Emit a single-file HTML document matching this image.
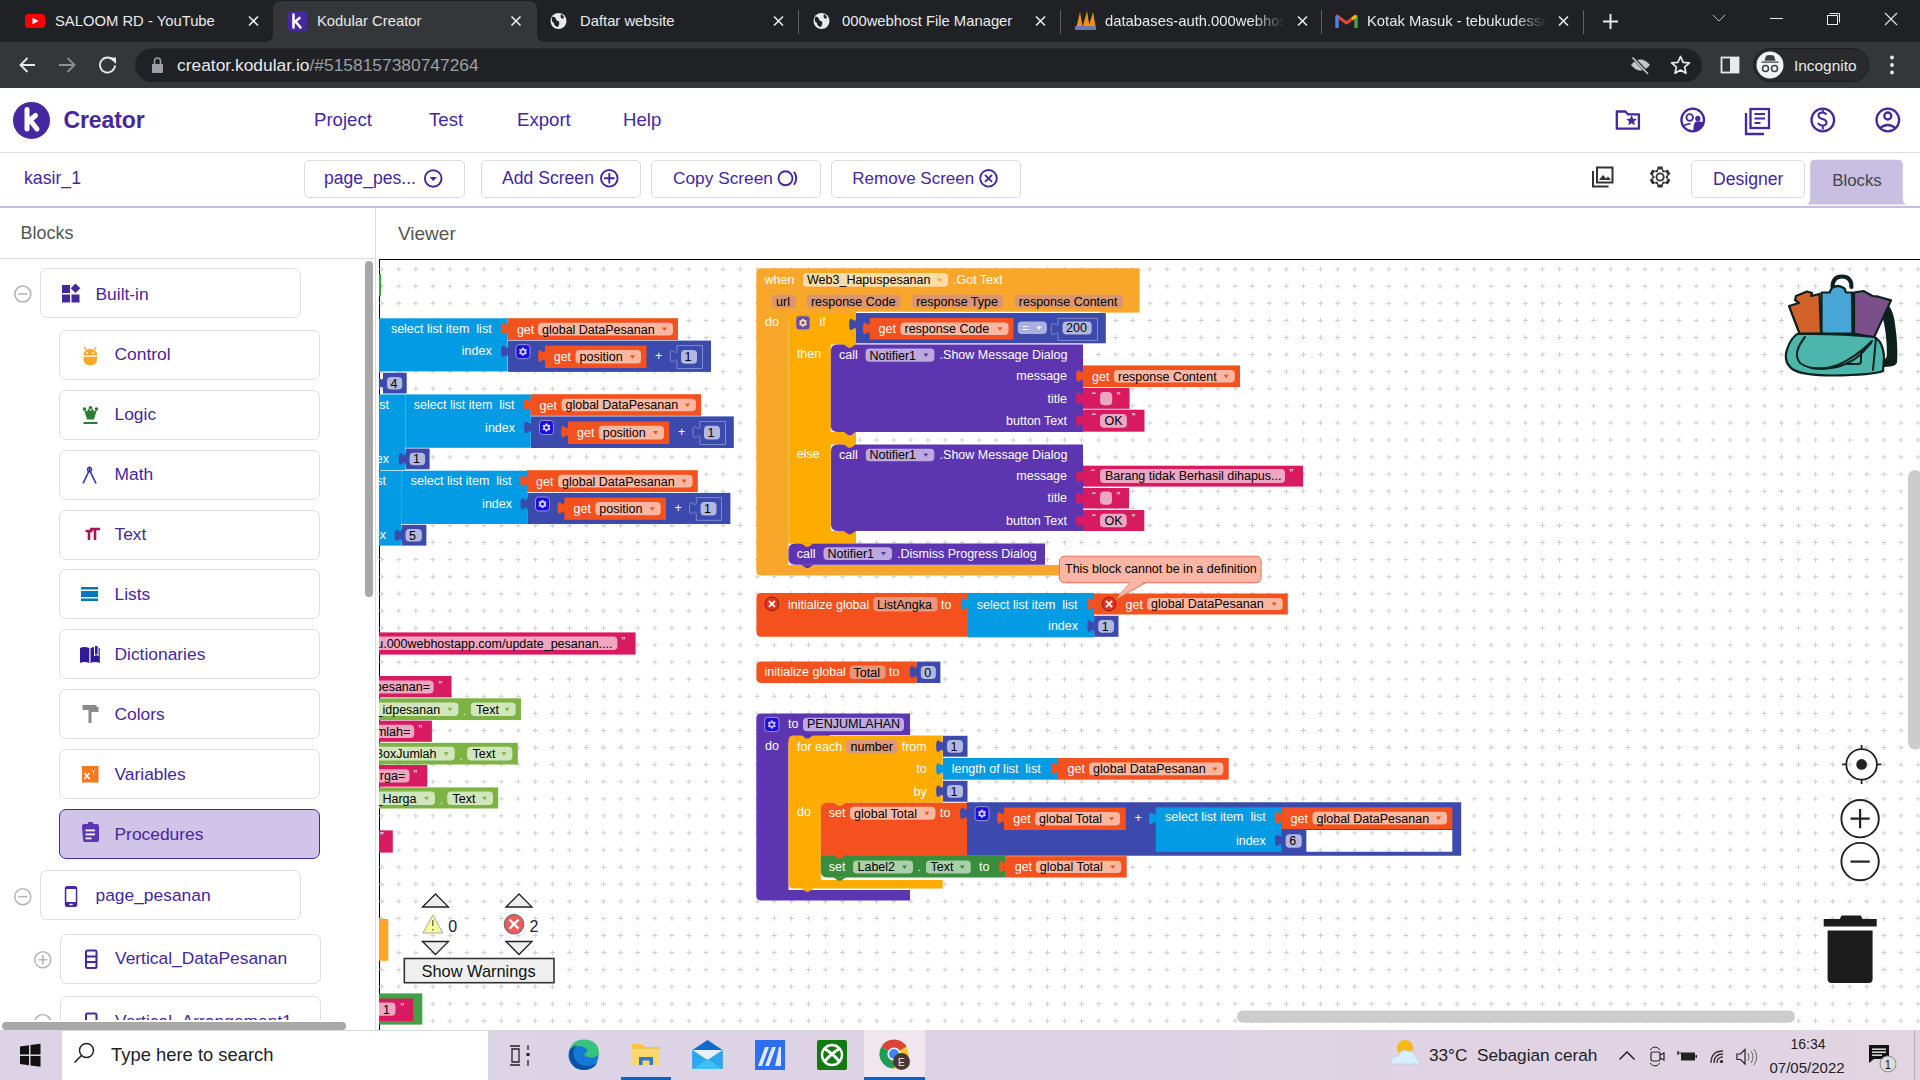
<!DOCTYPE html>
<html><head><meta charset="utf-8">
<style>
*{box-sizing:border-box;margin:0;padding:0}
html,body{width:1920px;height:1080px;overflow:hidden;background:#fff;font-family:"Liberation Sans",sans-serif;position:relative}
.a{position:absolute}
.t{position:absolute;white-space:nowrap;line-height:1;z-index:3}
#tabs{left:0;top:0;width:1920px;height:42px;background:#202124}
#addr{left:0;top:42px;width:1920px;height:46px;background:#35363a}
.tabtxt{color:#e8eaed;font-size:14.8px;top:13.5px}
.sep{position:absolute;top:10px;width:1px;height:24px;background:#5f6368}
.menu{color:#4527a0;font-size:18.6px;top:111px}
.btn{position:absolute;top:159.8px;height:37.8px;border:1px solid #dcdcdc;border-radius:5px;background:transparent}
.btxt{color:#4527a0;font-size:17.6px;top:170px}
.item{position:absolute;height:50px;border:1px solid #dedede;border-radius:7px;background:transparent}
.itxt{color:#4527a0;font-size:17.4px}
</style></head><body>
<!-- ============ CHROME TABS ============ -->
<div id="tabs" class="a"></div>
<!-- active tab -->
<svg class="a" style="left:0;top:0" width="1920" height="88">
  <path d="M265,42 q8,0 8,-8 L273,9 q0,-8 8,-8 L529,1 q8,0 8,8 L537,34 q0,8 8,8 Z" fill="#35363a"/>
  <!-- youtube icon -->
  <rect x="25" y="14" width="20" height="14" rx="3.5" fill="#ff0000"/>
  <path d="M32.5,17.8 L38.5,21 L32.5,24.2 Z" fill="#fff"/>
  <!-- close x's -->
  <g stroke="#e8eaed" stroke-width="1.6">
    <path d="M249,16.5 l9,9 M258,16.5 l-9,9"/>
    <path d="M511.5,16.5 l9,9 M520.5,16.5 l-9,9"/>
    <path d="M774,16.5 l9,9 M783,16.5 l-9,9"/>
    <path d="M1036,16.5 l9,9 M1045,16.5 l-9,9"/>
    <path d="M1298,16.5 l9,9 M1307,16.5 l-9,9"/>
    <path d="M1559,16.5 l9,9 M1568,16.5 l-9,9"/>
  </g>
  <!-- kodular icon -->
  <rect x="288" y="11" width="19" height="20" rx="3" fill="#4527a0"/>
  <path d="M293.5,14.5 l0,13 M293.5,23 l6,-5 M295.5,21.5 l5,6" stroke="#fff" stroke-width="2.6" fill="none" stroke-linecap="round"/>
  <!-- globes -->
  <g fill="#e8eaed">
    <circle cx="558.5" cy="21" r="8"/>
    <circle cx="821.5" cy="21" r="8"/>
  </g>
  <g fill="#202124">
    <path d="M552,17 q3,-1 4,2 q1,3 3,2 q1,3 -1,6 q-4,-1 -4,-4 q-3,-1 -2,-6 Z"/>
    <path d="M561,14 q3,2 3,4 q-2,1 -3,0 q-1,-2 0,-4Z"/>
    <path d="M815,17 q3,-1 4,2 q1,3 3,2 q1,3 -1,6 q-4,-1 -4,-4 q-3,-1 -2,-6 Z"/>
    <path d="M824,14 q3,2 3,4 q-2,1 -3,0 q-1,-2 0,-4Z"/>
  </g>
  <!-- PMA icon -->
  <path d="M1076,29 l4,-17 l3,17 Z M1082,29 l5,-18 l3,18 Z M1088,29 l5,-17 l3,17 Z" fill="#f29111"/>
  <rect x="1075" y="26" width="21" height="4" fill="#6c78af"/>
  <!-- gmail -->
  <path d="M1337,28 L1337,16 L1346.5,23 L1356,16 L1356,28" fill="none" stroke="#ea4335" stroke-width="3" stroke-linejoin="round"/>
  <path d="M1337,16 L1337,28" stroke="#4285f4" stroke-width="3"/>
  <path d="M1356,16 L1356,28" stroke="#34a853" stroke-width="3"/>
  <path d="M1352,19 L1356,16" stroke="#fbbc04" stroke-width="3"/>
  <!-- separators -->
  <g fill="#5f6368"><rect x="798" y="10" width="1" height="24"/><rect x="1060" y="10" width="1" height="24"/><rect x="1321" y="10" width="1" height="24"/><rect x="1583" y="10" width="1" height="24"/></g>
  <!-- plus -->
  <path d="M1610.5,14 l0,15 M1603,21.5 l15,0" stroke="#e8eaed" stroke-width="2"/>
  <!-- window controls -->
  <path d="M1713,15 l6,6 l6,-6" stroke="#bdc1c6" stroke-width="1" fill="none"/>
  <path d="M1770,18.5 l13,0" stroke="#e8eaed" stroke-width="1"/>
  <rect x="1827.5" y="15.5" width="10" height="9" fill="none" stroke="#e8eaed" stroke-width="1"/>
  <path d="M1829.5,13.5 l10,0 l0,9" stroke="#e8eaed" stroke-width="1" fill="none"/>
  <path d="M1885,13 l12,12 M1897,13 l-12,12" stroke="#e8eaed" stroke-width="1.1"/>
  <!-- address bar row -->
  <rect x="0" y="42" width="1920" height="46" fill="#35363a"/>
  <path d="M265,42 q8,0 8,-8 L273,42 Z M537,34 q0,8 8,8 L537,42 Z" fill="#35363a"/>
  <g stroke="#e8eaed" stroke-width="1.8" fill="none">
    <path d="M21,65 l14,0 M27.5,58 l-7,7 l7,7"/>
  </g>
  <g stroke="#8e9093" stroke-width="1.8" fill="none">
    <path d="M59,65 l15,0 M67.5,58 l7,7 l-7,7"/>
  </g>
  <path d="M113.5,60.5 a7.5,7.5 0 1 0 1.5,5" stroke="#e8eaed" stroke-width="1.8" fill="none"/>
  <path d="M109.5,57.5 l6.5,0 l0,6.5 Z" fill="#e8eaed"/>
  <rect x="135" y="48.5" width="1567" height="33.5" rx="16.75" fill="#202124"/>
  <rect x="152" y="64" width="11" height="9" rx="1" fill="#9aa0a6"/>
  <path d="M154.5,64 l0,-3 a3,3 0 0 1 6,0 l0,3" stroke="#9aa0a6" stroke-width="1.6" fill="none"/>
  <!-- eye slash -->
  <path d="M1631,65 q9.5,-11 19,0 q-9.5,11 -19,0 Z" fill="#c4c7ca"/>
  <path d="M1632,56.5 l16,17" stroke="#202124" stroke-width="3.2"/>
  <path d="M1632.5,57.5 l15.5,16.5" stroke="#c4c7ca" stroke-width="1.7"/>
  <!-- star -->
  <path d="M1680.5,56.5 l2.6,5.8 l6.3,0.6 l-4.8,4.2 l1.4,6.2 l-5.5,-3.3 l-5.5,3.3 l1.4,-6.2 l-4.8,-4.2 l6.3,-0.6 Z" fill="none" stroke="#e8eaed" stroke-width="1.7" stroke-linejoin="round"/>
  <!-- side panel -->
  <rect x="1721.5" y="57.5" width="17" height="15" fill="none" stroke="#e8eaed" stroke-width="1.8"/>
  <rect x="1730" y="57.5" width="8.5" height="15" fill="#e8eaed"/>
  <!-- incognito pill -->
  <rect x="1753.5" y="48.5" width="115" height="33" rx="16.5" fill="#292a2d" stroke="#1c1d1f"/>
  <circle cx="1770" cy="65" r="13.5" fill="#f1f3f4"/>
  <path d="M1761.5,62.8 l17,0 l0,-1.3 l-17,0 Z M1764.5,60.8 l1.5,-5 q4,-1.5 8,0 l1.5,5 Z" fill="#3c4043"/>
  <circle cx="1765.5" cy="68.5" r="3" fill="none" stroke="#3c4043" stroke-width="1.5"/>
  <circle cx="1774.5" cy="68.5" r="3" fill="none" stroke="#3c4043" stroke-width="1.5"/>
  <g fill="#e8eaed"><circle cx="1892" cy="57.5" r="1.9"/><circle cx="1892" cy="65" r="1.9"/><circle cx="1892" cy="72.5" r="1.9"/></g>
</svg>
<div class="t tabtxt" style="left:55px">SALOOM RD - YouTube</div>
<div class="t tabtxt" style="left:317px">Kodular Creator</div>
<div class="t tabtxt" style="left:580px">Daftar website</div>
<div class="t tabtxt" style="left:842px">000webhost File Manager</div>
<div class="t tabtxt" style="left:1105px;width:180px;overflow:hidden;-webkit-mask-image:linear-gradient(90deg,#000 82%,transparent)">databases-auth.000webhost</div>
<div class="t tabtxt" style="left:1367px;width:180px;overflow:hidden;-webkit-mask-image:linear-gradient(90deg,#000 82%,transparent)">Kotak Masuk - tebukudesser</div>
<div class="t" style="left:177px;top:56.5px;font-size:17.4px;color:#e8eaed">creator.kodular.io<span style="color:#9aa0a6">/#5158157380747264</span></div>
<div class="t" style="left:1794px;top:57.5px;font-size:15.4px;color:#e8eaed">Incognito</div>

<!-- ============ KODULAR HEADER ============ -->
<svg class="a" style="left:0;top:88px;z-index:2" width="1920" height="120">
  <circle cx="31.5" cy="32.4" r="18.5" fill="#4527a0"/>
  <path d="M27,21.5 l0,19.5" stroke="#fff" stroke-width="5" stroke-linecap="round"/>
  <path d="M28,34 l7.5,-6.5 M29.5,31.5 l7.5,9.5" stroke="#fff" stroke-width="5" stroke-linecap="round"/>
  <rect x="0" y="64" width="1920" height="1" fill="#dedede"/>
  <!-- header icons -->
  <g fill="none" stroke="#4527a0" stroke-width="2.3">
    <path d="M1616.8,23.5 l8.5,0 l2.6,2.8 l11,0 l0,14.4 l-22.1,0 Z" stroke-linejoin="round"/>
    <circle cx="1692.7" cy="32" r="11.3"/>
    <path d="M1746,25 l0,21 l18,0"/>
    <rect x="1750.5" y="21" width="18.5" height="19"/>
    <circle cx="1822.8" cy="32" r="11.3"/>
    <circle cx="1887.8" cy="32" r="11.3"/>
    <circle cx="1887.8" cy="28" r="3.5"/>
    <path d="M1879.5,40.5 q8.3,-7 16.6,0"/>
  </g>
  <path d="M1631.6,27.3 l1.6,3.4 l3.7,0.4 l-2.8,2.5 l0.8,3.6 l-3.3,-1.9 l-3.3,1.9 l0.8,-3.6 l-2.8,-2.5 l3.7,-0.4 Z" fill="#4527a0"/>
  <g fill="#4527a0">
    <circle cx="1689.7" cy="29.5" r="3.3" fill="none" stroke="#4527a0" stroke-width="1.8"/><circle cx="1697.8" cy="30.4" r="2.6"/>
    <path d="M1693.5,43.5 a11.5,11.5 0 0 0 10.5,-8.8 q-4,-2.2 -8,-1.2 q-3,1.5 -2.5,10 Z"/><path d="M1684,37.5 q3,-1.5 6.5,-1.8" stroke="#4527a0" stroke-width="1.8" fill="none"/>
    <rect x="1754.5" y="25" width="10.5" height="2"/><rect x="1754.5" y="29.5" width="10.5" height="2"/><rect x="1754.5" y="34" width="6" height="2"/>
  </g>
  <path d="M1826.5,26.5 q-2,-2 -4,-2 q-4,0 -4,3 q0,2.5 4,3.5 q4,1 4,3.5 q0,3 -4,3 q-3,0 -4.5,-2.5 M1822.8,22 l0,3 M1822.8,38.5 l0,3" fill="none" stroke="#4527a0" stroke-width="2"/>
  <!-- toolbar buttons icons -->
  <g fill="none" stroke="#4527a0" stroke-width="1.9">
    <circle cx="433.2" cy="90.5" r="8.3"/>
    <circle cx="609.3" cy="90.3" r="8.3"/>
    <path d="M609.3,85 l0,10.6 M604,90.3 l10.6,0"/>
    <circle cx="785.5" cy="90.3" r="7"/>
    <path d="M794,83.8 q4.5,6.5 0,13"/>
    <circle cx="988.5" cy="90.3" r="8.3"/>
    <path d="M985,86.8 l7,7 M992,86.8 l-7,7"/>
  </g>
  <path d="M429.5,89 l7.4,0 l-3.7,4 Z" fill="#4527a0"/>
  <!-- gallery / gear -->
  <g fill="none" stroke="#333" stroke-width="2">
    <path d="M1593,83 l0,15.5 l15.5,0"/>
    <rect x="1597" y="79.5" width="15.5" height="15" />
  </g>
  <path d="M1599,92 l4,-5 l3,3.5 l2,-2 l3,3.5 Z" fill="#333"/>
  <path transform="translate(1647.0,75.9) scale(1.09)" d="M19.14,12.94c0.04-0.3,0.06-0.61,0.06-0.94c0-0.32-0.02-0.64-0.07-0.94l2.03-1.58c0.18-0.14,0.23-0.41,0.12-0.61l-1.92-3.32c-0.12-0.22-0.37-0.29-0.59-0.22l-2.39,0.96c-0.5-0.38-1.03-0.7-1.62-0.94L14.4,2.81c-0.04-0.24-0.24-0.41-0.48-0.41h-3.84c-0.24,0-0.43,0.17-0.47,0.41L9.25,5.35C8.66,5.59,8.12,5.92,7.63,6.29L5.24,5.33c-0.22-0.08-0.47,0-0.59,0.22L2.74,8.87C2.62,9.08,2.66,9.34,2.86,9.48l2.03,1.58C4.84,11.36,4.8,11.69,4.8,12s0.02,0.64,0.07,0.94l-2.03,1.58c-0.18,0.14-0.23,0.41-0.12,0.61l1.92,3.32c0.12,0.22,0.37,0.29,0.59,0.22l2.39-0.96c0.5,0.38,1.03,0.7,1.62,0.94l0.36,2.54c0.05,0.24,0.24,0.41,0.48,0.41h3.84c0.24,0,0.44-0.17,0.47-0.41l0.36-2.54c0.59-0.24,1.13-0.56,1.62-0.94l2.39,0.96c0.22,0.08,0.47,0,0.59-0.22l1.92-3.32c0.12-0.22,0.07-0.47-0.12-0.61L19.14,12.94z" fill="#333"/>
  <path transform="translate(1650.7,79.6) scale(0.785)" d="M19.14,12.94c0.04-0.3,0.06-0.61,0.06-0.94c0-0.32-0.02-0.64-0.07-0.94l2.03-1.58c0.18-0.14,0.23-0.41,0.12-0.61l-1.92-3.32c-0.12-0.22-0.37-0.29-0.59-0.22l-2.39,0.96c-0.5-0.38-1.03-0.7-1.62-0.94L14.4,2.81c-0.04-0.24-0.24-0.41-0.48-0.41h-3.84c-0.24,0-0.43,0.17-0.47,0.41L9.25,5.35C8.66,5.59,8.12,5.92,7.63,6.29L5.24,5.33c-0.22-0.08-0.47,0-0.59,0.22L2.74,8.87C2.62,9.08,2.66,9.34,2.86,9.48l2.03,1.58C4.84,11.36,4.8,11.69,4.8,12s0.02,0.64,0.07,0.94l-2.03,1.58c-0.18,0.14-0.23,0.41-0.12,0.61l1.92,3.32c0.12,0.22,0.37,0.29,0.59,0.22l2.39-0.96c0.5,0.38,1.03,0.7,1.62,0.94l0.36,2.54c0.05,0.24,0.24,0.41,0.48,0.41h3.84c0.24,0,0.44-0.17,0.47-0.41l0.36-2.54c0.59-0.24,1.13-0.56,1.62-0.94l2.39,0.96c0.22,0.08,0.47,0,0.59-0.22l1.92-3.32c0.12-0.22,0.07-0.47-0.12-0.61L19.14,12.94z" fill="#fff"/>
  <circle cx="1660.1" cy="89" r="3.6" fill="none" stroke="#333" stroke-width="1.9"/>
  <!-- blocks tab -->
  <path d="M1805,116.4 q5.2,0 5.2,-6 L1810.2,76.6 q0,-4.8 4.8,-4.8 L1898,71.8 q4.8,0 4.8,4.8 L1902.8,110.4 q0,6 5.5,6 Z" fill="#c8bfe3"/>
  <rect x="0" y="118" width="1920" height="2.2" fill="#c5bde2"/>
</svg>
<div class="t" style="left:63.5px;top:109px;font-size:23px;font-weight:bold;color:#4527a0;letter-spacing:-0.1px">Creator</div>
<div class="t menu" style="left:314px">Project</div>
<div class="t menu" style="left:429px">Test</div>
<div class="t menu" style="left:517px">Export</div>
<div class="t menu" style="left:623px">Help</div>
<div class="t" style="left:24px;top:169.5px;font-size:17.7px;color:#4527a0">kasir_1</div>
<div class="btn" style="left:303.5px;width:161px"></div>
<div class="btn" style="left:480.5px;width:160px"></div>
<div class="btn" style="left:651px;width:170px"></div>
<div class="btn" style="left:831px;width:190px"></div>
<div class="btn" style="left:1691px;width:114px"></div>
<div class="t btxt" style="left:324px">page_pes...</div>
<div class="t btxt" style="left:502px">Add Screen</div>
<div class="t btxt" style="left:673px;font-size:17.3px">Copy Screen</div>
<div class="t btxt" style="left:852.3px;font-size:17px">Remove Screen</div>
<div class="t btxt" style="left:1713px;top:171px">Designer</div>
<div class="t btxt" style="left:1832.3px;top:172.8px;color:#444;font-size:16.8px">Blocks</div>

<!-- ============ LEFT PANEL ============ -->
<div class="a" style="left:375px;top:208px;width:1px;height:822px;background:#dcdcdc"></div>
<div class="a" style="left:0;top:258px;width:375px;height:1px;background:#dcdcdc"></div>
<div class="t" style="left:20.5px;top:223.5px;font-size:18px;color:#555">Blocks</div>
<div class="t" style="left:398px;top:223.5px;font-size:19px;color:#555">Viewer</div>
<div class="a" style="left:0;top:259px;width:375px;height:761px;overflow:hidden">
  <svg class="a" style="left:0;top:-259px;z-index:2" width="375" height="1280">
    <g fill="none" stroke="#b5b5b5" stroke-width="1.6">
      <circle cx="22.8" cy="294" r="8"/><path d="M18.3,294 l9,0"/>
      <circle cx="22.8" cy="896.7" r="8"/><path d="M18.3,896.7 l9,0"/>
      <circle cx="42.8" cy="959.8" r="8"/><path d="M38.3,959.8 l9,0 M42.8,955.3 l0,9"/>
      <circle cx="42.8" cy="1022.5" r="8"/>
    </g>
    <!-- icons -->
    <g fill="#4527a0">
      <rect x="62" y="285" width="8" height="8"/><rect x="62" y="294.5" width="8" height="8"/><rect x="71.5" y="294.5" width="8" height="8"/>
      <path d="M75.5,283.5 l4.8,4.8 l-4.8,4.8 l-4.8,-4.8 Z"/>
    </g>
    <path d="M83.5,355.5 q0,-6.5 6.8,-6.5 q6.8,0 6.8,6.5 Z M83.5,356.8 l13.6,0 l0,2 q0,6.4 -6.8,6.4 q-6.8,0 -6.8,-6.4 Z" fill="#f9a825"/>
    <path d="M86,350 l-1.5,-3 M94.6,350 l1.5,-3" stroke="#f9a825" stroke-width="1.2"/>
    <g fill="#fff"><circle cx="87.2" cy="352.8" r="1"/><circle cx="93.4" cy="352.8" r="1"/></g>
    <path d="M84,409.5 l3,10 l7,0 l3,-10 l-3,2 l-1.5,-3 l-2,2.5 l-2,-2.5 l-1.5,3 Z M83.5,422 l14,0 l0,2 l-14,0 Z" fill="#2e7d32"/><g fill="#2e7d32"><circle cx="84.5" cy="409" r="1.8"/><circle cx="90.5" cy="407.8" r="1.8"/><circle cx="96.5" cy="409" r="1.8"/></g>
    <path d="M83,483.5 l6.5,-13.5 l6.5,13.5 M89.5,469.5 l0,-3" stroke="#3b3ba8" stroke-width="1.7" fill="none"/>
    <circle cx="89.5" cy="469.5" r="2" fill="none" stroke="#3b3ba8" stroke-width="1.4"/>
    <path d="M89,531 l0,9 M85.5,531 l7,0 M95,529 l0,11 M90,529 l10,0" stroke="#ad1457" stroke-width="2.6" fill="none"/>
    <g fill="#0277bd"><rect x="81" y="587" width="17" height="2.5"/><rect x="81" y="591" width="17" height="6"/><rect x="81" y="598.5" width="17" height="2.5"/></g>
    <path d="M80,648 q4.5,-2 9.3,0 l0,15 q-5,-2 -9.3,0 Z M90.5,648 q4.5,-2 9.3,0 l0,15 q-4.5,-2 -9.3,0 Z" fill="#311b92"/>
    <path d="M94.5,646 l0,10 l1.8,-1.8 l1.8,1.8 l0,-10" stroke="#fff" stroke-width="1" fill="#311b92"/>
    <path d="M82.5,705 l14,0 l0,5 l-14,0 Z M96.5,707 l2,0 l0,5 l-7,0 l0,11 l-3,0 l0,-13 l8,0 Z" fill="#8a8a8a"/>
    <rect x="82" y="766" width="16.5" height="16.5" fill="#f4791f"/>
    <path d="M84.5,773 l5,6 M89.5,773 l-5,6" stroke="#fff" stroke-width="1.6"/>
    <path d="M92,769 l1.5,2 l1.5,-2 M93.5,771 l0,3" stroke="#fff" stroke-width="1"/>
    <path d="M82,826 q0,-2 2,-2 l3.5,0 l1,-2 l4,0 l1,2 l3.5,0 q2,0 2,2 l0,14 q0,2 -2,2 l-12,0 q-2,0 -2,-2 Z" fill="#5e35b1"/>
    <g fill="#fff"><rect x="85.5" y="829.5" width="9.5" height="1.8"/><rect x="85.5" y="833.5" width="9.5" height="1.8"/><rect x="85.5" y="837.5" width="6" height="1.8"/></g>
    <rect x="64.8" y="886" width="12.5" height="21" rx="2.5" fill="#4527a0"/><rect x="66.3" y="889" width="9.5" height="13" fill="#fff"/><rect x="69.3" y="903.8" width="3.5" height="1.5" rx="0.7" fill="#fff"/>
    <rect x="86" y="950.5" width="10.5" height="17.5" rx="1.5" fill="none" stroke="#4527a0" stroke-width="2"/>
    <path d="M86,956.5 l10.5,0 M86,962 l10.5,0" stroke="#4527a0" stroke-width="2"/>
    <rect x="86" y="1013.5" width="10.5" height="17.5" rx="1.5" fill="none" stroke="#4527a0" stroke-width="2"/>
  </svg>
  <div class="item" style="left:40px;top:8.5px;width:261px"></div>
  <div class="item" style="left:59px;top:70.5px;width:261px"></div>
  <div class="item" style="left:59px;top:130.5px;width:261px"></div>
  <div class="item" style="left:59px;top:190.5px;width:261px"></div>
  <div class="item" style="left:59px;top:250.5px;width:261px"></div>
  <div class="item" style="left:59px;top:310px;width:261px"></div>
  <div class="item" style="left:59px;top:370px;width:261px"></div>
  <div class="item" style="left:59px;top:430px;width:261px"></div>
  <div class="item" style="left:59px;top:490px;width:261px"></div>
  <div class="item" style="left:59px;top:550px;width:261px;background:#d1c4e9;border:1.5px solid #4527a0"></div>
  <div class="item" style="left:40px;top:611px;width:261px"></div>
  <div class="item" style="left:60px;top:674.5px;width:261px"></div>
  <div class="item" style="left:60px;top:737px;width:261px"></div>
</div>
<!-- left panel svg icons painted over items -->

<div class="t itxt" style="left:95.5px;top:285.5px">Built-in</div>
<div class="t itxt" style="left:114.5px;top:345.5px">Control</div>
<div class="t itxt" style="left:114.5px;top:405.5px">Logic</div>
<div class="t itxt" style="left:114.5px;top:465.5px">Math</div>
<div class="t itxt" style="left:114.5px;top:525.5px">Text</div>
<div class="t itxt" style="left:114.5px;top:585.5px">Lists</div>
<div class="t itxt" style="left:114.5px;top:645.5px">Dictionaries</div>
<div class="t itxt" style="left:114.5px;top:705.5px">Colors</div>
<div class="t itxt" style="left:114.5px;top:765.5px">Variables</div>
<div class="t itxt" style="left:114.5px;top:825.5px">Procedures</div>
<div class="t itxt" style="left:95.5px;top:887.0px">page_pesanan</div>
<div class="t itxt" style="left:115px;top:950.0px">Vertical_DataPesanan</div>
<div class="a" style="left:0;top:997px;width:375px;height:23px;overflow:hidden"><div class="t itxt" style="left:115px;top:15.5px">Vertical_Arrangement1</div></div>

<div class="a" style="left:2px;top:1022px;width:344px;height:7.6px;border-radius:4px;background:#a8a8a8"></div>
<div class="a" style="left:365px;top:261px;width:8px;height:336px;border-radius:4px;background:#a8a8a8"></div>

<!-- ============ CANVAS ============ -->
<svg class="a" style="left:0;top:0;font-family:'Liberation Sans',sans-serif" width="1920" height="1080">
  <defs>
    <pattern id="grid" patternUnits="userSpaceOnUse" x="-2.745" y="4.845" width="17.07" height="17.07">
      <path d="M6.035,8.535 l5,0 M8.535,6.035 l0,5" stroke="#cdcdcd" stroke-width="1"/>
    </pattern>
    <clipPath id="cv"><rect x="379" y="259" width="1541" height="771"/></clipPath>
  </defs>
  <g clip-path="url(#cv)">
    <rect x="379" y="259" width="1541" height="771" fill="#fff"/>
    
    <rect x="379" y="259" width="1541" height="1" fill="#000"/>
    <rect x="379" y="259" width="1" height="771" fill="#000"/>
<path d="M379.21 269.18h5M381.71 266.68v5M396.28 269.18h5M398.78 266.68v5M413.35 269.18h5M415.85 266.68v5M430.42 269.18h5M432.92 266.68v5M447.49 269.18h5M449.99 266.68v5M464.56 269.18h5M467.06 266.68v5M481.63 269.18h5M484.13 266.68v5M498.70 269.18h5M501.20 266.68v5M515.77 269.18h5M518.27 266.68v5M532.84 269.18h5M535.34 266.68v5M549.91 269.18h5M552.41 266.68v5M566.98 269.18h5M569.48 266.68v5M584.05 269.18h5M586.55 266.68v5M601.12 269.18h5M603.62 266.68v5M618.19 269.18h5M620.69 266.68v5M635.26 269.18h5M637.76 266.68v5M652.33 269.18h5M654.83 266.68v5M669.40 269.18h5M671.90 266.68v5M686.47 269.18h5M688.97 266.68v5M703.54 269.18h5M706.04 266.68v5M720.61 269.18h5M723.11 266.68v5M737.68 269.18h5M740.18 266.68v5M754.75 269.18h5M757.25 266.68v5M771.82 269.18h5M774.32 266.68v5M788.89 269.18h5M791.39 266.68v5M805.96 269.18h5M808.46 266.68v5M823.03 269.18h5M825.53 266.68v5M840.10 269.18h5M842.60 266.68v5M857.17 269.18h5M859.67 266.68v5M874.24 269.18h5M876.74 266.68v5M891.31 269.18h5M893.81 266.68v5M908.38 269.18h5M910.88 266.68v5M925.45 269.18h5M927.95 266.68v5M942.52 269.18h5M945.02 266.68v5M959.59 269.18h5M962.09 266.68v5M976.66 269.18h5M979.16 266.68v5M993.73 269.18h5M996.23 266.68v5M1010.80 269.18h5M1013.30 266.68v5M1027.87 269.18h5M1030.37 266.68v5M1044.94 269.18h5M1047.44 266.68v5M1062.01 269.18h5M1064.51 266.68v5M1079.08 269.18h5M1081.58 266.68v5M1096.15 269.18h5M1098.65 266.68v5M1113.22 269.18h5M1115.72 266.68v5M1130.29 269.18h5M1132.79 266.68v5M1147.36 269.18h5M1149.86 266.68v5M1164.43 269.18h5M1166.93 266.68v5M1181.50 269.18h5M1184.00 266.68v5M1198.57 269.18h5M1201.07 266.68v5M1215.64 269.18h5M1218.14 266.68v5M1232.71 269.18h5M1235.21 266.68v5M1249.78 269.18h5M1252.28 266.68v5M1266.85 269.18h5M1269.35 266.68v5M1283.92 269.18h5M1286.42 266.68v5M1300.99 269.18h5M1303.49 266.68v5M1318.06 269.18h5M1320.56 266.68v5M1335.13 269.18h5M1337.63 266.68v5M1352.20 269.18h5M1354.70 266.68v5M1369.27 269.18h5M1371.77 266.68v5M1386.34 269.18h5M1388.84 266.68v5M1403.41 269.18h5M1405.91 266.68v5M1420.48 269.18h5M1422.98 266.68v5M1437.55 269.18h5M1440.05 266.68v5M1454.62 269.18h5M1457.12 266.68v5M1471.69 269.18h5M1474.19 266.68v5M1488.76 269.18h5M1491.26 266.68v5M1505.83 269.18h5M1508.33 266.68v5M1522.90 269.18h5M1525.40 266.68v5M1539.97 269.18h5M1542.47 266.68v5M1557.04 269.18h5M1559.54 266.68v5M1574.11 269.18h5M1576.61 266.68v5M1591.18 269.18h5M1593.68 266.68v5M1608.25 269.18h5M1610.75 266.68v5M1625.32 269.18h5M1627.82 266.68v5M1642.39 269.18h5M1644.89 266.68v5M1659.46 269.18h5M1661.96 266.68v5M1676.53 269.18h5M1679.03 266.68v5M1693.60 269.18h5M1696.10 266.68v5M1710.67 269.18h5M1713.17 266.68v5M1727.74 269.18h5M1730.24 266.68v5M1744.81 269.18h5M1747.31 266.68v5M1761.88 269.18h5M1764.38 266.68v5M1778.95 269.18h5M1781.45 266.68v5M1796.02 269.18h5M1798.52 266.68v5M1813.09 269.18h5M1815.59 266.68v5M1830.16 269.18h5M1832.66 266.68v5M1847.23 269.18h5M1849.73 266.68v5M1864.30 269.18h5M1866.80 266.68v5M1881.37 269.18h5M1883.87 266.68v5M1898.44 269.18h5M1900.94 266.68v5M1915.51 269.18h5M1918.01 266.68v5M379.21 286.26h5M381.71 283.76v5M396.28 286.26h5M398.78 283.76v5M413.35 286.26h5M415.85 283.76v5M430.42 286.26h5M432.92 283.76v5M447.49 286.26h5M449.99 283.76v5M464.56 286.26h5M467.06 283.76v5M481.63 286.26h5M484.13 283.76v5M498.70 286.26h5M501.20 283.76v5M515.77 286.26h5M518.27 283.76v5M532.84 286.26h5M535.34 283.76v5M549.91 286.26h5M552.41 283.76v5M566.98 286.26h5M569.48 283.76v5M584.05 286.26h5M586.55 283.76v5M601.12 286.26h5M603.62 283.76v5M618.19 286.26h5M620.69 283.76v5M635.26 286.26h5M637.76 283.76v5M652.33 286.26h5M654.83 283.76v5M669.40 286.26h5M671.90 283.76v5M686.47 286.26h5M688.97 283.76v5M703.54 286.26h5M706.04 283.76v5M720.61 286.26h5M723.11 283.76v5M737.68 286.26h5M740.18 283.76v5M754.75 286.26h5M757.25 283.76v5M771.82 286.26h5M774.32 283.76v5M788.89 286.26h5M791.39 283.76v5M805.96 286.26h5M808.46 283.76v5M823.03 286.26h5M825.53 283.76v5M840.10 286.26h5M842.60 283.76v5M857.17 286.26h5M859.67 283.76v5M874.24 286.26h5M876.74 283.76v5M891.31 286.26h5M893.81 283.76v5M908.38 286.26h5M910.88 283.76v5M925.45 286.26h5M927.95 283.76v5M942.52 286.26h5M945.02 283.76v5M959.59 286.26h5M962.09 283.76v5M976.66 286.26h5M979.16 283.76v5M993.73 286.26h5M996.23 283.76v5M1010.80 286.26h5M1013.30 283.76v5M1027.87 286.26h5M1030.37 283.76v5M1044.94 286.26h5M1047.44 283.76v5M1062.01 286.26h5M1064.51 283.76v5M1079.08 286.26h5M1081.58 283.76v5M1096.15 286.26h5M1098.65 283.76v5M1113.22 286.26h5M1115.72 283.76v5M1130.29 286.26h5M1132.79 283.76v5M1147.36 286.26h5M1149.86 283.76v5M1164.43 286.26h5M1166.93 283.76v5M1181.50 286.26h5M1184.00 283.76v5M1198.57 286.26h5M1201.07 283.76v5M1215.64 286.26h5M1218.14 283.76v5M1232.71 286.26h5M1235.21 283.76v5M1249.78 286.26h5M1252.28 283.76v5M1266.85 286.26h5M1269.35 283.76v5M1283.92 286.26h5M1286.42 283.76v5M1300.99 286.26h5M1303.49 283.76v5M1318.06 286.26h5M1320.56 283.76v5M1335.13 286.26h5M1337.63 283.76v5M1352.20 286.26h5M1354.70 283.76v5M1369.27 286.26h5M1371.77 283.76v5M1386.34 286.26h5M1388.84 283.76v5M1403.41 286.26h5M1405.91 283.76v5M1420.48 286.26h5M1422.98 283.76v5M1437.55 286.26h5M1440.05 283.76v5M1454.62 286.26h5M1457.12 283.76v5M1471.69 286.26h5M1474.19 283.76v5M1488.76 286.26h5M1491.26 283.76v5M1505.83 286.26h5M1508.33 283.76v5M1522.90 286.26h5M1525.40 283.76v5M1539.97 286.26h5M1542.47 283.76v5M1557.04 286.26h5M1559.54 283.76v5M1574.11 286.26h5M1576.61 283.76v5M1591.18 286.26h5M1593.68 283.76v5M1608.25 286.26h5M1610.75 283.76v5M1625.32 286.26h5M1627.82 283.76v5M1642.39 286.26h5M1644.89 283.76v5M1659.46 286.26h5M1661.96 283.76v5M1676.53 286.26h5M1679.03 283.76v5M1693.60 286.26h5M1696.10 283.76v5M1710.67 286.26h5M1713.17 283.76v5M1727.74 286.26h5M1730.24 283.76v5M1744.81 286.26h5M1747.31 283.76v5M1761.88 286.26h5M1764.38 283.76v5M1778.95 286.26h5M1781.45 283.76v5M1796.02 286.26h5M1798.52 283.76v5M1813.09 286.26h5M1815.59 283.76v5M1830.16 286.26h5M1832.66 283.76v5M1847.23 286.26h5M1849.73 283.76v5M1864.30 286.26h5M1866.80 283.76v5M1881.37 286.26h5M1883.87 283.76v5M1898.44 286.26h5M1900.94 283.76v5M1915.51 286.26h5M1918.01 283.76v5M379.21 303.34h5M381.71 300.84v5M396.28 303.34h5M398.78 300.84v5M413.35 303.34h5M415.85 300.84v5M430.42 303.34h5M432.92 300.84v5M447.49 303.34h5M449.99 300.84v5M464.56 303.34h5M467.06 300.84v5M481.63 303.34h5M484.13 300.84v5M498.70 303.34h5M501.20 300.84v5M515.77 303.34h5M518.27 300.84v5M532.84 303.34h5M535.34 300.84v5M549.91 303.34h5M552.41 300.84v5M566.98 303.34h5M569.48 300.84v5M584.05 303.34h5M586.55 300.84v5M601.12 303.34h5M603.62 300.84v5M618.19 303.34h5M620.69 300.84v5M635.26 303.34h5M637.76 300.84v5M652.33 303.34h5M654.83 300.84v5M669.40 303.34h5M671.90 300.84v5M686.47 303.34h5M688.97 300.84v5M703.54 303.34h5M706.04 300.84v5M720.61 303.34h5M723.11 300.84v5M737.68 303.34h5M740.18 300.84v5M754.75 303.34h5M757.25 300.84v5M771.82 303.34h5M774.32 300.84v5M788.89 303.34h5M791.39 300.84v5M805.96 303.34h5M808.46 300.84v5M823.03 303.34h5M825.53 300.84v5M840.10 303.34h5M842.60 300.84v5M857.17 303.34h5M859.67 300.84v5M874.24 303.34h5M876.74 300.84v5M891.31 303.34h5M893.81 300.84v5M908.38 303.34h5M910.88 300.84v5M925.45 303.34h5M927.95 300.84v5M942.52 303.34h5M945.02 300.84v5M959.59 303.34h5M962.09 300.84v5M976.66 303.34h5M979.16 300.84v5M993.73 303.34h5M996.23 300.84v5M1010.80 303.34h5M1013.30 300.84v5M1027.87 303.34h5M1030.37 300.84v5M1044.94 303.34h5M1047.44 300.84v5M1062.01 303.34h5M1064.51 300.84v5M1079.08 303.34h5M1081.58 300.84v5M1096.15 303.34h5M1098.65 300.84v5M1113.22 303.34h5M1115.72 300.84v5M1130.29 303.34h5M1132.79 300.84v5M1147.36 303.34h5M1149.86 300.84v5M1164.43 303.34h5M1166.93 300.84v5M1181.50 303.34h5M1184.00 300.84v5M1198.57 303.34h5M1201.07 300.84v5M1215.64 303.34h5M1218.14 300.84v5M1232.71 303.34h5M1235.21 300.84v5M1249.78 303.34h5M1252.28 300.84v5M1266.85 303.34h5M1269.35 300.84v5M1283.92 303.34h5M1286.42 300.84v5M1300.99 303.34h5M1303.49 300.84v5M1318.06 303.34h5M1320.56 300.84v5M1335.13 303.34h5M1337.63 300.84v5M1352.20 303.34h5M1354.70 300.84v5M1369.27 303.34h5M1371.77 300.84v5M1386.34 303.34h5M1388.84 300.84v5M1403.41 303.34h5M1405.91 300.84v5M1420.48 303.34h5M1422.98 300.84v5M1437.55 303.34h5M1440.05 300.84v5M1454.62 303.34h5M1457.12 300.84v5M1471.69 303.34h5M1474.19 300.84v5M1488.76 303.34h5M1491.26 300.84v5M1505.83 303.34h5M1508.33 300.84v5M1522.90 303.34h5M1525.40 300.84v5M1539.97 303.34h5M1542.47 300.84v5M1557.04 303.34h5M1559.54 300.84v5M1574.11 303.34h5M1576.61 300.84v5M1591.18 303.34h5M1593.68 300.84v5M1608.25 303.34h5M1610.75 300.84v5M1625.32 303.34h5M1627.82 300.84v5M1642.39 303.34h5M1644.89 300.84v5M1659.46 303.34h5M1661.96 300.84v5M1676.53 303.34h5M1679.03 300.84v5M1693.60 303.34h5M1696.10 300.84v5M1710.67 303.34h5M1713.17 300.84v5M1727.74 303.34h5M1730.24 300.84v5M1744.81 303.34h5M1747.31 300.84v5M1761.88 303.34h5M1764.38 300.84v5M1778.95 303.34h5M1781.45 300.84v5M1796.02 303.34h5M1798.52 300.84v5M1813.09 303.34h5M1815.59 300.84v5M1830.16 303.34h5M1832.66 300.84v5M1847.23 303.34h5M1849.73 300.84v5M1864.30 303.34h5M1866.80 300.84v5M1881.37 303.34h5M1883.87 300.84v5M1898.44 303.34h5M1900.94 300.84v5M1915.51 303.34h5M1918.01 300.84v5M379.21 320.43h5M381.71 317.93v5M396.28 320.43h5M398.78 317.93v5M413.35 320.43h5M415.85 317.93v5M430.42 320.43h5M432.92 317.93v5M447.49 320.43h5M449.99 317.93v5M464.56 320.43h5M467.06 317.93v5M481.63 320.43h5M484.13 317.93v5M498.70 320.43h5M501.20 317.93v5M515.77 320.43h5M518.27 317.93v5M532.84 320.43h5M535.34 317.93v5M549.91 320.43h5M552.41 317.93v5M566.98 320.43h5M569.48 317.93v5M584.05 320.43h5M586.55 317.93v5M601.12 320.43h5M603.62 317.93v5M618.19 320.43h5M620.69 317.93v5M635.26 320.43h5M637.76 317.93v5M652.33 320.43h5M654.83 317.93v5M669.40 320.43h5M671.90 317.93v5M686.47 320.43h5M688.97 317.93v5M703.54 320.43h5M706.04 317.93v5M720.61 320.43h5M723.11 317.93v5M737.68 320.43h5M740.18 317.93v5M754.75 320.43h5M757.25 317.93v5M771.82 320.43h5M774.32 317.93v5M788.89 320.43h5M791.39 317.93v5M805.96 320.43h5M808.46 317.93v5M823.03 320.43h5M825.53 317.93v5M840.10 320.43h5M842.60 317.93v5M857.17 320.43h5M859.67 317.93v5M874.24 320.43h5M876.74 317.93v5M891.31 320.43h5M893.81 317.93v5M908.38 320.43h5M910.88 317.93v5M925.45 320.43h5M927.95 317.93v5M942.52 320.43h5M945.02 317.93v5M959.59 320.43h5M962.09 317.93v5M976.66 320.43h5M979.16 317.93v5M993.73 320.43h5M996.23 317.93v5M1010.80 320.43h5M1013.30 317.93v5M1027.87 320.43h5M1030.37 317.93v5M1044.94 320.43h5M1047.44 317.93v5M1062.01 320.43h5M1064.51 317.93v5M1079.08 320.43h5M1081.58 317.93v5M1096.15 320.43h5M1098.65 317.93v5M1113.22 320.43h5M1115.72 317.93v5M1130.29 320.43h5M1132.79 317.93v5M1147.36 320.43h5M1149.86 317.93v5M1164.43 320.43h5M1166.93 317.93v5M1181.50 320.43h5M1184.00 317.93v5M1198.57 320.43h5M1201.07 317.93v5M1215.64 320.43h5M1218.14 317.93v5M1232.71 320.43h5M1235.21 317.93v5M1249.78 320.43h5M1252.28 317.93v5M1266.85 320.43h5M1269.35 317.93v5M1283.92 320.43h5M1286.42 317.93v5M1300.99 320.43h5M1303.49 317.93v5M1318.06 320.43h5M1320.56 317.93v5M1335.13 320.43h5M1337.63 317.93v5M1352.20 320.43h5M1354.70 317.93v5M1369.27 320.43h5M1371.77 317.93v5M1386.34 320.43h5M1388.84 317.93v5M1403.41 320.43h5M1405.91 317.93v5M1420.48 320.43h5M1422.98 317.93v5M1437.55 320.43h5M1440.05 317.93v5M1454.62 320.43h5M1457.12 317.93v5M1471.69 320.43h5M1474.19 317.93v5M1488.76 320.43h5M1491.26 317.93v5M1505.83 320.43h5M1508.33 317.93v5M1522.90 320.43h5M1525.40 317.93v5M1539.97 320.43h5M1542.47 317.93v5M1557.04 320.43h5M1559.54 317.93v5M1574.11 320.43h5M1576.61 317.93v5M1591.18 320.43h5M1593.68 317.93v5M1608.25 320.43h5M1610.75 317.93v5M1625.32 320.43h5M1627.82 317.93v5M1642.39 320.43h5M1644.89 317.93v5M1659.46 320.43h5M1661.96 317.93v5M1676.53 320.43h5M1679.03 317.93v5M1693.60 320.43h5M1696.10 317.93v5M1710.67 320.43h5M1713.17 317.93v5M1727.74 320.43h5M1730.24 317.93v5M1744.81 320.43h5M1747.31 317.93v5M1761.88 320.43h5M1764.38 317.93v5M1778.95 320.43h5M1781.45 317.93v5M1796.02 320.43h5M1798.52 317.93v5M1813.09 320.43h5M1815.59 317.93v5M1830.16 320.43h5M1832.66 317.93v5M1847.23 320.43h5M1849.73 317.93v5M1864.30 320.43h5M1866.80 317.93v5M1881.37 320.43h5M1883.87 317.93v5M1898.44 320.43h5M1900.94 317.93v5M1915.51 320.43h5M1918.01 317.93v5M379.21 337.51h5M381.71 335.01v5M396.28 337.51h5M398.78 335.01v5M413.35 337.51h5M415.85 335.01v5M430.42 337.51h5M432.92 335.01v5M447.49 337.51h5M449.99 335.01v5M464.56 337.51h5M467.06 335.01v5M481.63 337.51h5M484.13 335.01v5M498.70 337.51h5M501.20 335.01v5M515.77 337.51h5M518.27 335.01v5M532.84 337.51h5M535.34 335.01v5M549.91 337.51h5M552.41 335.01v5M566.98 337.51h5M569.48 335.01v5M584.05 337.51h5M586.55 335.01v5M601.12 337.51h5M603.62 335.01v5M618.19 337.51h5M620.69 335.01v5M635.26 337.51h5M637.76 335.01v5M652.33 337.51h5M654.83 335.01v5M669.40 337.51h5M671.90 335.01v5M686.47 337.51h5M688.97 335.01v5M703.54 337.51h5M706.04 335.01v5M720.61 337.51h5M723.11 335.01v5M737.68 337.51h5M740.18 335.01v5M754.75 337.51h5M757.25 335.01v5M771.82 337.51h5M774.32 335.01v5M788.89 337.51h5M791.39 335.01v5M805.96 337.51h5M808.46 335.01v5M823.03 337.51h5M825.53 335.01v5M840.10 337.51h5M842.60 335.01v5M857.17 337.51h5M859.67 335.01v5M874.24 337.51h5M876.74 335.01v5M891.31 337.51h5M893.81 335.01v5M908.38 337.51h5M910.88 335.01v5M925.45 337.51h5M927.95 335.01v5M942.52 337.51h5M945.02 335.01v5M959.59 337.51h5M962.09 335.01v5M976.66 337.51h5M979.16 335.01v5M993.73 337.51h5M996.23 335.01v5M1010.80 337.51h5M1013.30 335.01v5M1027.87 337.51h5M1030.37 335.01v5M1044.94 337.51h5M1047.44 335.01v5M1062.01 337.51h5M1064.51 335.01v5M1079.08 337.51h5M1081.58 335.01v5M1096.15 337.51h5M1098.65 335.01v5M1113.22 337.51h5M1115.72 335.01v5M1130.29 337.51h5M1132.79 335.01v5M1147.36 337.51h5M1149.86 335.01v5M1164.43 337.51h5M1166.93 335.01v5M1181.50 337.51h5M1184.00 335.01v5M1198.57 337.51h5M1201.07 335.01v5M1215.64 337.51h5M1218.14 335.01v5M1232.71 337.51h5M1235.21 335.01v5M1249.78 337.51h5M1252.28 335.01v5M1266.85 337.51h5M1269.35 335.01v5M1283.92 337.51h5M1286.42 335.01v5M1300.99 337.51h5M1303.49 335.01v5M1318.06 337.51h5M1320.56 335.01v5M1335.13 337.51h5M1337.63 335.01v5M1352.20 337.51h5M1354.70 335.01v5M1369.27 337.51h5M1371.77 335.01v5M1386.34 337.51h5M1388.84 335.01v5M1403.41 337.51h5M1405.91 335.01v5M1420.48 337.51h5M1422.98 335.01v5M1437.55 337.51h5M1440.05 335.01v5M1454.62 337.51h5M1457.12 335.01v5M1471.69 337.51h5M1474.19 335.01v5M1488.76 337.51h5M1491.26 335.01v5M1505.83 337.51h5M1508.33 335.01v5M1522.90 337.51h5M1525.40 335.01v5M1539.97 337.51h5M1542.47 335.01v5M1557.04 337.51h5M1559.54 335.01v5M1574.11 337.51h5M1576.61 335.01v5M1591.18 337.51h5M1593.68 335.01v5M1608.25 337.51h5M1610.75 335.01v5M1625.32 337.51h5M1627.82 335.01v5M1642.39 337.51h5M1644.89 335.01v5M1659.46 337.51h5M1661.96 335.01v5M1676.53 337.51h5M1679.03 335.01v5M1693.60 337.51h5M1696.10 335.01v5M1710.67 337.51h5M1713.17 335.01v5M1727.74 337.51h5M1730.24 335.01v5M1744.81 337.51h5M1747.31 335.01v5M1761.88 337.51h5M1764.38 335.01v5M1778.95 337.51h5M1781.45 335.01v5M1796.02 337.51h5M1798.52 335.01v5M1813.09 337.51h5M1815.59 335.01v5M1830.16 337.51h5M1832.66 335.01v5M1847.23 337.51h5M1849.73 335.01v5M1864.30 337.51h5M1866.80 335.01v5M1881.37 337.51h5M1883.87 335.01v5M1898.44 337.51h5M1900.94 335.01v5M1915.51 337.51h5M1918.01 335.01v5M379.21 354.60h5M381.71 352.10v5M396.28 354.60h5M398.78 352.10v5M413.35 354.60h5M415.85 352.10v5M430.42 354.60h5M432.92 352.10v5M447.49 354.60h5M449.99 352.10v5M464.56 354.60h5M467.06 352.10v5M481.63 354.60h5M484.13 352.10v5M498.70 354.60h5M501.20 352.10v5M515.77 354.60h5M518.27 352.10v5M532.84 354.60h5M535.34 352.10v5M549.91 354.60h5M552.41 352.10v5M566.98 354.60h5M569.48 352.10v5M584.05 354.60h5M586.55 352.10v5M601.12 354.60h5M603.62 352.10v5M618.19 354.60h5M620.69 352.10v5M635.26 354.60h5M637.76 352.10v5M652.33 354.60h5M654.83 352.10v5M669.40 354.60h5M671.90 352.10v5M686.47 354.60h5M688.97 352.10v5M703.54 354.60h5M706.04 352.10v5M720.61 354.60h5M723.11 352.10v5M737.68 354.60h5M740.18 352.10v5M754.75 354.60h5M757.25 352.10v5M771.82 354.60h5M774.32 352.10v5M788.89 354.60h5M791.39 352.10v5M805.96 354.60h5M808.46 352.10v5M823.03 354.60h5M825.53 352.10v5M840.10 354.60h5M842.60 352.10v5M857.17 354.60h5M859.67 352.10v5M874.24 354.60h5M876.74 352.10v5M891.31 354.60h5M893.81 352.10v5M908.38 354.60h5M910.88 352.10v5M925.45 354.60h5M927.95 352.10v5M942.52 354.60h5M945.02 352.10v5M959.59 354.60h5M962.09 352.10v5M976.66 354.60h5M979.16 352.10v5M993.73 354.60h5M996.23 352.10v5M1010.80 354.60h5M1013.30 352.10v5M1027.87 354.60h5M1030.37 352.10v5M1044.94 354.60h5M1047.44 352.10v5M1062.01 354.60h5M1064.51 352.10v5M1079.08 354.60h5M1081.58 352.10v5M1096.15 354.60h5M1098.65 352.10v5M1113.22 354.60h5M1115.72 352.10v5M1130.29 354.60h5M1132.79 352.10v5M1147.36 354.60h5M1149.86 352.10v5M1164.43 354.60h5M1166.93 352.10v5M1181.50 354.60h5M1184.00 352.10v5M1198.57 354.60h5M1201.07 352.10v5M1215.64 354.60h5M1218.14 352.10v5M1232.71 354.60h5M1235.21 352.10v5M1249.78 354.60h5M1252.28 352.10v5M1266.85 354.60h5M1269.35 352.10v5M1283.92 354.60h5M1286.42 352.10v5M1300.99 354.60h5M1303.49 352.10v5M1318.06 354.60h5M1320.56 352.10v5M1335.13 354.60h5M1337.63 352.10v5M1352.20 354.60h5M1354.70 352.10v5M1369.27 354.60h5M1371.77 352.10v5M1386.34 354.60h5M1388.84 352.10v5M1403.41 354.60h5M1405.91 352.10v5M1420.48 354.60h5M1422.98 352.10v5M1437.55 354.60h5M1440.05 352.10v5M1454.62 354.60h5M1457.12 352.10v5M1471.69 354.60h5M1474.19 352.10v5M1488.76 354.60h5M1491.26 352.10v5M1505.83 354.60h5M1508.33 352.10v5M1522.90 354.60h5M1525.40 352.10v5M1539.97 354.60h5M1542.47 352.10v5M1557.04 354.60h5M1559.54 352.10v5M1574.11 354.60h5M1576.61 352.10v5M1591.18 354.60h5M1593.68 352.10v5M1608.25 354.60h5M1610.75 352.10v5M1625.32 354.60h5M1627.82 352.10v5M1642.39 354.60h5M1644.89 352.10v5M1659.46 354.60h5M1661.96 352.10v5M1676.53 354.60h5M1679.03 352.10v5M1693.60 354.60h5M1696.10 352.10v5M1710.67 354.60h5M1713.17 352.10v5M1727.74 354.60h5M1730.24 352.10v5M1744.81 354.60h5M1747.31 352.10v5M1761.88 354.60h5M1764.38 352.10v5M1778.95 354.60h5M1781.45 352.10v5M1796.02 354.60h5M1798.52 352.10v5M1813.09 354.60h5M1815.59 352.10v5M1830.16 354.60h5M1832.66 352.10v5M1847.23 354.60h5M1849.73 352.10v5M1864.30 354.60h5M1866.80 352.10v5M1881.37 354.60h5M1883.87 352.10v5M1898.44 354.60h5M1900.94 352.10v5M1915.51 354.60h5M1918.01 352.10v5M379.21 371.69h5M381.71 369.19v5M396.28 371.69h5M398.78 369.19v5M413.35 371.69h5M415.85 369.19v5M430.42 371.69h5M432.92 369.19v5M447.49 371.69h5M449.99 369.19v5M464.56 371.69h5M467.06 369.19v5M481.63 371.69h5M484.13 369.19v5M498.70 371.69h5M501.20 369.19v5M515.77 371.69h5M518.27 369.19v5M532.84 371.69h5M535.34 369.19v5M549.91 371.69h5M552.41 369.19v5M566.98 371.69h5M569.48 369.19v5M584.05 371.69h5M586.55 369.19v5M601.12 371.69h5M603.62 369.19v5M618.19 371.69h5M620.69 369.19v5M635.26 371.69h5M637.76 369.19v5M652.33 371.69h5M654.83 369.19v5M669.40 371.69h5M671.90 369.19v5M686.47 371.69h5M688.97 369.19v5M703.54 371.69h5M706.04 369.19v5M720.61 371.69h5M723.11 369.19v5M737.68 371.69h5M740.18 369.19v5M754.75 371.69h5M757.25 369.19v5M771.82 371.69h5M774.32 369.19v5M788.89 371.69h5M791.39 369.19v5M805.96 371.69h5M808.46 369.19v5M823.03 371.69h5M825.53 369.19v5M840.10 371.69h5M842.60 369.19v5M857.17 371.69h5M859.67 369.19v5M874.24 371.69h5M876.74 369.19v5M891.31 371.69h5M893.81 369.19v5M908.38 371.69h5M910.88 369.19v5M925.45 371.69h5M927.95 369.19v5M942.52 371.69h5M945.02 369.19v5M959.59 371.69h5M962.09 369.19v5M976.66 371.69h5M979.16 369.19v5M993.73 371.69h5M996.23 369.19v5M1010.80 371.69h5M1013.30 369.19v5M1027.87 371.69h5M1030.37 369.19v5M1044.94 371.69h5M1047.44 369.19v5M1062.01 371.69h5M1064.51 369.19v5M1079.08 371.69h5M1081.58 369.19v5M1096.15 371.69h5M1098.65 369.19v5M1113.22 371.69h5M1115.72 369.19v5M1130.29 371.69h5M1132.79 369.19v5M1147.36 371.69h5M1149.86 369.19v5M1164.43 371.69h5M1166.93 369.19v5M1181.50 371.69h5M1184.00 369.19v5M1198.57 371.69h5M1201.07 369.19v5M1215.64 371.69h5M1218.14 369.19v5M1232.71 371.69h5M1235.21 369.19v5M1249.78 371.69h5M1252.28 369.19v5M1266.85 371.69h5M1269.35 369.19v5M1283.92 371.69h5M1286.42 369.19v5M1300.99 371.69h5M1303.49 369.19v5M1318.06 371.69h5M1320.56 369.19v5M1335.13 371.69h5M1337.63 369.19v5M1352.20 371.69h5M1354.70 369.19v5M1369.27 371.69h5M1371.77 369.19v5M1386.34 371.69h5M1388.84 369.19v5M1403.41 371.69h5M1405.91 369.19v5M1420.48 371.69h5M1422.98 369.19v5M1437.55 371.69h5M1440.05 369.19v5M1454.62 371.69h5M1457.12 369.19v5M1471.69 371.69h5M1474.19 369.19v5M1488.76 371.69h5M1491.26 369.19v5M1505.83 371.69h5M1508.33 369.19v5M1522.90 371.69h5M1525.40 369.19v5M1539.97 371.69h5M1542.47 369.19v5M1557.04 371.69h5M1559.54 369.19v5M1574.11 371.69h5M1576.61 369.19v5M1591.18 371.69h5M1593.68 369.19v5M1608.25 371.69h5M1610.75 369.19v5M1625.32 371.69h5M1627.82 369.19v5M1642.39 371.69h5M1644.89 369.19v5M1659.46 371.69h5M1661.96 369.19v5M1676.53 371.69h5M1679.03 369.19v5M1693.60 371.69h5M1696.10 369.19v5M1710.67 371.69h5M1713.17 369.19v5M1727.74 371.69h5M1730.24 369.19v5M1744.81 371.69h5M1747.31 369.19v5M1761.88 371.69h5M1764.38 369.19v5M1778.95 371.69h5M1781.45 369.19v5M1796.02 371.69h5M1798.52 369.19v5M1813.09 371.69h5M1815.59 369.19v5M1830.16 371.69h5M1832.66 369.19v5M1847.23 371.69h5M1849.73 369.19v5M1864.30 371.69h5M1866.80 369.19v5M1881.37 371.69h5M1883.87 369.19v5M1898.44 371.69h5M1900.94 369.19v5M1915.51 371.69h5M1918.01 369.19v5M379.21 388.77h5M381.71 386.27v5M396.28 388.77h5M398.78 386.27v5M413.35 388.77h5M415.85 386.27v5M430.42 388.77h5M432.92 386.27v5M447.49 388.77h5M449.99 386.27v5M464.56 388.77h5M467.06 386.27v5M481.63 388.77h5M484.13 386.27v5M498.70 388.77h5M501.20 386.27v5M515.77 388.77h5M518.27 386.27v5M532.84 388.77h5M535.34 386.27v5M549.91 388.77h5M552.41 386.27v5M566.98 388.77h5M569.48 386.27v5M584.05 388.77h5M586.55 386.27v5M601.12 388.77h5M603.62 386.27v5M618.19 388.77h5M620.69 386.27v5M635.26 388.77h5M637.76 386.27v5M652.33 388.77h5M654.83 386.27v5M669.40 388.77h5M671.90 386.27v5M686.47 388.77h5M688.97 386.27v5M703.54 388.77h5M706.04 386.27v5M720.61 388.77h5M723.11 386.27v5M737.68 388.77h5M740.18 386.27v5M754.75 388.77h5M757.25 386.27v5M771.82 388.77h5M774.32 386.27v5M788.89 388.77h5M791.39 386.27v5M805.96 388.77h5M808.46 386.27v5M823.03 388.77h5M825.53 386.27v5M840.10 388.77h5M842.60 386.27v5M857.17 388.77h5M859.67 386.27v5M874.24 388.77h5M876.74 386.27v5M891.31 388.77h5M893.81 386.27v5M908.38 388.77h5M910.88 386.27v5M925.45 388.77h5M927.95 386.27v5M942.52 388.77h5M945.02 386.27v5M959.59 388.77h5M962.09 386.27v5M976.66 388.77h5M979.16 386.27v5M993.73 388.77h5M996.23 386.27v5M1010.80 388.77h5M1013.30 386.27v5M1027.87 388.77h5M1030.37 386.27v5M1044.94 388.77h5M1047.44 386.27v5M1062.01 388.77h5M1064.51 386.27v5M1079.08 388.77h5M1081.58 386.27v5M1096.15 388.77h5M1098.65 386.27v5M1113.22 388.77h5M1115.72 386.27v5M1130.29 388.77h5M1132.79 386.27v5M1147.36 388.77h5M1149.86 386.27v5M1164.43 388.77h5M1166.93 386.27v5M1181.50 388.77h5M1184.00 386.27v5M1198.57 388.77h5M1201.07 386.27v5M1215.64 388.77h5M1218.14 386.27v5M1232.71 388.77h5M1235.21 386.27v5M1249.78 388.77h5M1252.28 386.27v5M1266.85 388.77h5M1269.35 386.27v5M1283.92 388.77h5M1286.42 386.27v5M1300.99 388.77h5M1303.49 386.27v5M1318.06 388.77h5M1320.56 386.27v5M1335.13 388.77h5M1337.63 386.27v5M1352.20 388.77h5M1354.70 386.27v5M1369.27 388.77h5M1371.77 386.27v5M1386.34 388.77h5M1388.84 386.27v5M1403.41 388.77h5M1405.91 386.27v5M1420.48 388.77h5M1422.98 386.27v5M1437.55 388.77h5M1440.05 386.27v5M1454.62 388.77h5M1457.12 386.27v5M1471.69 388.77h5M1474.19 386.27v5M1488.76 388.77h5M1491.26 386.27v5M1505.83 388.77h5M1508.33 386.27v5M1522.90 388.77h5M1525.40 386.27v5M1539.97 388.77h5M1542.47 386.27v5M1557.04 388.77h5M1559.54 386.27v5M1574.11 388.77h5M1576.61 386.27v5M1591.18 388.77h5M1593.68 386.27v5M1608.25 388.77h5M1610.75 386.27v5M1625.32 388.77h5M1627.82 386.27v5M1642.39 388.77h5M1644.89 386.27v5M1659.46 388.77h5M1661.96 386.27v5M1676.53 388.77h5M1679.03 386.27v5M1693.60 388.77h5M1696.10 386.27v5M1710.67 388.77h5M1713.17 386.27v5M1727.74 388.77h5M1730.24 386.27v5M1744.81 388.77h5M1747.31 386.27v5M1761.88 388.77h5M1764.38 386.27v5M1778.95 388.77h5M1781.45 386.27v5M1796.02 388.77h5M1798.52 386.27v5M1813.09 388.77h5M1815.59 386.27v5M1830.16 388.77h5M1832.66 386.27v5M1847.23 388.77h5M1849.73 386.27v5M1864.30 388.77h5M1866.80 386.27v5M1881.37 388.77h5M1883.87 386.27v5M1898.44 388.77h5M1900.94 386.27v5M1915.51 388.77h5M1918.01 386.27v5M379.21 405.86h5M381.71 403.36v5M396.28 405.86h5M398.78 403.36v5M413.35 405.86h5M415.85 403.36v5M430.42 405.86h5M432.92 403.36v5M447.49 405.86h5M449.99 403.36v5M464.56 405.86h5M467.06 403.36v5M481.63 405.86h5M484.13 403.36v5M498.70 405.86h5M501.20 403.36v5M515.77 405.86h5M518.27 403.36v5M532.84 405.86h5M535.34 403.36v5M549.91 405.86h5M552.41 403.36v5M566.98 405.86h5M569.48 403.36v5M584.05 405.86h5M586.55 403.36v5M601.12 405.86h5M603.62 403.36v5M618.19 405.86h5M620.69 403.36v5M635.26 405.86h5M637.76 403.36v5M652.33 405.86h5M654.83 403.36v5M669.40 405.86h5M671.90 403.36v5M686.47 405.86h5M688.97 403.36v5M703.54 405.86h5M706.04 403.36v5M720.61 405.86h5M723.11 403.36v5M737.68 405.86h5M740.18 403.36v5M754.75 405.86h5M757.25 403.36v5M771.82 405.86h5M774.32 403.36v5M788.89 405.86h5M791.39 403.36v5M805.96 405.86h5M808.46 403.36v5M823.03 405.86h5M825.53 403.36v5M840.10 405.86h5M842.60 403.36v5M857.17 405.86h5M859.67 403.36v5M874.24 405.86h5M876.74 403.36v5M891.31 405.86h5M893.81 403.36v5M908.38 405.86h5M910.88 403.36v5M925.45 405.86h5M927.95 403.36v5M942.52 405.86h5M945.02 403.36v5M959.59 405.86h5M962.09 403.36v5M976.66 405.86h5M979.16 403.36v5M993.73 405.86h5M996.23 403.36v5M1010.80 405.86h5M1013.30 403.36v5M1027.87 405.86h5M1030.37 403.36v5M1044.94 405.86h5M1047.44 403.36v5M1062.01 405.86h5M1064.51 403.36v5M1079.08 405.86h5M1081.58 403.36v5M1096.15 405.86h5M1098.65 403.36v5M1113.22 405.86h5M1115.72 403.36v5M1130.29 405.86h5M1132.79 403.36v5M1147.36 405.86h5M1149.86 403.36v5M1164.43 405.86h5M1166.93 403.36v5M1181.50 405.86h5M1184.00 403.36v5M1198.57 405.86h5M1201.07 403.36v5M1215.64 405.86h5M1218.14 403.36v5M1232.71 405.86h5M1235.21 403.36v5M1249.78 405.86h5M1252.28 403.36v5M1266.85 405.86h5M1269.35 403.36v5M1283.92 405.86h5M1286.42 403.36v5M1300.99 405.86h5M1303.49 403.36v5M1318.06 405.86h5M1320.56 403.36v5M1335.13 405.86h5M1337.63 403.36v5M1352.20 405.86h5M1354.70 403.36v5M1369.27 405.86h5M1371.77 403.36v5M1386.34 405.86h5M1388.84 403.36v5M1403.41 405.86h5M1405.91 403.36v5M1420.48 405.86h5M1422.98 403.36v5M1437.55 405.86h5M1440.05 403.36v5M1454.62 405.86h5M1457.12 403.36v5M1471.69 405.86h5M1474.19 403.36v5M1488.76 405.86h5M1491.26 403.36v5M1505.83 405.86h5M1508.33 403.36v5M1522.90 405.86h5M1525.40 403.36v5M1539.97 405.86h5M1542.47 403.36v5M1557.04 405.86h5M1559.54 403.36v5M1574.11 405.86h5M1576.61 403.36v5M1591.18 405.86h5M1593.68 403.36v5M1608.25 405.86h5M1610.75 403.36v5M1625.32 405.86h5M1627.82 403.36v5M1642.39 405.86h5M1644.89 403.36v5M1659.46 405.86h5M1661.96 403.36v5M1676.53 405.86h5M1679.03 403.36v5M1693.60 405.86h5M1696.10 403.36v5M1710.67 405.86h5M1713.17 403.36v5M1727.74 405.86h5M1730.24 403.36v5M1744.81 405.86h5M1747.31 403.36v5M1761.88 405.86h5M1764.38 403.36v5M1778.95 405.86h5M1781.45 403.36v5M1796.02 405.86h5M1798.52 403.36v5M1813.09 405.86h5M1815.59 403.36v5M1830.16 405.86h5M1832.66 403.36v5M1847.23 405.86h5M1849.73 403.36v5M1864.30 405.86h5M1866.80 403.36v5M1881.37 405.86h5M1883.87 403.36v5M1898.44 405.86h5M1900.94 403.36v5M1915.51 405.86h5M1918.01 403.36v5M379.21 422.94h5M381.71 420.44v5M396.28 422.94h5M398.78 420.44v5M413.35 422.94h5M415.85 420.44v5M430.42 422.94h5M432.92 420.44v5M447.49 422.94h5M449.99 420.44v5M464.56 422.94h5M467.06 420.44v5M481.63 422.94h5M484.13 420.44v5M498.70 422.94h5M501.20 420.44v5M515.77 422.94h5M518.27 420.44v5M532.84 422.94h5M535.34 420.44v5M549.91 422.94h5M552.41 420.44v5M566.98 422.94h5M569.48 420.44v5M584.05 422.94h5M586.55 420.44v5M601.12 422.94h5M603.62 420.44v5M618.19 422.94h5M620.69 420.44v5M635.26 422.94h5M637.76 420.44v5M652.33 422.94h5M654.83 420.44v5M669.40 422.94h5M671.90 420.44v5M686.47 422.94h5M688.97 420.44v5M703.54 422.94h5M706.04 420.44v5M720.61 422.94h5M723.11 420.44v5M737.68 422.94h5M740.18 420.44v5M754.75 422.94h5M757.25 420.44v5M771.82 422.94h5M774.32 420.44v5M788.89 422.94h5M791.39 420.44v5M805.96 422.94h5M808.46 420.44v5M823.03 422.94h5M825.53 420.44v5M840.10 422.94h5M842.60 420.44v5M857.17 422.94h5M859.67 420.44v5M874.24 422.94h5M876.74 420.44v5M891.31 422.94h5M893.81 420.44v5M908.38 422.94h5M910.88 420.44v5M925.45 422.94h5M927.95 420.44v5M942.52 422.94h5M945.02 420.44v5M959.59 422.94h5M962.09 420.44v5M976.66 422.94h5M979.16 420.44v5M993.73 422.94h5M996.23 420.44v5M1010.80 422.94h5M1013.30 420.44v5M1027.87 422.94h5M1030.37 420.44v5M1044.94 422.94h5M1047.44 420.44v5M1062.01 422.94h5M1064.51 420.44v5M1079.08 422.94h5M1081.58 420.44v5M1096.15 422.94h5M1098.65 420.44v5M1113.22 422.94h5M1115.72 420.44v5M1130.29 422.94h5M1132.79 420.44v5M1147.36 422.94h5M1149.86 420.44v5M1164.43 422.94h5M1166.93 420.44v5M1181.50 422.94h5M1184.00 420.44v5M1198.57 422.94h5M1201.07 420.44v5M1215.64 422.94h5M1218.14 420.44v5M1232.71 422.94h5M1235.21 420.44v5M1249.78 422.94h5M1252.28 420.44v5M1266.85 422.94h5M1269.35 420.44v5M1283.92 422.94h5M1286.42 420.44v5M1300.99 422.94h5M1303.49 420.44v5M1318.06 422.94h5M1320.56 420.44v5M1335.13 422.94h5M1337.63 420.44v5M1352.20 422.94h5M1354.70 420.44v5M1369.27 422.94h5M1371.77 420.44v5M1386.34 422.94h5M1388.84 420.44v5M1403.41 422.94h5M1405.91 420.44v5M1420.48 422.94h5M1422.98 420.44v5M1437.55 422.94h5M1440.05 420.44v5M1454.62 422.94h5M1457.12 420.44v5M1471.69 422.94h5M1474.19 420.44v5M1488.76 422.94h5M1491.26 420.44v5M1505.83 422.94h5M1508.33 420.44v5M1522.90 422.94h5M1525.40 420.44v5M1539.97 422.94h5M1542.47 420.44v5M1557.04 422.94h5M1559.54 420.44v5M1574.11 422.94h5M1576.61 420.44v5M1591.18 422.94h5M1593.68 420.44v5M1608.25 422.94h5M1610.75 420.44v5M1625.32 422.94h5M1627.82 420.44v5M1642.39 422.94h5M1644.89 420.44v5M1659.46 422.94h5M1661.96 420.44v5M1676.53 422.94h5M1679.03 420.44v5M1693.60 422.94h5M1696.10 420.44v5M1710.67 422.94h5M1713.17 420.44v5M1727.74 422.94h5M1730.24 420.44v5M1744.81 422.94h5M1747.31 420.44v5M1761.88 422.94h5M1764.38 420.44v5M1778.95 422.94h5M1781.45 420.44v5M1796.02 422.94h5M1798.52 420.44v5M1813.09 422.94h5M1815.59 420.44v5M1830.16 422.94h5M1832.66 420.44v5M1847.23 422.94h5M1849.73 420.44v5M1864.30 422.94h5M1866.80 420.44v5M1881.37 422.94h5M1883.87 420.44v5M1898.44 422.94h5M1900.94 420.44v5M1915.51 422.94h5M1918.01 420.44v5M379.21 440.02h5M381.71 437.52v5M396.28 440.02h5M398.78 437.52v5M413.35 440.02h5M415.85 437.52v5M430.42 440.02h5M432.92 437.52v5M447.49 440.02h5M449.99 437.52v5M464.56 440.02h5M467.06 437.52v5M481.63 440.02h5M484.13 437.52v5M498.70 440.02h5M501.20 437.52v5M515.77 440.02h5M518.27 437.52v5M532.84 440.02h5M535.34 437.52v5M549.91 440.02h5M552.41 437.52v5M566.98 440.02h5M569.48 437.52v5M584.05 440.02h5M586.55 437.52v5M601.12 440.02h5M603.62 437.52v5M618.19 440.02h5M620.69 437.52v5M635.26 440.02h5M637.76 437.52v5M652.33 440.02h5M654.83 437.52v5M669.40 440.02h5M671.90 437.52v5M686.47 440.02h5M688.97 437.52v5M703.54 440.02h5M706.04 437.52v5M720.61 440.02h5M723.11 437.52v5M737.68 440.02h5M740.18 437.52v5M754.75 440.02h5M757.25 437.52v5M771.82 440.02h5M774.32 437.52v5M788.89 440.02h5M791.39 437.52v5M805.96 440.02h5M808.46 437.52v5M823.03 440.02h5M825.53 437.52v5M840.10 440.02h5M842.60 437.52v5M857.17 440.02h5M859.67 437.52v5M874.24 440.02h5M876.74 437.52v5M891.31 440.02h5M893.81 437.52v5M908.38 440.02h5M910.88 437.52v5M925.45 440.02h5M927.95 437.52v5M942.52 440.02h5M945.02 437.52v5M959.59 440.02h5M962.09 437.52v5M976.66 440.02h5M979.16 437.52v5M993.73 440.02h5M996.23 437.52v5M1010.80 440.02h5M1013.30 437.52v5M1027.87 440.02h5M1030.37 437.52v5M1044.94 440.02h5M1047.44 437.52v5M1062.01 440.02h5M1064.51 437.52v5M1079.08 440.02h5M1081.58 437.52v5M1096.15 440.02h5M1098.65 437.52v5M1113.22 440.02h5M1115.72 437.52v5M1130.29 440.02h5M1132.79 437.52v5M1147.36 440.02h5M1149.86 437.52v5M1164.43 440.02h5M1166.93 437.52v5M1181.50 440.02h5M1184.00 437.52v5M1198.57 440.02h5M1201.07 437.52v5M1215.64 440.02h5M1218.14 437.52v5M1232.71 440.02h5M1235.21 437.52v5M1249.78 440.02h5M1252.28 437.52v5M1266.85 440.02h5M1269.35 437.52v5M1283.92 440.02h5M1286.42 437.52v5M1300.99 440.02h5M1303.49 437.52v5M1318.06 440.02h5M1320.56 437.52v5M1335.13 440.02h5M1337.63 437.52v5M1352.20 440.02h5M1354.70 437.52v5M1369.27 440.02h5M1371.77 437.52v5M1386.34 440.02h5M1388.84 437.52v5M1403.41 440.02h5M1405.91 437.52v5M1420.48 440.02h5M1422.98 437.52v5M1437.55 440.02h5M1440.05 437.52v5M1454.62 440.02h5M1457.12 437.52v5M1471.69 440.02h5M1474.19 437.52v5M1488.76 440.02h5M1491.26 437.52v5M1505.83 440.02h5M1508.33 437.52v5M1522.90 440.02h5M1525.40 437.52v5M1539.97 440.02h5M1542.47 437.52v5M1557.04 440.02h5M1559.54 437.52v5M1574.11 440.02h5M1576.61 437.52v5M1591.18 440.02h5M1593.68 437.52v5M1608.25 440.02h5M1610.75 437.52v5M1625.32 440.02h5M1627.82 437.52v5M1642.39 440.02h5M1644.89 437.52v5M1659.46 440.02h5M1661.96 437.52v5M1676.53 440.02h5M1679.03 437.52v5M1693.60 440.02h5M1696.10 437.52v5M1710.67 440.02h5M1713.17 437.52v5M1727.74 440.02h5M1730.24 437.52v5M1744.81 440.02h5M1747.31 437.52v5M1761.88 440.02h5M1764.38 437.52v5M1778.95 440.02h5M1781.45 437.52v5M1796.02 440.02h5M1798.52 437.52v5M1813.09 440.02h5M1815.59 437.52v5M1830.16 440.02h5M1832.66 437.52v5M1847.23 440.02h5M1849.73 437.52v5M1864.30 440.02h5M1866.80 437.52v5M1881.37 440.02h5M1883.87 437.52v5M1898.44 440.02h5M1900.94 437.52v5M1915.51 440.02h5M1918.01 437.52v5M379.21 457.11h5M381.71 454.61v5M396.28 457.11h5M398.78 454.61v5M413.35 457.11h5M415.85 454.61v5M430.42 457.11h5M432.92 454.61v5M447.49 457.11h5M449.99 454.61v5M464.56 457.11h5M467.06 454.61v5M481.63 457.11h5M484.13 454.61v5M498.70 457.11h5M501.20 454.61v5M515.77 457.11h5M518.27 454.61v5M532.84 457.11h5M535.34 454.61v5M549.91 457.11h5M552.41 454.61v5M566.98 457.11h5M569.48 454.61v5M584.05 457.11h5M586.55 454.61v5M601.12 457.11h5M603.62 454.61v5M618.19 457.11h5M620.69 454.61v5M635.26 457.11h5M637.76 454.61v5M652.33 457.11h5M654.83 454.61v5M669.40 457.11h5M671.90 454.61v5M686.47 457.11h5M688.97 454.61v5M703.54 457.11h5M706.04 454.61v5M720.61 457.11h5M723.11 454.61v5M737.68 457.11h5M740.18 454.61v5M754.75 457.11h5M757.25 454.61v5M771.82 457.11h5M774.32 454.61v5M788.89 457.11h5M791.39 454.61v5M805.96 457.11h5M808.46 454.61v5M823.03 457.11h5M825.53 454.61v5M840.10 457.11h5M842.60 454.61v5M857.17 457.11h5M859.67 454.61v5M874.24 457.11h5M876.74 454.61v5M891.31 457.11h5M893.81 454.61v5M908.38 457.11h5M910.88 454.61v5M925.45 457.11h5M927.95 454.61v5M942.52 457.11h5M945.02 454.61v5M959.59 457.11h5M962.09 454.61v5M976.66 457.11h5M979.16 454.61v5M993.73 457.11h5M996.23 454.61v5M1010.80 457.11h5M1013.30 454.61v5M1027.87 457.11h5M1030.37 454.61v5M1044.94 457.11h5M1047.44 454.61v5M1062.01 457.11h5M1064.51 454.61v5M1079.08 457.11h5M1081.58 454.61v5M1096.15 457.11h5M1098.65 454.61v5M1113.22 457.11h5M1115.72 454.61v5M1130.29 457.11h5M1132.79 454.61v5M1147.36 457.11h5M1149.86 454.61v5M1164.43 457.11h5M1166.93 454.61v5M1181.50 457.11h5M1184.00 454.61v5M1198.57 457.11h5M1201.07 454.61v5M1215.64 457.11h5M1218.14 454.61v5M1232.71 457.11h5M1235.21 454.61v5M1249.78 457.11h5M1252.28 454.61v5M1266.85 457.11h5M1269.35 454.61v5M1283.92 457.11h5M1286.42 454.61v5M1300.99 457.11h5M1303.49 454.61v5M1318.06 457.11h5M1320.56 454.61v5M1335.13 457.11h5M1337.63 454.61v5M1352.20 457.11h5M1354.70 454.61v5M1369.27 457.11h5M1371.77 454.61v5M1386.34 457.11h5M1388.84 454.61v5M1403.41 457.11h5M1405.91 454.61v5M1420.48 457.11h5M1422.98 454.61v5M1437.55 457.11h5M1440.05 454.61v5M1454.62 457.11h5M1457.12 454.61v5M1471.69 457.11h5M1474.19 454.61v5M1488.76 457.11h5M1491.26 454.61v5M1505.83 457.11h5M1508.33 454.61v5M1522.90 457.11h5M1525.40 454.61v5M1539.97 457.11h5M1542.47 454.61v5M1557.04 457.11h5M1559.54 454.61v5M1574.11 457.11h5M1576.61 454.61v5M1591.18 457.11h5M1593.68 454.61v5M1608.25 457.11h5M1610.75 454.61v5M1625.32 457.11h5M1627.82 454.61v5M1642.39 457.11h5M1644.89 454.61v5M1659.46 457.11h5M1661.96 454.61v5M1676.53 457.11h5M1679.03 454.61v5M1693.60 457.11h5M1696.10 454.61v5M1710.67 457.11h5M1713.17 454.61v5M1727.74 457.11h5M1730.24 454.61v5M1744.81 457.11h5M1747.31 454.61v5M1761.88 457.11h5M1764.38 454.61v5M1778.95 457.11h5M1781.45 454.61v5M1796.02 457.11h5M1798.52 454.61v5M1813.09 457.11h5M1815.59 454.61v5M1830.16 457.11h5M1832.66 454.61v5M1847.23 457.11h5M1849.73 454.61v5M1864.30 457.11h5M1866.80 454.61v5M1881.37 457.11h5M1883.87 454.61v5M1898.44 457.11h5M1900.94 454.61v5M1915.51 457.11h5M1918.01 454.61v5M379.21 474.19h5M381.71 471.69v5M396.28 474.19h5M398.78 471.69v5M413.35 474.19h5M415.85 471.69v5M430.42 474.19h5M432.92 471.69v5M447.49 474.19h5M449.99 471.69v5M464.56 474.19h5M467.06 471.69v5M481.63 474.19h5M484.13 471.69v5M498.70 474.19h5M501.20 471.69v5M515.77 474.19h5M518.27 471.69v5M532.84 474.19h5M535.34 471.69v5M549.91 474.19h5M552.41 471.69v5M566.98 474.19h5M569.48 471.69v5M584.05 474.19h5M586.55 471.69v5M601.12 474.19h5M603.62 471.69v5M618.19 474.19h5M620.69 471.69v5M635.26 474.19h5M637.76 471.69v5M652.33 474.19h5M654.83 471.69v5M669.40 474.19h5M671.90 471.69v5M686.47 474.19h5M688.97 471.69v5M703.54 474.19h5M706.04 471.69v5M720.61 474.19h5M723.11 471.69v5M737.68 474.19h5M740.18 471.69v5M754.75 474.19h5M757.25 471.69v5M771.82 474.19h5M774.32 471.69v5M788.89 474.19h5M791.39 471.69v5M805.96 474.19h5M808.46 471.69v5M823.03 474.19h5M825.53 471.69v5M840.10 474.19h5M842.60 471.69v5M857.17 474.19h5M859.67 471.69v5M874.24 474.19h5M876.74 471.69v5M891.31 474.19h5M893.81 471.69v5M908.38 474.19h5M910.88 471.69v5M925.45 474.19h5M927.95 471.69v5M942.52 474.19h5M945.02 471.69v5M959.59 474.19h5M962.09 471.69v5M976.66 474.19h5M979.16 471.69v5M993.73 474.19h5M996.23 471.69v5M1010.80 474.19h5M1013.30 471.69v5M1027.87 474.19h5M1030.37 471.69v5M1044.94 474.19h5M1047.44 471.69v5M1062.01 474.19h5M1064.51 471.69v5M1079.08 474.19h5M1081.58 471.69v5M1096.15 474.19h5M1098.65 471.69v5M1113.22 474.19h5M1115.72 471.69v5M1130.29 474.19h5M1132.79 471.69v5M1147.36 474.19h5M1149.86 471.69v5M1164.43 474.19h5M1166.93 471.69v5M1181.50 474.19h5M1184.00 471.69v5M1198.57 474.19h5M1201.07 471.69v5M1215.64 474.19h5M1218.14 471.69v5M1232.71 474.19h5M1235.21 471.69v5M1249.78 474.19h5M1252.28 471.69v5M1266.85 474.19h5M1269.35 471.69v5M1283.92 474.19h5M1286.42 471.69v5M1300.99 474.19h5M1303.49 471.69v5M1318.06 474.19h5M1320.56 471.69v5M1335.13 474.19h5M1337.63 471.69v5M1352.20 474.19h5M1354.70 471.69v5M1369.27 474.19h5M1371.77 471.69v5M1386.34 474.19h5M1388.84 471.69v5M1403.41 474.19h5M1405.91 471.69v5M1420.48 474.19h5M1422.98 471.69v5M1437.55 474.19h5M1440.05 471.69v5M1454.62 474.19h5M1457.12 471.69v5M1471.69 474.19h5M1474.19 471.69v5M1488.76 474.19h5M1491.26 471.69v5M1505.83 474.19h5M1508.33 471.69v5M1522.90 474.19h5M1525.40 471.69v5M1539.97 474.19h5M1542.47 471.69v5M1557.04 474.19h5M1559.54 471.69v5M1574.11 474.19h5M1576.61 471.69v5M1591.18 474.19h5M1593.68 471.69v5M1608.25 474.19h5M1610.75 471.69v5M1625.32 474.19h5M1627.82 471.69v5M1642.39 474.19h5M1644.89 471.69v5M1659.46 474.19h5M1661.96 471.69v5M1676.53 474.19h5M1679.03 471.69v5M1693.60 474.19h5M1696.10 471.69v5M1710.67 474.19h5M1713.17 471.69v5M1727.74 474.19h5M1730.24 471.69v5M1744.81 474.19h5M1747.31 471.69v5M1761.88 474.19h5M1764.38 471.69v5M1778.95 474.19h5M1781.45 471.69v5M1796.02 474.19h5M1798.52 471.69v5M1813.09 474.19h5M1815.59 471.69v5M1830.16 474.19h5M1832.66 471.69v5M1847.23 474.19h5M1849.73 471.69v5M1864.30 474.19h5M1866.80 471.69v5M1881.37 474.19h5M1883.87 471.69v5M1898.44 474.19h5M1900.94 471.69v5M1915.51 474.19h5M1918.01 471.69v5M379.21 491.28h5M381.71 488.78v5M396.28 491.28h5M398.78 488.78v5M413.35 491.28h5M415.85 488.78v5M430.42 491.28h5M432.92 488.78v5M447.49 491.28h5M449.99 488.78v5M464.56 491.28h5M467.06 488.78v5M481.63 491.28h5M484.13 488.78v5M498.70 491.28h5M501.20 488.78v5M515.77 491.28h5M518.27 488.78v5M532.84 491.28h5M535.34 488.78v5M549.91 491.28h5M552.41 488.78v5M566.98 491.28h5M569.48 488.78v5M584.05 491.28h5M586.55 488.78v5M601.12 491.28h5M603.62 488.78v5M618.19 491.28h5M620.69 488.78v5M635.26 491.28h5M637.76 488.78v5M652.33 491.28h5M654.83 488.78v5M669.40 491.28h5M671.90 488.78v5M686.47 491.28h5M688.97 488.78v5M703.54 491.28h5M706.04 488.78v5M720.61 491.28h5M723.11 488.78v5M737.68 491.28h5M740.18 488.78v5M754.75 491.28h5M757.25 488.78v5M771.82 491.28h5M774.32 488.78v5M788.89 491.28h5M791.39 488.78v5M805.96 491.28h5M808.46 488.78v5M823.03 491.28h5M825.53 488.78v5M840.10 491.28h5M842.60 488.78v5M857.17 491.28h5M859.67 488.78v5M874.24 491.28h5M876.74 488.78v5M891.31 491.28h5M893.81 488.78v5M908.38 491.28h5M910.88 488.78v5M925.45 491.28h5M927.95 488.78v5M942.52 491.28h5M945.02 488.78v5M959.59 491.28h5M962.09 488.78v5M976.66 491.28h5M979.16 488.78v5M993.73 491.28h5M996.23 488.78v5M1010.80 491.28h5M1013.30 488.78v5M1027.87 491.28h5M1030.37 488.78v5M1044.94 491.28h5M1047.44 488.78v5M1062.01 491.28h5M1064.51 488.78v5M1079.08 491.28h5M1081.58 488.78v5M1096.15 491.28h5M1098.65 488.78v5M1113.22 491.28h5M1115.72 488.78v5M1130.29 491.28h5M1132.79 488.78v5M1147.36 491.28h5M1149.86 488.78v5M1164.43 491.28h5M1166.93 488.78v5M1181.50 491.28h5M1184.00 488.78v5M1198.57 491.28h5M1201.07 488.78v5M1215.64 491.28h5M1218.14 488.78v5M1232.71 491.28h5M1235.21 488.78v5M1249.78 491.28h5M1252.28 488.78v5M1266.85 491.28h5M1269.35 488.78v5M1283.92 491.28h5M1286.42 488.78v5M1300.99 491.28h5M1303.49 488.78v5M1318.06 491.28h5M1320.56 488.78v5M1335.13 491.28h5M1337.63 488.78v5M1352.20 491.28h5M1354.70 488.78v5M1369.27 491.28h5M1371.77 488.78v5M1386.34 491.28h5M1388.84 488.78v5M1403.41 491.28h5M1405.91 488.78v5M1420.48 491.28h5M1422.98 488.78v5M1437.55 491.28h5M1440.05 488.78v5M1454.62 491.28h5M1457.12 488.78v5M1471.69 491.28h5M1474.19 488.78v5M1488.76 491.28h5M1491.26 488.78v5M1505.83 491.28h5M1508.33 488.78v5M1522.90 491.28h5M1525.40 488.78v5M1539.97 491.28h5M1542.47 488.78v5M1557.04 491.28h5M1559.54 488.78v5M1574.11 491.28h5M1576.61 488.78v5M1591.18 491.28h5M1593.68 488.78v5M1608.25 491.28h5M1610.75 488.78v5M1625.32 491.28h5M1627.82 488.78v5M1642.39 491.28h5M1644.89 488.78v5M1659.46 491.28h5M1661.96 488.78v5M1676.53 491.28h5M1679.03 488.78v5M1693.60 491.28h5M1696.10 488.78v5M1710.67 491.28h5M1713.17 488.78v5M1727.74 491.28h5M1730.24 488.78v5M1744.81 491.28h5M1747.31 488.78v5M1761.88 491.28h5M1764.38 488.78v5M1778.95 491.28h5M1781.45 488.78v5M1796.02 491.28h5M1798.52 488.78v5M1813.09 491.28h5M1815.59 488.78v5M1830.16 491.28h5M1832.66 488.78v5M1847.23 491.28h5M1849.73 488.78v5M1864.30 491.28h5M1866.80 488.78v5M1881.37 491.28h5M1883.87 488.78v5M1898.44 491.28h5M1900.94 488.78v5M1915.51 491.28h5M1918.01 488.78v5M379.21 508.37h5M381.71 505.87v5M396.28 508.37h5M398.78 505.87v5M413.35 508.37h5M415.85 505.87v5M430.42 508.37h5M432.92 505.87v5M447.49 508.37h5M449.99 505.87v5M464.56 508.37h5M467.06 505.87v5M481.63 508.37h5M484.13 505.87v5M498.70 508.37h5M501.20 505.87v5M515.77 508.37h5M518.27 505.87v5M532.84 508.37h5M535.34 505.87v5M549.91 508.37h5M552.41 505.87v5M566.98 508.37h5M569.48 505.87v5M584.05 508.37h5M586.55 505.87v5M601.12 508.37h5M603.62 505.87v5M618.19 508.37h5M620.69 505.87v5M635.26 508.37h5M637.76 505.87v5M652.33 508.37h5M654.83 505.87v5M669.40 508.37h5M671.90 505.87v5M686.47 508.37h5M688.97 505.87v5M703.54 508.37h5M706.04 505.87v5M720.61 508.37h5M723.11 505.87v5M737.68 508.37h5M740.18 505.87v5M754.75 508.37h5M757.25 505.87v5M771.82 508.37h5M774.32 505.87v5M788.89 508.37h5M791.39 505.87v5M805.96 508.37h5M808.46 505.87v5M823.03 508.37h5M825.53 505.87v5M840.10 508.37h5M842.60 505.87v5M857.17 508.37h5M859.67 505.87v5M874.24 508.37h5M876.74 505.87v5M891.31 508.37h5M893.81 505.87v5M908.38 508.37h5M910.88 505.87v5M925.45 508.37h5M927.95 505.87v5M942.52 508.37h5M945.02 505.87v5M959.59 508.37h5M962.09 505.87v5M976.66 508.37h5M979.16 505.87v5M993.73 508.37h5M996.23 505.87v5M1010.80 508.37h5M1013.30 505.87v5M1027.87 508.37h5M1030.37 505.87v5M1044.94 508.37h5M1047.44 505.87v5M1062.01 508.37h5M1064.51 505.87v5M1079.08 508.37h5M1081.58 505.87v5M1096.15 508.37h5M1098.65 505.87v5M1113.22 508.37h5M1115.72 505.87v5M1130.29 508.37h5M1132.79 505.87v5M1147.36 508.37h5M1149.86 505.87v5M1164.43 508.37h5M1166.93 505.87v5M1181.50 508.37h5M1184.00 505.87v5M1198.57 508.37h5M1201.07 505.87v5M1215.64 508.37h5M1218.14 505.87v5M1232.71 508.37h5M1235.21 505.87v5M1249.78 508.37h5M1252.28 505.87v5M1266.85 508.37h5M1269.35 505.87v5M1283.92 508.37h5M1286.42 505.87v5M1300.99 508.37h5M1303.49 505.87v5M1318.06 508.37h5M1320.56 505.87v5M1335.13 508.37h5M1337.63 505.87v5M1352.20 508.37h5M1354.70 505.87v5M1369.27 508.37h5M1371.77 505.87v5M1386.34 508.37h5M1388.84 505.87v5M1403.41 508.37h5M1405.91 505.87v5M1420.48 508.37h5M1422.98 505.87v5M1437.55 508.37h5M1440.05 505.87v5M1454.62 508.37h5M1457.12 505.87v5M1471.69 508.37h5M1474.19 505.87v5M1488.76 508.37h5M1491.26 505.87v5M1505.83 508.37h5M1508.33 505.87v5M1522.90 508.37h5M1525.40 505.87v5M1539.97 508.37h5M1542.47 505.87v5M1557.04 508.37h5M1559.54 505.87v5M1574.11 508.37h5M1576.61 505.87v5M1591.18 508.37h5M1593.68 505.87v5M1608.25 508.37h5M1610.75 505.87v5M1625.32 508.37h5M1627.82 505.87v5M1642.39 508.37h5M1644.89 505.87v5M1659.46 508.37h5M1661.96 505.87v5M1676.53 508.37h5M1679.03 505.87v5M1693.60 508.37h5M1696.10 505.87v5M1710.67 508.37h5M1713.17 505.87v5M1727.74 508.37h5M1730.24 505.87v5M1744.81 508.37h5M1747.31 505.87v5M1761.88 508.37h5M1764.38 505.87v5M1778.95 508.37h5M1781.45 505.87v5M1796.02 508.37h5M1798.52 505.87v5M1813.09 508.37h5M1815.59 505.87v5M1830.16 508.37h5M1832.66 505.87v5M1847.23 508.37h5M1849.73 505.87v5M1864.30 508.37h5M1866.80 505.87v5M1881.37 508.37h5M1883.87 505.87v5M1898.44 508.37h5M1900.94 505.87v5M1915.51 508.37h5M1918.01 505.87v5M379.21 525.45h5M381.71 522.95v5M396.28 525.45h5M398.78 522.95v5M413.35 525.45h5M415.85 522.95v5M430.42 525.45h5M432.92 522.95v5M447.49 525.45h5M449.99 522.95v5M464.56 525.45h5M467.06 522.95v5M481.63 525.45h5M484.13 522.95v5M498.70 525.45h5M501.20 522.95v5M515.77 525.45h5M518.27 522.95v5M532.84 525.45h5M535.34 522.95v5M549.91 525.45h5M552.41 522.95v5M566.98 525.45h5M569.48 522.95v5M584.05 525.45h5M586.55 522.95v5M601.12 525.45h5M603.62 522.95v5M618.19 525.45h5M620.69 522.95v5M635.26 525.45h5M637.76 522.95v5M652.33 525.45h5M654.83 522.95v5M669.40 525.45h5M671.90 522.95v5M686.47 525.45h5M688.97 522.95v5M703.54 525.45h5M706.04 522.95v5M720.61 525.45h5M723.11 522.95v5M737.68 525.45h5M740.18 522.95v5M754.75 525.45h5M757.25 522.95v5M771.82 525.45h5M774.32 522.95v5M788.89 525.45h5M791.39 522.95v5M805.96 525.45h5M808.46 522.95v5M823.03 525.45h5M825.53 522.95v5M840.10 525.45h5M842.60 522.95v5M857.17 525.45h5M859.67 522.95v5M874.24 525.45h5M876.74 522.95v5M891.31 525.45h5M893.81 522.95v5M908.38 525.45h5M910.88 522.95v5M925.45 525.45h5M927.95 522.95v5M942.52 525.45h5M945.02 522.95v5M959.59 525.45h5M962.09 522.95v5M976.66 525.45h5M979.16 522.95v5M993.73 525.45h5M996.23 522.95v5M1010.80 525.45h5M1013.30 522.95v5M1027.87 525.45h5M1030.37 522.95v5M1044.94 525.45h5M1047.44 522.95v5M1062.01 525.45h5M1064.51 522.95v5M1079.08 525.45h5M1081.58 522.95v5M1096.15 525.45h5M1098.65 522.95v5M1113.22 525.45h5M1115.72 522.95v5M1130.29 525.45h5M1132.79 522.95v5M1147.36 525.45h5M1149.86 522.95v5M1164.43 525.45h5M1166.93 522.95v5M1181.50 525.45h5M1184.00 522.95v5M1198.57 525.45h5M1201.07 522.95v5M1215.64 525.45h5M1218.14 522.95v5M1232.71 525.45h5M1235.21 522.95v5M1249.78 525.45h5M1252.28 522.95v5M1266.85 525.45h5M1269.35 522.95v5M1283.92 525.45h5M1286.42 522.95v5M1300.99 525.45h5M1303.49 522.95v5M1318.06 525.45h5M1320.56 522.95v5M1335.13 525.45h5M1337.63 522.95v5M1352.20 525.45h5M1354.70 522.95v5M1369.27 525.45h5M1371.77 522.95v5M1386.34 525.45h5M1388.84 522.95v5M1403.41 525.45h5M1405.91 522.95v5M1420.48 525.45h5M1422.98 522.95v5M1437.55 525.45h5M1440.05 522.95v5M1454.62 525.45h5M1457.12 522.95v5M1471.69 525.45h5M1474.19 522.95v5M1488.76 525.45h5M1491.26 522.95v5M1505.83 525.45h5M1508.33 522.95v5M1522.90 525.45h5M1525.40 522.95v5M1539.97 525.45h5M1542.47 522.95v5M1557.04 525.45h5M1559.54 522.95v5M1574.11 525.45h5M1576.61 522.95v5M1591.18 525.45h5M1593.68 522.95v5M1608.25 525.45h5M1610.75 522.95v5M1625.32 525.45h5M1627.82 522.95v5M1642.39 525.45h5M1644.89 522.95v5M1659.46 525.45h5M1661.96 522.95v5M1676.53 525.45h5M1679.03 522.95v5M1693.60 525.45h5M1696.10 522.95v5M1710.67 525.45h5M1713.17 522.95v5M1727.74 525.45h5M1730.24 522.95v5M1744.81 525.45h5M1747.31 522.95v5M1761.88 525.45h5M1764.38 522.95v5M1778.95 525.45h5M1781.45 522.95v5M1796.02 525.45h5M1798.52 522.95v5M1813.09 525.45h5M1815.59 522.95v5M1830.16 525.45h5M1832.66 522.95v5M1847.23 525.45h5M1849.73 522.95v5M1864.30 525.45h5M1866.80 522.95v5M1881.37 525.45h5M1883.87 522.95v5M1898.44 525.45h5M1900.94 522.95v5M1915.51 525.45h5M1918.01 522.95v5M379.21 542.53h5M381.71 540.03v5M396.28 542.53h5M398.78 540.03v5M413.35 542.53h5M415.85 540.03v5M430.42 542.53h5M432.92 540.03v5M447.49 542.53h5M449.99 540.03v5M464.56 542.53h5M467.06 540.03v5M481.63 542.53h5M484.13 540.03v5M498.70 542.53h5M501.20 540.03v5M515.77 542.53h5M518.27 540.03v5M532.84 542.53h5M535.34 540.03v5M549.91 542.53h5M552.41 540.03v5M566.98 542.53h5M569.48 540.03v5M584.05 542.53h5M586.55 540.03v5M601.12 542.53h5M603.62 540.03v5M618.19 542.53h5M620.69 540.03v5M635.26 542.53h5M637.76 540.03v5M652.33 542.53h5M654.83 540.03v5M669.40 542.53h5M671.90 540.03v5M686.47 542.53h5M688.97 540.03v5M703.54 542.53h5M706.04 540.03v5M720.61 542.53h5M723.11 540.03v5M737.68 542.53h5M740.18 540.03v5M754.75 542.53h5M757.25 540.03v5M771.82 542.53h5M774.32 540.03v5M788.89 542.53h5M791.39 540.03v5M805.96 542.53h5M808.46 540.03v5M823.03 542.53h5M825.53 540.03v5M840.10 542.53h5M842.60 540.03v5M857.17 542.53h5M859.67 540.03v5M874.24 542.53h5M876.74 540.03v5M891.31 542.53h5M893.81 540.03v5M908.38 542.53h5M910.88 540.03v5M925.45 542.53h5M927.95 540.03v5M942.52 542.53h5M945.02 540.03v5M959.59 542.53h5M962.09 540.03v5M976.66 542.53h5M979.16 540.03v5M993.73 542.53h5M996.23 540.03v5M1010.80 542.53h5M1013.30 540.03v5M1027.87 542.53h5M1030.37 540.03v5M1044.94 542.53h5M1047.44 540.03v5M1062.01 542.53h5M1064.51 540.03v5M1079.08 542.53h5M1081.58 540.03v5M1096.15 542.53h5M1098.65 540.03v5M1113.22 542.53h5M1115.72 540.03v5M1130.29 542.53h5M1132.79 540.03v5M1147.36 542.53h5M1149.86 540.03v5M1164.43 542.53h5M1166.93 540.03v5M1181.50 542.53h5M1184.00 540.03v5M1198.57 542.53h5M1201.07 540.03v5M1215.64 542.53h5M1218.14 540.03v5M1232.71 542.53h5M1235.21 540.03v5M1249.78 542.53h5M1252.28 540.03v5M1266.85 542.53h5M1269.35 540.03v5M1283.92 542.53h5M1286.42 540.03v5M1300.99 542.53h5M1303.49 540.03v5M1318.06 542.53h5M1320.56 540.03v5M1335.13 542.53h5M1337.63 540.03v5M1352.20 542.53h5M1354.70 540.03v5M1369.27 542.53h5M1371.77 540.03v5M1386.34 542.53h5M1388.84 540.03v5M1403.41 542.53h5M1405.91 540.03v5M1420.48 542.53h5M1422.98 540.03v5M1437.55 542.53h5M1440.05 540.03v5M1454.62 542.53h5M1457.12 540.03v5M1471.69 542.53h5M1474.19 540.03v5M1488.76 542.53h5M1491.26 540.03v5M1505.83 542.53h5M1508.33 540.03v5M1522.90 542.53h5M1525.40 540.03v5M1539.97 542.53h5M1542.47 540.03v5M1557.04 542.53h5M1559.54 540.03v5M1574.11 542.53h5M1576.61 540.03v5M1591.18 542.53h5M1593.68 540.03v5M1608.25 542.53h5M1610.75 540.03v5M1625.32 542.53h5M1627.82 540.03v5M1642.39 542.53h5M1644.89 540.03v5M1659.46 542.53h5M1661.96 540.03v5M1676.53 542.53h5M1679.03 540.03v5M1693.60 542.53h5M1696.10 540.03v5M1710.67 542.53h5M1713.17 540.03v5M1727.74 542.53h5M1730.24 540.03v5M1744.81 542.53h5M1747.31 540.03v5M1761.88 542.53h5M1764.38 540.03v5M1778.95 542.53h5M1781.45 540.03v5M1796.02 542.53h5M1798.52 540.03v5M1813.09 542.53h5M1815.59 540.03v5M1830.16 542.53h5M1832.66 540.03v5M1847.23 542.53h5M1849.73 540.03v5M1864.30 542.53h5M1866.80 540.03v5M1881.37 542.53h5M1883.87 540.03v5M1898.44 542.53h5M1900.94 540.03v5M1915.51 542.53h5M1918.01 540.03v5M379.21 559.62h5M381.71 557.12v5M396.28 559.62h5M398.78 557.12v5M413.35 559.62h5M415.85 557.12v5M430.42 559.62h5M432.92 557.12v5M447.49 559.62h5M449.99 557.12v5M464.56 559.62h5M467.06 557.12v5M481.63 559.62h5M484.13 557.12v5M498.70 559.62h5M501.20 557.12v5M515.77 559.62h5M518.27 557.12v5M532.84 559.62h5M535.34 557.12v5M549.91 559.62h5M552.41 557.12v5M566.98 559.62h5M569.48 557.12v5M584.05 559.62h5M586.55 557.12v5M601.12 559.62h5M603.62 557.12v5M618.19 559.62h5M620.69 557.12v5M635.26 559.62h5M637.76 557.12v5M652.33 559.62h5M654.83 557.12v5M669.40 559.62h5M671.90 557.12v5M686.47 559.62h5M688.97 557.12v5M703.54 559.62h5M706.04 557.12v5M720.61 559.62h5M723.11 557.12v5M737.68 559.62h5M740.18 557.12v5M754.75 559.62h5M757.25 557.12v5M771.82 559.62h5M774.32 557.12v5M788.89 559.62h5M791.39 557.12v5M805.96 559.62h5M808.46 557.12v5M823.03 559.62h5M825.53 557.12v5M840.10 559.62h5M842.60 557.12v5M857.17 559.62h5M859.67 557.12v5M874.24 559.62h5M876.74 557.12v5M891.31 559.62h5M893.81 557.12v5M908.38 559.62h5M910.88 557.12v5M925.45 559.62h5M927.95 557.12v5M942.52 559.62h5M945.02 557.12v5M959.59 559.62h5M962.09 557.12v5M976.66 559.62h5M979.16 557.12v5M993.73 559.62h5M996.23 557.12v5M1010.80 559.62h5M1013.30 557.12v5M1027.87 559.62h5M1030.37 557.12v5M1044.94 559.62h5M1047.44 557.12v5M1062.01 559.62h5M1064.51 557.12v5M1079.08 559.62h5M1081.58 557.12v5M1096.15 559.62h5M1098.65 557.12v5M1113.22 559.62h5M1115.72 557.12v5M1130.29 559.62h5M1132.79 557.12v5M1147.36 559.62h5M1149.86 557.12v5M1164.43 559.62h5M1166.93 557.12v5M1181.50 559.62h5M1184.00 557.12v5M1198.57 559.62h5M1201.07 557.12v5M1215.64 559.62h5M1218.14 557.12v5M1232.71 559.62h5M1235.21 557.12v5M1249.78 559.62h5M1252.28 557.12v5M1266.85 559.62h5M1269.35 557.12v5M1283.92 559.62h5M1286.42 557.12v5M1300.99 559.62h5M1303.49 557.12v5M1318.06 559.62h5M1320.56 557.12v5M1335.13 559.62h5M1337.63 557.12v5M1352.20 559.62h5M1354.70 557.12v5M1369.27 559.62h5M1371.77 557.12v5M1386.34 559.62h5M1388.84 557.12v5M1403.41 559.62h5M1405.91 557.12v5M1420.48 559.62h5M1422.98 557.12v5M1437.55 559.62h5M1440.05 557.12v5M1454.62 559.62h5M1457.12 557.12v5M1471.69 559.62h5M1474.19 557.12v5M1488.76 559.62h5M1491.26 557.12v5M1505.83 559.62h5M1508.33 557.12v5M1522.90 559.62h5M1525.40 557.12v5M1539.97 559.62h5M1542.47 557.12v5M1557.04 559.62h5M1559.54 557.12v5M1574.11 559.62h5M1576.61 557.12v5M1591.18 559.62h5M1593.68 557.12v5M1608.25 559.62h5M1610.75 557.12v5M1625.32 559.62h5M1627.82 557.12v5M1642.39 559.62h5M1644.89 557.12v5M1659.46 559.62h5M1661.96 557.12v5M1676.53 559.62h5M1679.03 557.12v5M1693.60 559.62h5M1696.10 557.12v5M1710.67 559.62h5M1713.17 557.12v5M1727.74 559.62h5M1730.24 557.12v5M1744.81 559.62h5M1747.31 557.12v5M1761.88 559.62h5M1764.38 557.12v5M1778.95 559.62h5M1781.45 557.12v5M1796.02 559.62h5M1798.52 557.12v5M1813.09 559.62h5M1815.59 557.12v5M1830.16 559.62h5M1832.66 557.12v5M1847.23 559.62h5M1849.73 557.12v5M1864.30 559.62h5M1866.80 557.12v5M1881.37 559.62h5M1883.87 557.12v5M1898.44 559.62h5M1900.94 557.12v5M1915.51 559.62h5M1918.01 557.12v5M379.21 576.71h5M381.71 574.21v5M396.28 576.71h5M398.78 574.21v5M413.35 576.71h5M415.85 574.21v5M430.42 576.71h5M432.92 574.21v5M447.49 576.71h5M449.99 574.21v5M464.56 576.71h5M467.06 574.21v5M481.63 576.71h5M484.13 574.21v5M498.70 576.71h5M501.20 574.21v5M515.77 576.71h5M518.27 574.21v5M532.84 576.71h5M535.34 574.21v5M549.91 576.71h5M552.41 574.21v5M566.98 576.71h5M569.48 574.21v5M584.05 576.71h5M586.55 574.21v5M601.12 576.71h5M603.62 574.21v5M618.19 576.71h5M620.69 574.21v5M635.26 576.71h5M637.76 574.21v5M652.33 576.71h5M654.83 574.21v5M669.40 576.71h5M671.90 574.21v5M686.47 576.71h5M688.97 574.21v5M703.54 576.71h5M706.04 574.21v5M720.61 576.71h5M723.11 574.21v5M737.68 576.71h5M740.18 574.21v5M754.75 576.71h5M757.25 574.21v5M771.82 576.71h5M774.32 574.21v5M788.89 576.71h5M791.39 574.21v5M805.96 576.71h5M808.46 574.21v5M823.03 576.71h5M825.53 574.21v5M840.10 576.71h5M842.60 574.21v5M857.17 576.71h5M859.67 574.21v5M874.24 576.71h5M876.74 574.21v5M891.31 576.71h5M893.81 574.21v5M908.38 576.71h5M910.88 574.21v5M925.45 576.71h5M927.95 574.21v5M942.52 576.71h5M945.02 574.21v5M959.59 576.71h5M962.09 574.21v5M976.66 576.71h5M979.16 574.21v5M993.73 576.71h5M996.23 574.21v5M1010.80 576.71h5M1013.30 574.21v5M1027.87 576.71h5M1030.37 574.21v5M1044.94 576.71h5M1047.44 574.21v5M1062.01 576.71h5M1064.51 574.21v5M1079.08 576.71h5M1081.58 574.21v5M1096.15 576.71h5M1098.65 574.21v5M1113.22 576.71h5M1115.72 574.21v5M1130.29 576.71h5M1132.79 574.21v5M1147.36 576.71h5M1149.86 574.21v5M1164.43 576.71h5M1166.93 574.21v5M1181.50 576.71h5M1184.00 574.21v5M1198.57 576.71h5M1201.07 574.21v5M1215.64 576.71h5M1218.14 574.21v5M1232.71 576.71h5M1235.21 574.21v5M1249.78 576.71h5M1252.28 574.21v5M1266.85 576.71h5M1269.35 574.21v5M1283.92 576.71h5M1286.42 574.21v5M1300.99 576.71h5M1303.49 574.21v5M1318.06 576.71h5M1320.56 574.21v5M1335.13 576.71h5M1337.63 574.21v5M1352.20 576.71h5M1354.70 574.21v5M1369.27 576.71h5M1371.77 574.21v5M1386.34 576.71h5M1388.84 574.21v5M1403.41 576.71h5M1405.91 574.21v5M1420.48 576.71h5M1422.98 574.21v5M1437.55 576.71h5M1440.05 574.21v5M1454.62 576.71h5M1457.12 574.21v5M1471.69 576.71h5M1474.19 574.21v5M1488.76 576.71h5M1491.26 574.21v5M1505.83 576.71h5M1508.33 574.21v5M1522.90 576.71h5M1525.40 574.21v5M1539.97 576.71h5M1542.47 574.21v5M1557.04 576.71h5M1559.54 574.21v5M1574.11 576.71h5M1576.61 574.21v5M1591.18 576.71h5M1593.68 574.21v5M1608.25 576.71h5M1610.75 574.21v5M1625.32 576.71h5M1627.82 574.21v5M1642.39 576.71h5M1644.89 574.21v5M1659.46 576.71h5M1661.96 574.21v5M1676.53 576.71h5M1679.03 574.21v5M1693.60 576.71h5M1696.10 574.21v5M1710.67 576.71h5M1713.17 574.21v5M1727.74 576.71h5M1730.24 574.21v5M1744.81 576.71h5M1747.31 574.21v5M1761.88 576.71h5M1764.38 574.21v5M1778.95 576.71h5M1781.45 574.21v5M1796.02 576.71h5M1798.52 574.21v5M1813.09 576.71h5M1815.59 574.21v5M1830.16 576.71h5M1832.66 574.21v5M1847.23 576.71h5M1849.73 574.21v5M1864.30 576.71h5M1866.80 574.21v5M1881.37 576.71h5M1883.87 574.21v5M1898.44 576.71h5M1900.94 574.21v5M1915.51 576.71h5M1918.01 574.21v5M379.21 593.79h5M381.71 591.29v5M396.28 593.79h5M398.78 591.29v5M413.35 593.79h5M415.85 591.29v5M430.42 593.79h5M432.92 591.29v5M447.49 593.79h5M449.99 591.29v5M464.56 593.79h5M467.06 591.29v5M481.63 593.79h5M484.13 591.29v5M498.70 593.79h5M501.20 591.29v5M515.77 593.79h5M518.27 591.29v5M532.84 593.79h5M535.34 591.29v5M549.91 593.79h5M552.41 591.29v5M566.98 593.79h5M569.48 591.29v5M584.05 593.79h5M586.55 591.29v5M601.12 593.79h5M603.62 591.29v5M618.19 593.79h5M620.69 591.29v5M635.26 593.79h5M637.76 591.29v5M652.33 593.79h5M654.83 591.29v5M669.40 593.79h5M671.90 591.29v5M686.47 593.79h5M688.97 591.29v5M703.54 593.79h5M706.04 591.29v5M720.61 593.79h5M723.11 591.29v5M737.68 593.79h5M740.18 591.29v5M754.75 593.79h5M757.25 591.29v5M771.82 593.79h5M774.32 591.29v5M788.89 593.79h5M791.39 591.29v5M805.96 593.79h5M808.46 591.29v5M823.03 593.79h5M825.53 591.29v5M840.10 593.79h5M842.60 591.29v5M857.17 593.79h5M859.67 591.29v5M874.24 593.79h5M876.74 591.29v5M891.31 593.79h5M893.81 591.29v5M908.38 593.79h5M910.88 591.29v5M925.45 593.79h5M927.95 591.29v5M942.52 593.79h5M945.02 591.29v5M959.59 593.79h5M962.09 591.29v5M976.66 593.79h5M979.16 591.29v5M993.73 593.79h5M996.23 591.29v5M1010.80 593.79h5M1013.30 591.29v5M1027.87 593.79h5M1030.37 591.29v5M1044.94 593.79h5M1047.44 591.29v5M1062.01 593.79h5M1064.51 591.29v5M1079.08 593.79h5M1081.58 591.29v5M1096.15 593.79h5M1098.65 591.29v5M1113.22 593.79h5M1115.72 591.29v5M1130.29 593.79h5M1132.79 591.29v5M1147.36 593.79h5M1149.86 591.29v5M1164.43 593.79h5M1166.93 591.29v5M1181.50 593.79h5M1184.00 591.29v5M1198.57 593.79h5M1201.07 591.29v5M1215.64 593.79h5M1218.14 591.29v5M1232.71 593.79h5M1235.21 591.29v5M1249.78 593.79h5M1252.28 591.29v5M1266.85 593.79h5M1269.35 591.29v5M1283.92 593.79h5M1286.42 591.29v5M1300.99 593.79h5M1303.49 591.29v5M1318.06 593.79h5M1320.56 591.29v5M1335.13 593.79h5M1337.63 591.29v5M1352.20 593.79h5M1354.70 591.29v5M1369.27 593.79h5M1371.77 591.29v5M1386.34 593.79h5M1388.84 591.29v5M1403.41 593.79h5M1405.91 591.29v5M1420.48 593.79h5M1422.98 591.29v5M1437.55 593.79h5M1440.05 591.29v5M1454.62 593.79h5M1457.12 591.29v5M1471.69 593.79h5M1474.19 591.29v5M1488.76 593.79h5M1491.26 591.29v5M1505.83 593.79h5M1508.33 591.29v5M1522.90 593.79h5M1525.40 591.29v5M1539.97 593.79h5M1542.47 591.29v5M1557.04 593.79h5M1559.54 591.29v5M1574.11 593.79h5M1576.61 591.29v5M1591.18 593.79h5M1593.68 591.29v5M1608.25 593.79h5M1610.75 591.29v5M1625.32 593.79h5M1627.82 591.29v5M1642.39 593.79h5M1644.89 591.29v5M1659.46 593.79h5M1661.96 591.29v5M1676.53 593.79h5M1679.03 591.29v5M1693.60 593.79h5M1696.10 591.29v5M1710.67 593.79h5M1713.17 591.29v5M1727.74 593.79h5M1730.24 591.29v5M1744.81 593.79h5M1747.31 591.29v5M1761.88 593.79h5M1764.38 591.29v5M1778.95 593.79h5M1781.45 591.29v5M1796.02 593.79h5M1798.52 591.29v5M1813.09 593.79h5M1815.59 591.29v5M1830.16 593.79h5M1832.66 591.29v5M1847.23 593.79h5M1849.73 591.29v5M1864.30 593.79h5M1866.80 591.29v5M1881.37 593.79h5M1883.87 591.29v5M1898.44 593.79h5M1900.94 591.29v5M1915.51 593.79h5M1918.01 591.29v5M379.21 610.88h5M381.71 608.38v5M396.28 610.88h5M398.78 608.38v5M413.35 610.88h5M415.85 608.38v5M430.42 610.88h5M432.92 608.38v5M447.49 610.88h5M449.99 608.38v5M464.56 610.88h5M467.06 608.38v5M481.63 610.88h5M484.13 608.38v5M498.70 610.88h5M501.20 608.38v5M515.77 610.88h5M518.27 608.38v5M532.84 610.88h5M535.34 608.38v5M549.91 610.88h5M552.41 608.38v5M566.98 610.88h5M569.48 608.38v5M584.05 610.88h5M586.55 608.38v5M601.12 610.88h5M603.62 608.38v5M618.19 610.88h5M620.69 608.38v5M635.26 610.88h5M637.76 608.38v5M652.33 610.88h5M654.83 608.38v5M669.40 610.88h5M671.90 608.38v5M686.47 610.88h5M688.97 608.38v5M703.54 610.88h5M706.04 608.38v5M720.61 610.88h5M723.11 608.38v5M737.68 610.88h5M740.18 608.38v5M754.75 610.88h5M757.25 608.38v5M771.82 610.88h5M774.32 608.38v5M788.89 610.88h5M791.39 608.38v5M805.96 610.88h5M808.46 608.38v5M823.03 610.88h5M825.53 608.38v5M840.10 610.88h5M842.60 608.38v5M857.17 610.88h5M859.67 608.38v5M874.24 610.88h5M876.74 608.38v5M891.31 610.88h5M893.81 608.38v5M908.38 610.88h5M910.88 608.38v5M925.45 610.88h5M927.95 608.38v5M942.52 610.88h5M945.02 608.38v5M959.59 610.88h5M962.09 608.38v5M976.66 610.88h5M979.16 608.38v5M993.73 610.88h5M996.23 608.38v5M1010.80 610.88h5M1013.30 608.38v5M1027.87 610.88h5M1030.37 608.38v5M1044.94 610.88h5M1047.44 608.38v5M1062.01 610.88h5M1064.51 608.38v5M1079.08 610.88h5M1081.58 608.38v5M1096.15 610.88h5M1098.65 608.38v5M1113.22 610.88h5M1115.72 608.38v5M1130.29 610.88h5M1132.79 608.38v5M1147.36 610.88h5M1149.86 608.38v5M1164.43 610.88h5M1166.93 608.38v5M1181.50 610.88h5M1184.00 608.38v5M1198.57 610.88h5M1201.07 608.38v5M1215.64 610.88h5M1218.14 608.38v5M1232.71 610.88h5M1235.21 608.38v5M1249.78 610.88h5M1252.28 608.38v5M1266.85 610.88h5M1269.35 608.38v5M1283.92 610.88h5M1286.42 608.38v5M1300.99 610.88h5M1303.49 608.38v5M1318.06 610.88h5M1320.56 608.38v5M1335.13 610.88h5M1337.63 608.38v5M1352.20 610.88h5M1354.70 608.38v5M1369.27 610.88h5M1371.77 608.38v5M1386.34 610.88h5M1388.84 608.38v5M1403.41 610.88h5M1405.91 608.38v5M1420.48 610.88h5M1422.98 608.38v5M1437.55 610.88h5M1440.05 608.38v5M1454.62 610.88h5M1457.12 608.38v5M1471.69 610.88h5M1474.19 608.38v5M1488.76 610.88h5M1491.26 608.38v5M1505.83 610.88h5M1508.33 608.38v5M1522.90 610.88h5M1525.40 608.38v5M1539.97 610.88h5M1542.47 608.38v5M1557.04 610.88h5M1559.54 608.38v5M1574.11 610.88h5M1576.61 608.38v5M1591.18 610.88h5M1593.68 608.38v5M1608.25 610.88h5M1610.75 608.38v5M1625.32 610.88h5M1627.82 608.38v5M1642.39 610.88h5M1644.89 608.38v5M1659.46 610.88h5M1661.96 608.38v5M1676.53 610.88h5M1679.03 608.38v5M1693.60 610.88h5M1696.10 608.38v5M1710.67 610.88h5M1713.17 608.38v5M1727.74 610.88h5M1730.24 608.38v5M1744.81 610.88h5M1747.31 608.38v5M1761.88 610.88h5M1764.38 608.38v5M1778.95 610.88h5M1781.45 608.38v5M1796.02 610.88h5M1798.52 608.38v5M1813.09 610.88h5M1815.59 608.38v5M1830.16 610.88h5M1832.66 608.38v5M1847.23 610.88h5M1849.73 608.38v5M1864.30 610.88h5M1866.80 608.38v5M1881.37 610.88h5M1883.87 608.38v5M1898.44 610.88h5M1900.94 608.38v5M1915.51 610.88h5M1918.01 608.38v5M379.21 627.96h5M381.71 625.46v5M396.28 627.96h5M398.78 625.46v5M413.35 627.96h5M415.85 625.46v5M430.42 627.96h5M432.92 625.46v5M447.49 627.96h5M449.99 625.46v5M464.56 627.96h5M467.06 625.46v5M481.63 627.96h5M484.13 625.46v5M498.70 627.96h5M501.20 625.46v5M515.77 627.96h5M518.27 625.46v5M532.84 627.96h5M535.34 625.46v5M549.91 627.96h5M552.41 625.46v5M566.98 627.96h5M569.48 625.46v5M584.05 627.96h5M586.55 625.46v5M601.12 627.96h5M603.62 625.46v5M618.19 627.96h5M620.69 625.46v5M635.26 627.96h5M637.76 625.46v5M652.33 627.96h5M654.83 625.46v5M669.40 627.96h5M671.90 625.46v5M686.47 627.96h5M688.97 625.46v5M703.54 627.96h5M706.04 625.46v5M720.61 627.96h5M723.11 625.46v5M737.68 627.96h5M740.18 625.46v5M754.75 627.96h5M757.25 625.46v5M771.82 627.96h5M774.32 625.46v5M788.89 627.96h5M791.39 625.46v5M805.96 627.96h5M808.46 625.46v5M823.03 627.96h5M825.53 625.46v5M840.10 627.96h5M842.60 625.46v5M857.17 627.96h5M859.67 625.46v5M874.24 627.96h5M876.74 625.46v5M891.31 627.96h5M893.81 625.46v5M908.38 627.96h5M910.88 625.46v5M925.45 627.96h5M927.95 625.46v5M942.52 627.96h5M945.02 625.46v5M959.59 627.96h5M962.09 625.46v5M976.66 627.96h5M979.16 625.46v5M993.73 627.96h5M996.23 625.46v5M1010.80 627.96h5M1013.30 625.46v5M1027.87 627.96h5M1030.37 625.46v5M1044.94 627.96h5M1047.44 625.46v5M1062.01 627.96h5M1064.51 625.46v5M1079.08 627.96h5M1081.58 625.46v5M1096.15 627.96h5M1098.65 625.46v5M1113.22 627.96h5M1115.72 625.46v5M1130.29 627.96h5M1132.79 625.46v5M1147.36 627.96h5M1149.86 625.46v5M1164.43 627.96h5M1166.93 625.46v5M1181.50 627.96h5M1184.00 625.46v5M1198.57 627.96h5M1201.07 625.46v5M1215.64 627.96h5M1218.14 625.46v5M1232.71 627.96h5M1235.21 625.46v5M1249.78 627.96h5M1252.28 625.46v5M1266.85 627.96h5M1269.35 625.46v5M1283.92 627.96h5M1286.42 625.46v5M1300.99 627.96h5M1303.49 625.46v5M1318.06 627.96h5M1320.56 625.46v5M1335.13 627.96h5M1337.63 625.46v5M1352.20 627.96h5M1354.70 625.46v5M1369.27 627.96h5M1371.77 625.46v5M1386.34 627.96h5M1388.84 625.46v5M1403.41 627.96h5M1405.91 625.46v5M1420.48 627.96h5M1422.98 625.46v5M1437.55 627.96h5M1440.05 625.46v5M1454.62 627.96h5M1457.12 625.46v5M1471.69 627.96h5M1474.19 625.46v5M1488.76 627.96h5M1491.26 625.46v5M1505.83 627.96h5M1508.33 625.46v5M1522.90 627.96h5M1525.40 625.46v5M1539.97 627.96h5M1542.47 625.46v5M1557.04 627.96h5M1559.54 625.46v5M1574.11 627.96h5M1576.61 625.46v5M1591.18 627.96h5M1593.68 625.46v5M1608.25 627.96h5M1610.75 625.46v5M1625.32 627.96h5M1627.82 625.46v5M1642.39 627.96h5M1644.89 625.46v5M1659.46 627.96h5M1661.96 625.46v5M1676.53 627.96h5M1679.03 625.46v5M1693.60 627.96h5M1696.10 625.46v5M1710.67 627.96h5M1713.17 625.46v5M1727.74 627.96h5M1730.24 625.46v5M1744.81 627.96h5M1747.31 625.46v5M1761.88 627.96h5M1764.38 625.46v5M1778.95 627.96h5M1781.45 625.46v5M1796.02 627.96h5M1798.52 625.46v5M1813.09 627.96h5M1815.59 625.46v5M1830.16 627.96h5M1832.66 625.46v5M1847.23 627.96h5M1849.73 625.46v5M1864.30 627.96h5M1866.80 625.46v5M1881.37 627.96h5M1883.87 625.46v5M1898.44 627.96h5M1900.94 625.46v5M1915.51 627.96h5M1918.01 625.46v5M379.21 645.04h5M381.71 642.54v5M396.28 645.04h5M398.78 642.54v5M413.35 645.04h5M415.85 642.54v5M430.42 645.04h5M432.92 642.54v5M447.49 645.04h5M449.99 642.54v5M464.56 645.04h5M467.06 642.54v5M481.63 645.04h5M484.13 642.54v5M498.70 645.04h5M501.20 642.54v5M515.77 645.04h5M518.27 642.54v5M532.84 645.04h5M535.34 642.54v5M549.91 645.04h5M552.41 642.54v5M566.98 645.04h5M569.48 642.54v5M584.05 645.04h5M586.55 642.54v5M601.12 645.04h5M603.62 642.54v5M618.19 645.04h5M620.69 642.54v5M635.26 645.04h5M637.76 642.54v5M652.33 645.04h5M654.83 642.54v5M669.40 645.04h5M671.90 642.54v5M686.47 645.04h5M688.97 642.54v5M703.54 645.04h5M706.04 642.54v5M720.61 645.04h5M723.11 642.54v5M737.68 645.04h5M740.18 642.54v5M754.75 645.04h5M757.25 642.54v5M771.82 645.04h5M774.32 642.54v5M788.89 645.04h5M791.39 642.54v5M805.96 645.04h5M808.46 642.54v5M823.03 645.04h5M825.53 642.54v5M840.10 645.04h5M842.60 642.54v5M857.17 645.04h5M859.67 642.54v5M874.24 645.04h5M876.74 642.54v5M891.31 645.04h5M893.81 642.54v5M908.38 645.04h5M910.88 642.54v5M925.45 645.04h5M927.95 642.54v5M942.52 645.04h5M945.02 642.54v5M959.59 645.04h5M962.09 642.54v5M976.66 645.04h5M979.16 642.54v5M993.73 645.04h5M996.23 642.54v5M1010.80 645.04h5M1013.30 642.54v5M1027.87 645.04h5M1030.37 642.54v5M1044.94 645.04h5M1047.44 642.54v5M1062.01 645.04h5M1064.51 642.54v5M1079.08 645.04h5M1081.58 642.54v5M1096.15 645.04h5M1098.65 642.54v5M1113.22 645.04h5M1115.72 642.54v5M1130.29 645.04h5M1132.79 642.54v5M1147.36 645.04h5M1149.86 642.54v5M1164.43 645.04h5M1166.93 642.54v5M1181.50 645.04h5M1184.00 642.54v5M1198.57 645.04h5M1201.07 642.54v5M1215.64 645.04h5M1218.14 642.54v5M1232.71 645.04h5M1235.21 642.54v5M1249.78 645.04h5M1252.28 642.54v5M1266.85 645.04h5M1269.35 642.54v5M1283.92 645.04h5M1286.42 642.54v5M1300.99 645.04h5M1303.49 642.54v5M1318.06 645.04h5M1320.56 642.54v5M1335.13 645.04h5M1337.63 642.54v5M1352.20 645.04h5M1354.70 642.54v5M1369.27 645.04h5M1371.77 642.54v5M1386.34 645.04h5M1388.84 642.54v5M1403.41 645.04h5M1405.91 642.54v5M1420.48 645.04h5M1422.98 642.54v5M1437.55 645.04h5M1440.05 642.54v5M1454.62 645.04h5M1457.12 642.54v5M1471.69 645.04h5M1474.19 642.54v5M1488.76 645.04h5M1491.26 642.54v5M1505.83 645.04h5M1508.33 642.54v5M1522.90 645.04h5M1525.40 642.54v5M1539.97 645.04h5M1542.47 642.54v5M1557.04 645.04h5M1559.54 642.54v5M1574.11 645.04h5M1576.61 642.54v5M1591.18 645.04h5M1593.68 642.54v5M1608.25 645.04h5M1610.75 642.54v5M1625.32 645.04h5M1627.82 642.54v5M1642.39 645.04h5M1644.89 642.54v5M1659.46 645.04h5M1661.96 642.54v5M1676.53 645.04h5M1679.03 642.54v5M1693.60 645.04h5M1696.10 642.54v5M1710.67 645.04h5M1713.17 642.54v5M1727.74 645.04h5M1730.24 642.54v5M1744.81 645.04h5M1747.31 642.54v5M1761.88 645.04h5M1764.38 642.54v5M1778.95 645.04h5M1781.45 642.54v5M1796.02 645.04h5M1798.52 642.54v5M1813.09 645.04h5M1815.59 642.54v5M1830.16 645.04h5M1832.66 642.54v5M1847.23 645.04h5M1849.73 642.54v5M1864.30 645.04h5M1866.80 642.54v5M1881.37 645.04h5M1883.87 642.54v5M1898.44 645.04h5M1900.94 642.54v5M1915.51 645.04h5M1918.01 642.54v5M379.21 662.13h5M381.71 659.63v5M396.28 662.13h5M398.78 659.63v5M413.35 662.13h5M415.85 659.63v5M430.42 662.13h5M432.92 659.63v5M447.49 662.13h5M449.99 659.63v5M464.56 662.13h5M467.06 659.63v5M481.63 662.13h5M484.13 659.63v5M498.70 662.13h5M501.20 659.63v5M515.77 662.13h5M518.27 659.63v5M532.84 662.13h5M535.34 659.63v5M549.91 662.13h5M552.41 659.63v5M566.98 662.13h5M569.48 659.63v5M584.05 662.13h5M586.55 659.63v5M601.12 662.13h5M603.62 659.63v5M618.19 662.13h5M620.69 659.63v5M635.26 662.13h5M637.76 659.63v5M652.33 662.13h5M654.83 659.63v5M669.40 662.13h5M671.90 659.63v5M686.47 662.13h5M688.97 659.63v5M703.54 662.13h5M706.04 659.63v5M720.61 662.13h5M723.11 659.63v5M737.68 662.13h5M740.18 659.63v5M754.75 662.13h5M757.25 659.63v5M771.82 662.13h5M774.32 659.63v5M788.89 662.13h5M791.39 659.63v5M805.96 662.13h5M808.46 659.63v5M823.03 662.13h5M825.53 659.63v5M840.10 662.13h5M842.60 659.63v5M857.17 662.13h5M859.67 659.63v5M874.24 662.13h5M876.74 659.63v5M891.31 662.13h5M893.81 659.63v5M908.38 662.13h5M910.88 659.63v5M925.45 662.13h5M927.95 659.63v5M942.52 662.13h5M945.02 659.63v5M959.59 662.13h5M962.09 659.63v5M976.66 662.13h5M979.16 659.63v5M993.73 662.13h5M996.23 659.63v5M1010.80 662.13h5M1013.30 659.63v5M1027.87 662.13h5M1030.37 659.63v5M1044.94 662.13h5M1047.44 659.63v5M1062.01 662.13h5M1064.51 659.63v5M1079.08 662.13h5M1081.58 659.63v5M1096.15 662.13h5M1098.65 659.63v5M1113.22 662.13h5M1115.72 659.63v5M1130.29 662.13h5M1132.79 659.63v5M1147.36 662.13h5M1149.86 659.63v5M1164.43 662.13h5M1166.93 659.63v5M1181.50 662.13h5M1184.00 659.63v5M1198.57 662.13h5M1201.07 659.63v5M1215.64 662.13h5M1218.14 659.63v5M1232.71 662.13h5M1235.21 659.63v5M1249.78 662.13h5M1252.28 659.63v5M1266.85 662.13h5M1269.35 659.63v5M1283.92 662.13h5M1286.42 659.63v5M1300.99 662.13h5M1303.49 659.63v5M1318.06 662.13h5M1320.56 659.63v5M1335.13 662.13h5M1337.63 659.63v5M1352.20 662.13h5M1354.70 659.63v5M1369.27 662.13h5M1371.77 659.63v5M1386.34 662.13h5M1388.84 659.63v5M1403.41 662.13h5M1405.91 659.63v5M1420.48 662.13h5M1422.98 659.63v5M1437.55 662.13h5M1440.05 659.63v5M1454.62 662.13h5M1457.12 659.63v5M1471.69 662.13h5M1474.19 659.63v5M1488.76 662.13h5M1491.26 659.63v5M1505.83 662.13h5M1508.33 659.63v5M1522.90 662.13h5M1525.40 659.63v5M1539.97 662.13h5M1542.47 659.63v5M1557.04 662.13h5M1559.54 659.63v5M1574.11 662.13h5M1576.61 659.63v5M1591.18 662.13h5M1593.68 659.63v5M1608.25 662.13h5M1610.75 659.63v5M1625.32 662.13h5M1627.82 659.63v5M1642.39 662.13h5M1644.89 659.63v5M1659.46 662.13h5M1661.96 659.63v5M1676.53 662.13h5M1679.03 659.63v5M1693.60 662.13h5M1696.10 659.63v5M1710.67 662.13h5M1713.17 659.63v5M1727.74 662.13h5M1730.24 659.63v5M1744.81 662.13h5M1747.31 659.63v5M1761.88 662.13h5M1764.38 659.63v5M1778.95 662.13h5M1781.45 659.63v5M1796.02 662.13h5M1798.52 659.63v5M1813.09 662.13h5M1815.59 659.63v5M1830.16 662.13h5M1832.66 659.63v5M1847.23 662.13h5M1849.73 659.63v5M1864.30 662.13h5M1866.80 659.63v5M1881.37 662.13h5M1883.87 659.63v5M1898.44 662.13h5M1900.94 659.63v5M1915.51 662.13h5M1918.01 659.63v5M379.21 679.22h5M381.71 676.72v5M396.28 679.22h5M398.78 676.72v5M413.35 679.22h5M415.85 676.72v5M430.42 679.22h5M432.92 676.72v5M447.49 679.22h5M449.99 676.72v5M464.56 679.22h5M467.06 676.72v5M481.63 679.22h5M484.13 676.72v5M498.70 679.22h5M501.20 676.72v5M515.77 679.22h5M518.27 676.72v5M532.84 679.22h5M535.34 676.72v5M549.91 679.22h5M552.41 676.72v5M566.98 679.22h5M569.48 676.72v5M584.05 679.22h5M586.55 676.72v5M601.12 679.22h5M603.62 676.72v5M618.19 679.22h5M620.69 676.72v5M635.26 679.22h5M637.76 676.72v5M652.33 679.22h5M654.83 676.72v5M669.40 679.22h5M671.90 676.72v5M686.47 679.22h5M688.97 676.72v5M703.54 679.22h5M706.04 676.72v5M720.61 679.22h5M723.11 676.72v5M737.68 679.22h5M740.18 676.72v5M754.75 679.22h5M757.25 676.72v5M771.82 679.22h5M774.32 676.72v5M788.89 679.22h5M791.39 676.72v5M805.96 679.22h5M808.46 676.72v5M823.03 679.22h5M825.53 676.72v5M840.10 679.22h5M842.60 676.72v5M857.17 679.22h5M859.67 676.72v5M874.24 679.22h5M876.74 676.72v5M891.31 679.22h5M893.81 676.72v5M908.38 679.22h5M910.88 676.72v5M925.45 679.22h5M927.95 676.72v5M942.52 679.22h5M945.02 676.72v5M959.59 679.22h5M962.09 676.72v5M976.66 679.22h5M979.16 676.72v5M993.73 679.22h5M996.23 676.72v5M1010.80 679.22h5M1013.30 676.72v5M1027.87 679.22h5M1030.37 676.72v5M1044.94 679.22h5M1047.44 676.72v5M1062.01 679.22h5M1064.51 676.72v5M1079.08 679.22h5M1081.58 676.72v5M1096.15 679.22h5M1098.65 676.72v5M1113.22 679.22h5M1115.72 676.72v5M1130.29 679.22h5M1132.79 676.72v5M1147.36 679.22h5M1149.86 676.72v5M1164.43 679.22h5M1166.93 676.72v5M1181.50 679.22h5M1184.00 676.72v5M1198.57 679.22h5M1201.07 676.72v5M1215.64 679.22h5M1218.14 676.72v5M1232.71 679.22h5M1235.21 676.72v5M1249.78 679.22h5M1252.28 676.72v5M1266.85 679.22h5M1269.35 676.72v5M1283.92 679.22h5M1286.42 676.72v5M1300.99 679.22h5M1303.49 676.72v5M1318.06 679.22h5M1320.56 676.72v5M1335.13 679.22h5M1337.63 676.72v5M1352.20 679.22h5M1354.70 676.72v5M1369.27 679.22h5M1371.77 676.72v5M1386.34 679.22h5M1388.84 676.72v5M1403.41 679.22h5M1405.91 676.72v5M1420.48 679.22h5M1422.98 676.72v5M1437.55 679.22h5M1440.05 676.72v5M1454.62 679.22h5M1457.12 676.72v5M1471.69 679.22h5M1474.19 676.72v5M1488.76 679.22h5M1491.26 676.72v5M1505.83 679.22h5M1508.33 676.72v5M1522.90 679.22h5M1525.40 676.72v5M1539.97 679.22h5M1542.47 676.72v5M1557.04 679.22h5M1559.54 676.72v5M1574.11 679.22h5M1576.61 676.72v5M1591.18 679.22h5M1593.68 676.72v5M1608.25 679.22h5M1610.75 676.72v5M1625.32 679.22h5M1627.82 676.72v5M1642.39 679.22h5M1644.89 676.72v5M1659.46 679.22h5M1661.96 676.72v5M1676.53 679.22h5M1679.03 676.72v5M1693.60 679.22h5M1696.10 676.72v5M1710.67 679.22h5M1713.17 676.72v5M1727.74 679.22h5M1730.24 676.72v5M1744.81 679.22h5M1747.31 676.72v5M1761.88 679.22h5M1764.38 676.72v5M1778.95 679.22h5M1781.45 676.72v5M1796.02 679.22h5M1798.52 676.72v5M1813.09 679.22h5M1815.59 676.72v5M1830.16 679.22h5M1832.66 676.72v5M1847.23 679.22h5M1849.73 676.72v5M1864.30 679.22h5M1866.80 676.72v5M1881.37 679.22h5M1883.87 676.72v5M1898.44 679.22h5M1900.94 676.72v5M1915.51 679.22h5M1918.01 676.72v5M379.21 696.30h5M381.71 693.80v5M396.28 696.30h5M398.78 693.80v5M413.35 696.30h5M415.85 693.80v5M430.42 696.30h5M432.92 693.80v5M447.49 696.30h5M449.99 693.80v5M464.56 696.30h5M467.06 693.80v5M481.63 696.30h5M484.13 693.80v5M498.70 696.30h5M501.20 693.80v5M515.77 696.30h5M518.27 693.80v5M532.84 696.30h5M535.34 693.80v5M549.91 696.30h5M552.41 693.80v5M566.98 696.30h5M569.48 693.80v5M584.05 696.30h5M586.55 693.80v5M601.12 696.30h5M603.62 693.80v5M618.19 696.30h5M620.69 693.80v5M635.26 696.30h5M637.76 693.80v5M652.33 696.30h5M654.83 693.80v5M669.40 696.30h5M671.90 693.80v5M686.47 696.30h5M688.97 693.80v5M703.54 696.30h5M706.04 693.80v5M720.61 696.30h5M723.11 693.80v5M737.68 696.30h5M740.18 693.80v5M754.75 696.30h5M757.25 693.80v5M771.82 696.30h5M774.32 693.80v5M788.89 696.30h5M791.39 693.80v5M805.96 696.30h5M808.46 693.80v5M823.03 696.30h5M825.53 693.80v5M840.10 696.30h5M842.60 693.80v5M857.17 696.30h5M859.67 693.80v5M874.24 696.30h5M876.74 693.80v5M891.31 696.30h5M893.81 693.80v5M908.38 696.30h5M910.88 693.80v5M925.45 696.30h5M927.95 693.80v5M942.52 696.30h5M945.02 693.80v5M959.59 696.30h5M962.09 693.80v5M976.66 696.30h5M979.16 693.80v5M993.73 696.30h5M996.23 693.80v5M1010.80 696.30h5M1013.30 693.80v5M1027.87 696.30h5M1030.37 693.80v5M1044.94 696.30h5M1047.44 693.80v5M1062.01 696.30h5M1064.51 693.80v5M1079.08 696.30h5M1081.58 693.80v5M1096.15 696.30h5M1098.65 693.80v5M1113.22 696.30h5M1115.72 693.80v5M1130.29 696.30h5M1132.79 693.80v5M1147.36 696.30h5M1149.86 693.80v5M1164.43 696.30h5M1166.93 693.80v5M1181.50 696.30h5M1184.00 693.80v5M1198.57 696.30h5M1201.07 693.80v5M1215.64 696.30h5M1218.14 693.80v5M1232.71 696.30h5M1235.21 693.80v5M1249.78 696.30h5M1252.28 693.80v5M1266.85 696.30h5M1269.35 693.80v5M1283.92 696.30h5M1286.42 693.80v5M1300.99 696.30h5M1303.49 693.80v5M1318.06 696.30h5M1320.56 693.80v5M1335.13 696.30h5M1337.63 693.80v5M1352.20 696.30h5M1354.70 693.80v5M1369.27 696.30h5M1371.77 693.80v5M1386.34 696.30h5M1388.84 693.80v5M1403.41 696.30h5M1405.91 693.80v5M1420.48 696.30h5M1422.98 693.80v5M1437.55 696.30h5M1440.05 693.80v5M1454.62 696.30h5M1457.12 693.80v5M1471.69 696.30h5M1474.19 693.80v5M1488.76 696.30h5M1491.26 693.80v5M1505.83 696.30h5M1508.33 693.80v5M1522.90 696.30h5M1525.40 693.80v5M1539.97 696.30h5M1542.47 693.80v5M1557.04 696.30h5M1559.54 693.80v5M1574.11 696.30h5M1576.61 693.80v5M1591.18 696.30h5M1593.68 693.80v5M1608.25 696.30h5M1610.75 693.80v5M1625.32 696.30h5M1627.82 693.80v5M1642.39 696.30h5M1644.89 693.80v5M1659.46 696.30h5M1661.96 693.80v5M1676.53 696.30h5M1679.03 693.80v5M1693.60 696.30h5M1696.10 693.80v5M1710.67 696.30h5M1713.17 693.80v5M1727.74 696.30h5M1730.24 693.80v5M1744.81 696.30h5M1747.31 693.80v5M1761.88 696.30h5M1764.38 693.80v5M1778.95 696.30h5M1781.45 693.80v5M1796.02 696.30h5M1798.52 693.80v5M1813.09 696.30h5M1815.59 693.80v5M1830.16 696.30h5M1832.66 693.80v5M1847.23 696.30h5M1849.73 693.80v5M1864.30 696.30h5M1866.80 693.80v5M1881.37 696.30h5M1883.87 693.80v5M1898.44 696.30h5M1900.94 693.80v5M1915.51 696.30h5M1918.01 693.80v5M379.21 713.38h5M381.71 710.88v5M396.28 713.38h5M398.78 710.88v5M413.35 713.38h5M415.85 710.88v5M430.42 713.38h5M432.92 710.88v5M447.49 713.38h5M449.99 710.88v5M464.56 713.38h5M467.06 710.88v5M481.63 713.38h5M484.13 710.88v5M498.70 713.38h5M501.20 710.88v5M515.77 713.38h5M518.27 710.88v5M532.84 713.38h5M535.34 710.88v5M549.91 713.38h5M552.41 710.88v5M566.98 713.38h5M569.48 710.88v5M584.05 713.38h5M586.55 710.88v5M601.12 713.38h5M603.62 710.88v5M618.19 713.38h5M620.69 710.88v5M635.26 713.38h5M637.76 710.88v5M652.33 713.38h5M654.83 710.88v5M669.40 713.38h5M671.90 710.88v5M686.47 713.38h5M688.97 710.88v5M703.54 713.38h5M706.04 710.88v5M720.61 713.38h5M723.11 710.88v5M737.68 713.38h5M740.18 710.88v5M754.75 713.38h5M757.25 710.88v5M771.82 713.38h5M774.32 710.88v5M788.89 713.38h5M791.39 710.88v5M805.96 713.38h5M808.46 710.88v5M823.03 713.38h5M825.53 710.88v5M840.10 713.38h5M842.60 710.88v5M857.17 713.38h5M859.67 710.88v5M874.24 713.38h5M876.74 710.88v5M891.31 713.38h5M893.81 710.88v5M908.38 713.38h5M910.88 710.88v5M925.45 713.38h5M927.95 710.88v5M942.52 713.38h5M945.02 710.88v5M959.59 713.38h5M962.09 710.88v5M976.66 713.38h5M979.16 710.88v5M993.73 713.38h5M996.23 710.88v5M1010.80 713.38h5M1013.30 710.88v5M1027.87 713.38h5M1030.37 710.88v5M1044.94 713.38h5M1047.44 710.88v5M1062.01 713.38h5M1064.51 710.88v5M1079.08 713.38h5M1081.58 710.88v5M1096.15 713.38h5M1098.65 710.88v5M1113.22 713.38h5M1115.72 710.88v5M1130.29 713.38h5M1132.79 710.88v5M1147.36 713.38h5M1149.86 710.88v5M1164.43 713.38h5M1166.93 710.88v5M1181.50 713.38h5M1184.00 710.88v5M1198.57 713.38h5M1201.07 710.88v5M1215.64 713.38h5M1218.14 710.88v5M1232.71 713.38h5M1235.21 710.88v5M1249.78 713.38h5M1252.28 710.88v5M1266.85 713.38h5M1269.35 710.88v5M1283.92 713.38h5M1286.42 710.88v5M1300.99 713.38h5M1303.49 710.88v5M1318.06 713.38h5M1320.56 710.88v5M1335.13 713.38h5M1337.63 710.88v5M1352.20 713.38h5M1354.70 710.88v5M1369.27 713.38h5M1371.77 710.88v5M1386.34 713.38h5M1388.84 710.88v5M1403.41 713.38h5M1405.91 710.88v5M1420.48 713.38h5M1422.98 710.88v5M1437.55 713.38h5M1440.05 710.88v5M1454.62 713.38h5M1457.12 710.88v5M1471.69 713.38h5M1474.19 710.88v5M1488.76 713.38h5M1491.26 710.88v5M1505.83 713.38h5M1508.33 710.88v5M1522.90 713.38h5M1525.40 710.88v5M1539.97 713.38h5M1542.47 710.88v5M1557.04 713.38h5M1559.54 710.88v5M1574.11 713.38h5M1576.61 710.88v5M1591.18 713.38h5M1593.68 710.88v5M1608.25 713.38h5M1610.75 710.88v5M1625.32 713.38h5M1627.82 710.88v5M1642.39 713.38h5M1644.89 710.88v5M1659.46 713.38h5M1661.96 710.88v5M1676.53 713.38h5M1679.03 710.88v5M1693.60 713.38h5M1696.10 710.88v5M1710.67 713.38h5M1713.17 710.88v5M1727.74 713.38h5M1730.24 710.88v5M1744.81 713.38h5M1747.31 710.88v5M1761.88 713.38h5M1764.38 710.88v5M1778.95 713.38h5M1781.45 710.88v5M1796.02 713.38h5M1798.52 710.88v5M1813.09 713.38h5M1815.59 710.88v5M1830.16 713.38h5M1832.66 710.88v5M1847.23 713.38h5M1849.73 710.88v5M1864.30 713.38h5M1866.80 710.88v5M1881.37 713.38h5M1883.87 710.88v5M1898.44 713.38h5M1900.94 710.88v5M1915.51 713.38h5M1918.01 710.88v5M379.21 730.47h5M381.71 727.97v5M396.28 730.47h5M398.78 727.97v5M413.35 730.47h5M415.85 727.97v5M430.42 730.47h5M432.92 727.97v5M447.49 730.47h5M449.99 727.97v5M464.56 730.47h5M467.06 727.97v5M481.63 730.47h5M484.13 727.97v5M498.70 730.47h5M501.20 727.97v5M515.77 730.47h5M518.27 727.97v5M532.84 730.47h5M535.34 727.97v5M549.91 730.47h5M552.41 727.97v5M566.98 730.47h5M569.48 727.97v5M584.05 730.47h5M586.55 727.97v5M601.12 730.47h5M603.62 727.97v5M618.19 730.47h5M620.69 727.97v5M635.26 730.47h5M637.76 727.97v5M652.33 730.47h5M654.83 727.97v5M669.40 730.47h5M671.90 727.97v5M686.47 730.47h5M688.97 727.97v5M703.54 730.47h5M706.04 727.97v5M720.61 730.47h5M723.11 727.97v5M737.68 730.47h5M740.18 727.97v5M754.75 730.47h5M757.25 727.97v5M771.82 730.47h5M774.32 727.97v5M788.89 730.47h5M791.39 727.97v5M805.96 730.47h5M808.46 727.97v5M823.03 730.47h5M825.53 727.97v5M840.10 730.47h5M842.60 727.97v5M857.17 730.47h5M859.67 727.97v5M874.24 730.47h5M876.74 727.97v5M891.31 730.47h5M893.81 727.97v5M908.38 730.47h5M910.88 727.97v5M925.45 730.47h5M927.95 727.97v5M942.52 730.47h5M945.02 727.97v5M959.59 730.47h5M962.09 727.97v5M976.66 730.47h5M979.16 727.97v5M993.73 730.47h5M996.23 727.97v5M1010.80 730.47h5M1013.30 727.97v5M1027.87 730.47h5M1030.37 727.97v5M1044.94 730.47h5M1047.44 727.97v5M1062.01 730.47h5M1064.51 727.97v5M1079.08 730.47h5M1081.58 727.97v5M1096.15 730.47h5M1098.65 727.97v5M1113.22 730.47h5M1115.72 727.97v5M1130.29 730.47h5M1132.79 727.97v5M1147.36 730.47h5M1149.86 727.97v5M1164.43 730.47h5M1166.93 727.97v5M1181.50 730.47h5M1184.00 727.97v5M1198.57 730.47h5M1201.07 727.97v5M1215.64 730.47h5M1218.14 727.97v5M1232.71 730.47h5M1235.21 727.97v5M1249.78 730.47h5M1252.28 727.97v5M1266.85 730.47h5M1269.35 727.97v5M1283.92 730.47h5M1286.42 727.97v5M1300.99 730.47h5M1303.49 727.97v5M1318.06 730.47h5M1320.56 727.97v5M1335.13 730.47h5M1337.63 727.97v5M1352.20 730.47h5M1354.70 727.97v5M1369.27 730.47h5M1371.77 727.97v5M1386.34 730.47h5M1388.84 727.97v5M1403.41 730.47h5M1405.91 727.97v5M1420.48 730.47h5M1422.98 727.97v5M1437.55 730.47h5M1440.05 727.97v5M1454.62 730.47h5M1457.12 727.97v5M1471.69 730.47h5M1474.19 727.97v5M1488.76 730.47h5M1491.26 727.97v5M1505.83 730.47h5M1508.33 727.97v5M1522.90 730.47h5M1525.40 727.97v5M1539.97 730.47h5M1542.47 727.97v5M1557.04 730.47h5M1559.54 727.97v5M1574.11 730.47h5M1576.61 727.97v5M1591.18 730.47h5M1593.68 727.97v5M1608.25 730.47h5M1610.75 727.97v5M1625.32 730.47h5M1627.82 727.97v5M1642.39 730.47h5M1644.89 727.97v5M1659.46 730.47h5M1661.96 727.97v5M1676.53 730.47h5M1679.03 727.97v5M1693.60 730.47h5M1696.10 727.97v5M1710.67 730.47h5M1713.17 727.97v5M1727.74 730.47h5M1730.24 727.97v5M1744.81 730.47h5M1747.31 727.97v5M1761.88 730.47h5M1764.38 727.97v5M1778.95 730.47h5M1781.45 727.97v5M1796.02 730.47h5M1798.52 727.97v5M1813.09 730.47h5M1815.59 727.97v5M1830.16 730.47h5M1832.66 727.97v5M1847.23 730.47h5M1849.73 727.97v5M1864.30 730.47h5M1866.80 727.97v5M1881.37 730.47h5M1883.87 727.97v5M1898.44 730.47h5M1900.94 727.97v5M1915.51 730.47h5M1918.01 727.97v5M379.21 747.56h5M381.71 745.06v5M396.28 747.56h5M398.78 745.06v5M413.35 747.56h5M415.85 745.06v5M430.42 747.56h5M432.92 745.06v5M447.49 747.56h5M449.99 745.06v5M464.56 747.56h5M467.06 745.06v5M481.63 747.56h5M484.13 745.06v5M498.70 747.56h5M501.20 745.06v5M515.77 747.56h5M518.27 745.06v5M532.84 747.56h5M535.34 745.06v5M549.91 747.56h5M552.41 745.06v5M566.98 747.56h5M569.48 745.06v5M584.05 747.56h5M586.55 745.06v5M601.12 747.56h5M603.62 745.06v5M618.19 747.56h5M620.69 745.06v5M635.26 747.56h5M637.76 745.06v5M652.33 747.56h5M654.83 745.06v5M669.40 747.56h5M671.90 745.06v5M686.47 747.56h5M688.97 745.06v5M703.54 747.56h5M706.04 745.06v5M720.61 747.56h5M723.11 745.06v5M737.68 747.56h5M740.18 745.06v5M754.75 747.56h5M757.25 745.06v5M771.82 747.56h5M774.32 745.06v5M788.89 747.56h5M791.39 745.06v5M805.96 747.56h5M808.46 745.06v5M823.03 747.56h5M825.53 745.06v5M840.10 747.56h5M842.60 745.06v5M857.17 747.56h5M859.67 745.06v5M874.24 747.56h5M876.74 745.06v5M891.31 747.56h5M893.81 745.06v5M908.38 747.56h5M910.88 745.06v5M925.45 747.56h5M927.95 745.06v5M942.52 747.56h5M945.02 745.06v5M959.59 747.56h5M962.09 745.06v5M976.66 747.56h5M979.16 745.06v5M993.73 747.56h5M996.23 745.06v5M1010.80 747.56h5M1013.30 745.06v5M1027.87 747.56h5M1030.37 745.06v5M1044.94 747.56h5M1047.44 745.06v5M1062.01 747.56h5M1064.51 745.06v5M1079.08 747.56h5M1081.58 745.06v5M1096.15 747.56h5M1098.65 745.06v5M1113.22 747.56h5M1115.72 745.06v5M1130.29 747.56h5M1132.79 745.06v5M1147.36 747.56h5M1149.86 745.06v5M1164.43 747.56h5M1166.93 745.06v5M1181.50 747.56h5M1184.00 745.06v5M1198.57 747.56h5M1201.07 745.06v5M1215.64 747.56h5M1218.14 745.06v5M1232.71 747.56h5M1235.21 745.06v5M1249.78 747.56h5M1252.28 745.06v5M1266.85 747.56h5M1269.35 745.06v5M1283.92 747.56h5M1286.42 745.06v5M1300.99 747.56h5M1303.49 745.06v5M1318.06 747.56h5M1320.56 745.06v5M1335.13 747.56h5M1337.63 745.06v5M1352.20 747.56h5M1354.70 745.06v5M1369.27 747.56h5M1371.77 745.06v5M1386.34 747.56h5M1388.84 745.06v5M1403.41 747.56h5M1405.91 745.06v5M1420.48 747.56h5M1422.98 745.06v5M1437.55 747.56h5M1440.05 745.06v5M1454.62 747.56h5M1457.12 745.06v5M1471.69 747.56h5M1474.19 745.06v5M1488.76 747.56h5M1491.26 745.06v5M1505.83 747.56h5M1508.33 745.06v5M1522.90 747.56h5M1525.40 745.06v5M1539.97 747.56h5M1542.47 745.06v5M1557.04 747.56h5M1559.54 745.06v5M1574.11 747.56h5M1576.61 745.06v5M1591.18 747.56h5M1593.68 745.06v5M1608.25 747.56h5M1610.75 745.06v5M1625.32 747.56h5M1627.82 745.06v5M1642.39 747.56h5M1644.89 745.06v5M1659.46 747.56h5M1661.96 745.06v5M1676.53 747.56h5M1679.03 745.06v5M1693.60 747.56h5M1696.10 745.06v5M1710.67 747.56h5M1713.17 745.06v5M1727.74 747.56h5M1730.24 745.06v5M1744.81 747.56h5M1747.31 745.06v5M1761.88 747.56h5M1764.38 745.06v5M1778.95 747.56h5M1781.45 745.06v5M1796.02 747.56h5M1798.52 745.06v5M1813.09 747.56h5M1815.59 745.06v5M1830.16 747.56h5M1832.66 745.06v5M1847.23 747.56h5M1849.73 745.06v5M1864.30 747.56h5M1866.80 745.06v5M1881.37 747.56h5M1883.87 745.06v5M1898.44 747.56h5M1900.94 745.06v5M1915.51 747.56h5M1918.01 745.06v5M379.21 764.64h5M381.71 762.14v5M396.28 764.64h5M398.78 762.14v5M413.35 764.64h5M415.85 762.14v5M430.42 764.64h5M432.92 762.14v5M447.49 764.64h5M449.99 762.14v5M464.56 764.64h5M467.06 762.14v5M481.63 764.64h5M484.13 762.14v5M498.70 764.64h5M501.20 762.14v5M515.77 764.64h5M518.27 762.14v5M532.84 764.64h5M535.34 762.14v5M549.91 764.64h5M552.41 762.14v5M566.98 764.64h5M569.48 762.14v5M584.05 764.64h5M586.55 762.14v5M601.12 764.64h5M603.62 762.14v5M618.19 764.64h5M620.69 762.14v5M635.26 764.64h5M637.76 762.14v5M652.33 764.64h5M654.83 762.14v5M669.40 764.64h5M671.90 762.14v5M686.47 764.64h5M688.97 762.14v5M703.54 764.64h5M706.04 762.14v5M720.61 764.64h5M723.11 762.14v5M737.68 764.64h5M740.18 762.14v5M754.75 764.64h5M757.25 762.14v5M771.82 764.64h5M774.32 762.14v5M788.89 764.64h5M791.39 762.14v5M805.96 764.64h5M808.46 762.14v5M823.03 764.64h5M825.53 762.14v5M840.10 764.64h5M842.60 762.14v5M857.17 764.64h5M859.67 762.14v5M874.24 764.64h5M876.74 762.14v5M891.31 764.64h5M893.81 762.14v5M908.38 764.64h5M910.88 762.14v5M925.45 764.64h5M927.95 762.14v5M942.52 764.64h5M945.02 762.14v5M959.59 764.64h5M962.09 762.14v5M976.66 764.64h5M979.16 762.14v5M993.73 764.64h5M996.23 762.14v5M1010.80 764.64h5M1013.30 762.14v5M1027.87 764.64h5M1030.37 762.14v5M1044.94 764.64h5M1047.44 762.14v5M1062.01 764.64h5M1064.51 762.14v5M1079.08 764.64h5M1081.58 762.14v5M1096.15 764.64h5M1098.65 762.14v5M1113.22 764.64h5M1115.72 762.14v5M1130.29 764.64h5M1132.79 762.14v5M1147.36 764.64h5M1149.86 762.14v5M1164.43 764.64h5M1166.93 762.14v5M1181.50 764.64h5M1184.00 762.14v5M1198.57 764.64h5M1201.07 762.14v5M1215.64 764.64h5M1218.14 762.14v5M1232.71 764.64h5M1235.21 762.14v5M1249.78 764.64h5M1252.28 762.14v5M1266.85 764.64h5M1269.35 762.14v5M1283.92 764.64h5M1286.42 762.14v5M1300.99 764.64h5M1303.49 762.14v5M1318.06 764.64h5M1320.56 762.14v5M1335.13 764.64h5M1337.63 762.14v5M1352.20 764.64h5M1354.70 762.14v5M1369.27 764.64h5M1371.77 762.14v5M1386.34 764.64h5M1388.84 762.14v5M1403.41 764.64h5M1405.91 762.14v5M1420.48 764.64h5M1422.98 762.14v5M1437.55 764.64h5M1440.05 762.14v5M1454.62 764.64h5M1457.12 762.14v5M1471.69 764.64h5M1474.19 762.14v5M1488.76 764.64h5M1491.26 762.14v5M1505.83 764.64h5M1508.33 762.14v5M1522.90 764.64h5M1525.40 762.14v5M1539.97 764.64h5M1542.47 762.14v5M1557.04 764.64h5M1559.54 762.14v5M1574.11 764.64h5M1576.61 762.14v5M1591.18 764.64h5M1593.68 762.14v5M1608.25 764.64h5M1610.75 762.14v5M1625.32 764.64h5M1627.82 762.14v5M1642.39 764.64h5M1644.89 762.14v5M1659.46 764.64h5M1661.96 762.14v5M1676.53 764.64h5M1679.03 762.14v5M1693.60 764.64h5M1696.10 762.14v5M1710.67 764.64h5M1713.17 762.14v5M1727.74 764.64h5M1730.24 762.14v5M1744.81 764.64h5M1747.31 762.14v5M1761.88 764.64h5M1764.38 762.14v5M1778.95 764.64h5M1781.45 762.14v5M1796.02 764.64h5M1798.52 762.14v5M1813.09 764.64h5M1815.59 762.14v5M1830.16 764.64h5M1832.66 762.14v5M1847.23 764.64h5M1849.73 762.14v5M1864.30 764.64h5M1866.80 762.14v5M1881.37 764.64h5M1883.87 762.14v5M1898.44 764.64h5M1900.94 762.14v5M1915.51 764.64h5M1918.01 762.14v5M379.21 781.73h5M381.71 779.23v5M396.28 781.73h5M398.78 779.23v5M413.35 781.73h5M415.85 779.23v5M430.42 781.73h5M432.92 779.23v5M447.49 781.73h5M449.99 779.23v5M464.56 781.73h5M467.06 779.23v5M481.63 781.73h5M484.13 779.23v5M498.70 781.73h5M501.20 779.23v5M515.77 781.73h5M518.27 779.23v5M532.84 781.73h5M535.34 779.23v5M549.91 781.73h5M552.41 779.23v5M566.98 781.73h5M569.48 779.23v5M584.05 781.73h5M586.55 779.23v5M601.12 781.73h5M603.62 779.23v5M618.19 781.73h5M620.69 779.23v5M635.26 781.73h5M637.76 779.23v5M652.33 781.73h5M654.83 779.23v5M669.40 781.73h5M671.90 779.23v5M686.47 781.73h5M688.97 779.23v5M703.54 781.73h5M706.04 779.23v5M720.61 781.73h5M723.11 779.23v5M737.68 781.73h5M740.18 779.23v5M754.75 781.73h5M757.25 779.23v5M771.82 781.73h5M774.32 779.23v5M788.89 781.73h5M791.39 779.23v5M805.96 781.73h5M808.46 779.23v5M823.03 781.73h5M825.53 779.23v5M840.10 781.73h5M842.60 779.23v5M857.17 781.73h5M859.67 779.23v5M874.24 781.73h5M876.74 779.23v5M891.31 781.73h5M893.81 779.23v5M908.38 781.73h5M910.88 779.23v5M925.45 781.73h5M927.95 779.23v5M942.52 781.73h5M945.02 779.23v5M959.59 781.73h5M962.09 779.23v5M976.66 781.73h5M979.16 779.23v5M993.73 781.73h5M996.23 779.23v5M1010.80 781.73h5M1013.30 779.23v5M1027.87 781.73h5M1030.37 779.23v5M1044.94 781.73h5M1047.44 779.23v5M1062.01 781.73h5M1064.51 779.23v5M1079.08 781.73h5M1081.58 779.23v5M1096.15 781.73h5M1098.65 779.23v5M1113.22 781.73h5M1115.72 779.23v5M1130.29 781.73h5M1132.79 779.23v5M1147.36 781.73h5M1149.86 779.23v5M1164.43 781.73h5M1166.93 779.23v5M1181.50 781.73h5M1184.00 779.23v5M1198.57 781.73h5M1201.07 779.23v5M1215.64 781.73h5M1218.14 779.23v5M1232.71 781.73h5M1235.21 779.23v5M1249.78 781.73h5M1252.28 779.23v5M1266.85 781.73h5M1269.35 779.23v5M1283.92 781.73h5M1286.42 779.23v5M1300.99 781.73h5M1303.49 779.23v5M1318.06 781.73h5M1320.56 779.23v5M1335.13 781.73h5M1337.63 779.23v5M1352.20 781.73h5M1354.70 779.23v5M1369.27 781.73h5M1371.77 779.23v5M1386.34 781.73h5M1388.84 779.23v5M1403.41 781.73h5M1405.91 779.23v5M1420.48 781.73h5M1422.98 779.23v5M1437.55 781.73h5M1440.05 779.23v5M1454.62 781.73h5M1457.12 779.23v5M1471.69 781.73h5M1474.19 779.23v5M1488.76 781.73h5M1491.26 779.23v5M1505.83 781.73h5M1508.33 779.23v5M1522.90 781.73h5M1525.40 779.23v5M1539.97 781.73h5M1542.47 779.23v5M1557.04 781.73h5M1559.54 779.23v5M1574.11 781.73h5M1576.61 779.23v5M1591.18 781.73h5M1593.68 779.23v5M1608.25 781.73h5M1610.75 779.23v5M1625.32 781.73h5M1627.82 779.23v5M1642.39 781.73h5M1644.89 779.23v5M1659.46 781.73h5M1661.96 779.23v5M1676.53 781.73h5M1679.03 779.23v5M1693.60 781.73h5M1696.10 779.23v5M1710.67 781.73h5M1713.17 779.23v5M1727.74 781.73h5M1730.24 779.23v5M1744.81 781.73h5M1747.31 779.23v5M1761.88 781.73h5M1764.38 779.23v5M1778.95 781.73h5M1781.45 779.23v5M1796.02 781.73h5M1798.52 779.23v5M1813.09 781.73h5M1815.59 779.23v5M1830.16 781.73h5M1832.66 779.23v5M1847.23 781.73h5M1849.73 779.23v5M1864.30 781.73h5M1866.80 779.23v5M1881.37 781.73h5M1883.87 779.23v5M1898.44 781.73h5M1900.94 779.23v5M1915.51 781.73h5M1918.01 779.23v5M379.21 798.81h5M381.71 796.31v5M396.28 798.81h5M398.78 796.31v5M413.35 798.81h5M415.85 796.31v5M430.42 798.81h5M432.92 796.31v5M447.49 798.81h5M449.99 796.31v5M464.56 798.81h5M467.06 796.31v5M481.63 798.81h5M484.13 796.31v5M498.70 798.81h5M501.20 796.31v5M515.77 798.81h5M518.27 796.31v5M532.84 798.81h5M535.34 796.31v5M549.91 798.81h5M552.41 796.31v5M566.98 798.81h5M569.48 796.31v5M584.05 798.81h5M586.55 796.31v5M601.12 798.81h5M603.62 796.31v5M618.19 798.81h5M620.69 796.31v5M635.26 798.81h5M637.76 796.31v5M652.33 798.81h5M654.83 796.31v5M669.40 798.81h5M671.90 796.31v5M686.47 798.81h5M688.97 796.31v5M703.54 798.81h5M706.04 796.31v5M720.61 798.81h5M723.11 796.31v5M737.68 798.81h5M740.18 796.31v5M754.75 798.81h5M757.25 796.31v5M771.82 798.81h5M774.32 796.31v5M788.89 798.81h5M791.39 796.31v5M805.96 798.81h5M808.46 796.31v5M823.03 798.81h5M825.53 796.31v5M840.10 798.81h5M842.60 796.31v5M857.17 798.81h5M859.67 796.31v5M874.24 798.81h5M876.74 796.31v5M891.31 798.81h5M893.81 796.31v5M908.38 798.81h5M910.88 796.31v5M925.45 798.81h5M927.95 796.31v5M942.52 798.81h5M945.02 796.31v5M959.59 798.81h5M962.09 796.31v5M976.66 798.81h5M979.16 796.31v5M993.73 798.81h5M996.23 796.31v5M1010.80 798.81h5M1013.30 796.31v5M1027.87 798.81h5M1030.37 796.31v5M1044.94 798.81h5M1047.44 796.31v5M1062.01 798.81h5M1064.51 796.31v5M1079.08 798.81h5M1081.58 796.31v5M1096.15 798.81h5M1098.65 796.31v5M1113.22 798.81h5M1115.72 796.31v5M1130.29 798.81h5M1132.79 796.31v5M1147.36 798.81h5M1149.86 796.31v5M1164.43 798.81h5M1166.93 796.31v5M1181.50 798.81h5M1184.00 796.31v5M1198.57 798.81h5M1201.07 796.31v5M1215.64 798.81h5M1218.14 796.31v5M1232.71 798.81h5M1235.21 796.31v5M1249.78 798.81h5M1252.28 796.31v5M1266.85 798.81h5M1269.35 796.31v5M1283.92 798.81h5M1286.42 796.31v5M1300.99 798.81h5M1303.49 796.31v5M1318.06 798.81h5M1320.56 796.31v5M1335.13 798.81h5M1337.63 796.31v5M1352.20 798.81h5M1354.70 796.31v5M1369.27 798.81h5M1371.77 796.31v5M1386.34 798.81h5M1388.84 796.31v5M1403.41 798.81h5M1405.91 796.31v5M1420.48 798.81h5M1422.98 796.31v5M1437.55 798.81h5M1440.05 796.31v5M1454.62 798.81h5M1457.12 796.31v5M1471.69 798.81h5M1474.19 796.31v5M1488.76 798.81h5M1491.26 796.31v5M1505.83 798.81h5M1508.33 796.31v5M1522.90 798.81h5M1525.40 796.31v5M1539.97 798.81h5M1542.47 796.31v5M1557.04 798.81h5M1559.54 796.31v5M1574.11 798.81h5M1576.61 796.31v5M1591.18 798.81h5M1593.68 796.31v5M1608.25 798.81h5M1610.75 796.31v5M1625.32 798.81h5M1627.82 796.31v5M1642.39 798.81h5M1644.89 796.31v5M1659.46 798.81h5M1661.96 796.31v5M1676.53 798.81h5M1679.03 796.31v5M1693.60 798.81h5M1696.10 796.31v5M1710.67 798.81h5M1713.17 796.31v5M1727.74 798.81h5M1730.24 796.31v5M1744.81 798.81h5M1747.31 796.31v5M1761.88 798.81h5M1764.38 796.31v5M1778.95 798.81h5M1781.45 796.31v5M1796.02 798.81h5M1798.52 796.31v5M1813.09 798.81h5M1815.59 796.31v5M1830.16 798.81h5M1832.66 796.31v5M1847.23 798.81h5M1849.73 796.31v5M1864.30 798.81h5M1866.80 796.31v5M1881.37 798.81h5M1883.87 796.31v5M1898.44 798.81h5M1900.94 796.31v5M1915.51 798.81h5M1918.01 796.31v5M379.21 815.89h5M381.71 813.39v5M396.28 815.89h5M398.78 813.39v5M413.35 815.89h5M415.85 813.39v5M430.42 815.89h5M432.92 813.39v5M447.49 815.89h5M449.99 813.39v5M464.56 815.89h5M467.06 813.39v5M481.63 815.89h5M484.13 813.39v5M498.70 815.89h5M501.20 813.39v5M515.77 815.89h5M518.27 813.39v5M532.84 815.89h5M535.34 813.39v5M549.91 815.89h5M552.41 813.39v5M566.98 815.89h5M569.48 813.39v5M584.05 815.89h5M586.55 813.39v5M601.12 815.89h5M603.62 813.39v5M618.19 815.89h5M620.69 813.39v5M635.26 815.89h5M637.76 813.39v5M652.33 815.89h5M654.83 813.39v5M669.40 815.89h5M671.90 813.39v5M686.47 815.89h5M688.97 813.39v5M703.54 815.89h5M706.04 813.39v5M720.61 815.89h5M723.11 813.39v5M737.68 815.89h5M740.18 813.39v5M754.75 815.89h5M757.25 813.39v5M771.82 815.89h5M774.32 813.39v5M788.89 815.89h5M791.39 813.39v5M805.96 815.89h5M808.46 813.39v5M823.03 815.89h5M825.53 813.39v5M840.10 815.89h5M842.60 813.39v5M857.17 815.89h5M859.67 813.39v5M874.24 815.89h5M876.74 813.39v5M891.31 815.89h5M893.81 813.39v5M908.38 815.89h5M910.88 813.39v5M925.45 815.89h5M927.95 813.39v5M942.52 815.89h5M945.02 813.39v5M959.59 815.89h5M962.09 813.39v5M976.66 815.89h5M979.16 813.39v5M993.73 815.89h5M996.23 813.39v5M1010.80 815.89h5M1013.30 813.39v5M1027.87 815.89h5M1030.37 813.39v5M1044.94 815.89h5M1047.44 813.39v5M1062.01 815.89h5M1064.51 813.39v5M1079.08 815.89h5M1081.58 813.39v5M1096.15 815.89h5M1098.65 813.39v5M1113.22 815.89h5M1115.72 813.39v5M1130.29 815.89h5M1132.79 813.39v5M1147.36 815.89h5M1149.86 813.39v5M1164.43 815.89h5M1166.93 813.39v5M1181.50 815.89h5M1184.00 813.39v5M1198.57 815.89h5M1201.07 813.39v5M1215.64 815.89h5M1218.14 813.39v5M1232.71 815.89h5M1235.21 813.39v5M1249.78 815.89h5M1252.28 813.39v5M1266.85 815.89h5M1269.35 813.39v5M1283.92 815.89h5M1286.42 813.39v5M1300.99 815.89h5M1303.49 813.39v5M1318.06 815.89h5M1320.56 813.39v5M1335.13 815.89h5M1337.63 813.39v5M1352.20 815.89h5M1354.70 813.39v5M1369.27 815.89h5M1371.77 813.39v5M1386.34 815.89h5M1388.84 813.39v5M1403.41 815.89h5M1405.91 813.39v5M1420.48 815.89h5M1422.98 813.39v5M1437.55 815.89h5M1440.05 813.39v5M1454.62 815.89h5M1457.12 813.39v5M1471.69 815.89h5M1474.19 813.39v5M1488.76 815.89h5M1491.26 813.39v5M1505.83 815.89h5M1508.33 813.39v5M1522.90 815.89h5M1525.40 813.39v5M1539.97 815.89h5M1542.47 813.39v5M1557.04 815.89h5M1559.54 813.39v5M1574.11 815.89h5M1576.61 813.39v5M1591.18 815.89h5M1593.68 813.39v5M1608.25 815.89h5M1610.75 813.39v5M1625.32 815.89h5M1627.82 813.39v5M1642.39 815.89h5M1644.89 813.39v5M1659.46 815.89h5M1661.96 813.39v5M1676.53 815.89h5M1679.03 813.39v5M1693.60 815.89h5M1696.10 813.39v5M1710.67 815.89h5M1713.17 813.39v5M1727.74 815.89h5M1730.24 813.39v5M1744.81 815.89h5M1747.31 813.39v5M1761.88 815.89h5M1764.38 813.39v5M1778.95 815.89h5M1781.45 813.39v5M1796.02 815.89h5M1798.52 813.39v5M1813.09 815.89h5M1815.59 813.39v5M1830.16 815.89h5M1832.66 813.39v5M1847.23 815.89h5M1849.73 813.39v5M1864.30 815.89h5M1866.80 813.39v5M1881.37 815.89h5M1883.87 813.39v5M1898.44 815.89h5M1900.94 813.39v5M1915.51 815.89h5M1918.01 813.39v5M379.21 832.98h5M381.71 830.48v5M396.28 832.98h5M398.78 830.48v5M413.35 832.98h5M415.85 830.48v5M430.42 832.98h5M432.92 830.48v5M447.49 832.98h5M449.99 830.48v5M464.56 832.98h5M467.06 830.48v5M481.63 832.98h5M484.13 830.48v5M498.70 832.98h5M501.20 830.48v5M515.77 832.98h5M518.27 830.48v5M532.84 832.98h5M535.34 830.48v5M549.91 832.98h5M552.41 830.48v5M566.98 832.98h5M569.48 830.48v5M584.05 832.98h5M586.55 830.48v5M601.12 832.98h5M603.62 830.48v5M618.19 832.98h5M620.69 830.48v5M635.26 832.98h5M637.76 830.48v5M652.33 832.98h5M654.83 830.48v5M669.40 832.98h5M671.90 830.48v5M686.47 832.98h5M688.97 830.48v5M703.54 832.98h5M706.04 830.48v5M720.61 832.98h5M723.11 830.48v5M737.68 832.98h5M740.18 830.48v5M754.75 832.98h5M757.25 830.48v5M771.82 832.98h5M774.32 830.48v5M788.89 832.98h5M791.39 830.48v5M805.96 832.98h5M808.46 830.48v5M823.03 832.98h5M825.53 830.48v5M840.10 832.98h5M842.60 830.48v5M857.17 832.98h5M859.67 830.48v5M874.24 832.98h5M876.74 830.48v5M891.31 832.98h5M893.81 830.48v5M908.38 832.98h5M910.88 830.48v5M925.45 832.98h5M927.95 830.48v5M942.52 832.98h5M945.02 830.48v5M959.59 832.98h5M962.09 830.48v5M976.66 832.98h5M979.16 830.48v5M993.73 832.98h5M996.23 830.48v5M1010.80 832.98h5M1013.30 830.48v5M1027.87 832.98h5M1030.37 830.48v5M1044.94 832.98h5M1047.44 830.48v5M1062.01 832.98h5M1064.51 830.48v5M1079.08 832.98h5M1081.58 830.48v5M1096.15 832.98h5M1098.65 830.48v5M1113.22 832.98h5M1115.72 830.48v5M1130.29 832.98h5M1132.79 830.48v5M1147.36 832.98h5M1149.86 830.48v5M1164.43 832.98h5M1166.93 830.48v5M1181.50 832.98h5M1184.00 830.48v5M1198.57 832.98h5M1201.07 830.48v5M1215.64 832.98h5M1218.14 830.48v5M1232.71 832.98h5M1235.21 830.48v5M1249.78 832.98h5M1252.28 830.48v5M1266.85 832.98h5M1269.35 830.48v5M1283.92 832.98h5M1286.42 830.48v5M1300.99 832.98h5M1303.49 830.48v5M1318.06 832.98h5M1320.56 830.48v5M1335.13 832.98h5M1337.63 830.48v5M1352.20 832.98h5M1354.70 830.48v5M1369.27 832.98h5M1371.77 830.48v5M1386.34 832.98h5M1388.84 830.48v5M1403.41 832.98h5M1405.91 830.48v5M1420.48 832.98h5M1422.98 830.48v5M1437.55 832.98h5M1440.05 830.48v5M1454.62 832.98h5M1457.12 830.48v5M1471.69 832.98h5M1474.19 830.48v5M1488.76 832.98h5M1491.26 830.48v5M1505.83 832.98h5M1508.33 830.48v5M1522.90 832.98h5M1525.40 830.48v5M1539.97 832.98h5M1542.47 830.48v5M1557.04 832.98h5M1559.54 830.48v5M1574.11 832.98h5M1576.61 830.48v5M1591.18 832.98h5M1593.68 830.48v5M1608.25 832.98h5M1610.75 830.48v5M1625.32 832.98h5M1627.82 830.48v5M1642.39 832.98h5M1644.89 830.48v5M1659.46 832.98h5M1661.96 830.48v5M1676.53 832.98h5M1679.03 830.48v5M1693.60 832.98h5M1696.10 830.48v5M1710.67 832.98h5M1713.17 830.48v5M1727.74 832.98h5M1730.24 830.48v5M1744.81 832.98h5M1747.31 830.48v5M1761.88 832.98h5M1764.38 830.48v5M1778.95 832.98h5M1781.45 830.48v5M1796.02 832.98h5M1798.52 830.48v5M1813.09 832.98h5M1815.59 830.48v5M1830.16 832.98h5M1832.66 830.48v5M1847.23 832.98h5M1849.73 830.48v5M1864.30 832.98h5M1866.80 830.48v5M1881.37 832.98h5M1883.87 830.48v5M1898.44 832.98h5M1900.94 830.48v5M1915.51 832.98h5M1918.01 830.48v5M379.21 850.07h5M381.71 847.57v5M396.28 850.07h5M398.78 847.57v5M413.35 850.07h5M415.85 847.57v5M430.42 850.07h5M432.92 847.57v5M447.49 850.07h5M449.99 847.57v5M464.56 850.07h5M467.06 847.57v5M481.63 850.07h5M484.13 847.57v5M498.70 850.07h5M501.20 847.57v5M515.77 850.07h5M518.27 847.57v5M532.84 850.07h5M535.34 847.57v5M549.91 850.07h5M552.41 847.57v5M566.98 850.07h5M569.48 847.57v5M584.05 850.07h5M586.55 847.57v5M601.12 850.07h5M603.62 847.57v5M618.19 850.07h5M620.69 847.57v5M635.26 850.07h5M637.76 847.57v5M652.33 850.07h5M654.83 847.57v5M669.40 850.07h5M671.90 847.57v5M686.47 850.07h5M688.97 847.57v5M703.54 850.07h5M706.04 847.57v5M720.61 850.07h5M723.11 847.57v5M737.68 850.07h5M740.18 847.57v5M754.75 850.07h5M757.25 847.57v5M771.82 850.07h5M774.32 847.57v5M788.89 850.07h5M791.39 847.57v5M805.96 850.07h5M808.46 847.57v5M823.03 850.07h5M825.53 847.57v5M840.10 850.07h5M842.60 847.57v5M857.17 850.07h5M859.67 847.57v5M874.24 850.07h5M876.74 847.57v5M891.31 850.07h5M893.81 847.57v5M908.38 850.07h5M910.88 847.57v5M925.45 850.07h5M927.95 847.57v5M942.52 850.07h5M945.02 847.57v5M959.59 850.07h5M962.09 847.57v5M976.66 850.07h5M979.16 847.57v5M993.73 850.07h5M996.23 847.57v5M1010.80 850.07h5M1013.30 847.57v5M1027.87 850.07h5M1030.37 847.57v5M1044.94 850.07h5M1047.44 847.57v5M1062.01 850.07h5M1064.51 847.57v5M1079.08 850.07h5M1081.58 847.57v5M1096.15 850.07h5M1098.65 847.57v5M1113.22 850.07h5M1115.72 847.57v5M1130.29 850.07h5M1132.79 847.57v5M1147.36 850.07h5M1149.86 847.57v5M1164.43 850.07h5M1166.93 847.57v5M1181.50 850.07h5M1184.00 847.57v5M1198.57 850.07h5M1201.07 847.57v5M1215.64 850.07h5M1218.14 847.57v5M1232.71 850.07h5M1235.21 847.57v5M1249.78 850.07h5M1252.28 847.57v5M1266.85 850.07h5M1269.35 847.57v5M1283.92 850.07h5M1286.42 847.57v5M1300.99 850.07h5M1303.49 847.57v5M1318.06 850.07h5M1320.56 847.57v5M1335.13 850.07h5M1337.63 847.57v5M1352.20 850.07h5M1354.70 847.57v5M1369.27 850.07h5M1371.77 847.57v5M1386.34 850.07h5M1388.84 847.57v5M1403.41 850.07h5M1405.91 847.57v5M1420.48 850.07h5M1422.98 847.57v5M1437.55 850.07h5M1440.05 847.57v5M1454.62 850.07h5M1457.12 847.57v5M1471.69 850.07h5M1474.19 847.57v5M1488.76 850.07h5M1491.26 847.57v5M1505.83 850.07h5M1508.33 847.57v5M1522.90 850.07h5M1525.40 847.57v5M1539.97 850.07h5M1542.47 847.57v5M1557.04 850.07h5M1559.54 847.57v5M1574.11 850.07h5M1576.61 847.57v5M1591.18 850.07h5M1593.68 847.57v5M1608.25 850.07h5M1610.75 847.57v5M1625.32 850.07h5M1627.82 847.57v5M1642.39 850.07h5M1644.89 847.57v5M1659.46 850.07h5M1661.96 847.57v5M1676.53 850.07h5M1679.03 847.57v5M1693.60 850.07h5M1696.10 847.57v5M1710.67 850.07h5M1713.17 847.57v5M1727.74 850.07h5M1730.24 847.57v5M1744.81 850.07h5M1747.31 847.57v5M1761.88 850.07h5M1764.38 847.57v5M1778.95 850.07h5M1781.45 847.57v5M1796.02 850.07h5M1798.52 847.57v5M1813.09 850.07h5M1815.59 847.57v5M1830.16 850.07h5M1832.66 847.57v5M1847.23 850.07h5M1849.73 847.57v5M1864.30 850.07h5M1866.80 847.57v5M1881.37 850.07h5M1883.87 847.57v5M1898.44 850.07h5M1900.94 847.57v5M1915.51 850.07h5M1918.01 847.57v5M379.21 867.15h5M381.71 864.65v5M396.28 867.15h5M398.78 864.65v5M413.35 867.15h5M415.85 864.65v5M430.42 867.15h5M432.92 864.65v5M447.49 867.15h5M449.99 864.65v5M464.56 867.15h5M467.06 864.65v5M481.63 867.15h5M484.13 864.65v5M498.70 867.15h5M501.20 864.65v5M515.77 867.15h5M518.27 864.65v5M532.84 867.15h5M535.34 864.65v5M549.91 867.15h5M552.41 864.65v5M566.98 867.15h5M569.48 864.65v5M584.05 867.15h5M586.55 864.65v5M601.12 867.15h5M603.62 864.65v5M618.19 867.15h5M620.69 864.65v5M635.26 867.15h5M637.76 864.65v5M652.33 867.15h5M654.83 864.65v5M669.40 867.15h5M671.90 864.65v5M686.47 867.15h5M688.97 864.65v5M703.54 867.15h5M706.04 864.65v5M720.61 867.15h5M723.11 864.65v5M737.68 867.15h5M740.18 864.65v5M754.75 867.15h5M757.25 864.65v5M771.82 867.15h5M774.32 864.65v5M788.89 867.15h5M791.39 864.65v5M805.96 867.15h5M808.46 864.65v5M823.03 867.15h5M825.53 864.65v5M840.10 867.15h5M842.60 864.65v5M857.17 867.15h5M859.67 864.65v5M874.24 867.15h5M876.74 864.65v5M891.31 867.15h5M893.81 864.65v5M908.38 867.15h5M910.88 864.65v5M925.45 867.15h5M927.95 864.65v5M942.52 867.15h5M945.02 864.65v5M959.59 867.15h5M962.09 864.65v5M976.66 867.15h5M979.16 864.65v5M993.73 867.15h5M996.23 864.65v5M1010.80 867.15h5M1013.30 864.65v5M1027.87 867.15h5M1030.37 864.65v5M1044.94 867.15h5M1047.44 864.65v5M1062.01 867.15h5M1064.51 864.65v5M1079.08 867.15h5M1081.58 864.65v5M1096.15 867.15h5M1098.65 864.65v5M1113.22 867.15h5M1115.72 864.65v5M1130.29 867.15h5M1132.79 864.65v5M1147.36 867.15h5M1149.86 864.65v5M1164.43 867.15h5M1166.93 864.65v5M1181.50 867.15h5M1184.00 864.65v5M1198.57 867.15h5M1201.07 864.65v5M1215.64 867.15h5M1218.14 864.65v5M1232.71 867.15h5M1235.21 864.65v5M1249.78 867.15h5M1252.28 864.65v5M1266.85 867.15h5M1269.35 864.65v5M1283.92 867.15h5M1286.42 864.65v5M1300.99 867.15h5M1303.49 864.65v5M1318.06 867.15h5M1320.56 864.65v5M1335.13 867.15h5M1337.63 864.65v5M1352.20 867.15h5M1354.70 864.65v5M1369.27 867.15h5M1371.77 864.65v5M1386.34 867.15h5M1388.84 864.65v5M1403.41 867.15h5M1405.91 864.65v5M1420.48 867.15h5M1422.98 864.65v5M1437.55 867.15h5M1440.05 864.65v5M1454.62 867.15h5M1457.12 864.65v5M1471.69 867.15h5M1474.19 864.65v5M1488.76 867.15h5M1491.26 864.65v5M1505.83 867.15h5M1508.33 864.65v5M1522.90 867.15h5M1525.40 864.65v5M1539.97 867.15h5M1542.47 864.65v5M1557.04 867.15h5M1559.54 864.65v5M1574.11 867.15h5M1576.61 864.65v5M1591.18 867.15h5M1593.68 864.65v5M1608.25 867.15h5M1610.75 864.65v5M1625.32 867.15h5M1627.82 864.65v5M1642.39 867.15h5M1644.89 864.65v5M1659.46 867.15h5M1661.96 864.65v5M1676.53 867.15h5M1679.03 864.65v5M1693.60 867.15h5M1696.10 864.65v5M1710.67 867.15h5M1713.17 864.65v5M1727.74 867.15h5M1730.24 864.65v5M1744.81 867.15h5M1747.31 864.65v5M1761.88 867.15h5M1764.38 864.65v5M1778.95 867.15h5M1781.45 864.65v5M1796.02 867.15h5M1798.52 864.65v5M1813.09 867.15h5M1815.59 864.65v5M1830.16 867.15h5M1832.66 864.65v5M1847.23 867.15h5M1849.73 864.65v5M1864.30 867.15h5M1866.80 864.65v5M1881.37 867.15h5M1883.87 864.65v5M1898.44 867.15h5M1900.94 864.65v5M1915.51 867.15h5M1918.01 864.65v5M379.21 884.24h5M381.71 881.74v5M396.28 884.24h5M398.78 881.74v5M413.35 884.24h5M415.85 881.74v5M430.42 884.24h5M432.92 881.74v5M447.49 884.24h5M449.99 881.74v5M464.56 884.24h5M467.06 881.74v5M481.63 884.24h5M484.13 881.74v5M498.70 884.24h5M501.20 881.74v5M515.77 884.24h5M518.27 881.74v5M532.84 884.24h5M535.34 881.74v5M549.91 884.24h5M552.41 881.74v5M566.98 884.24h5M569.48 881.74v5M584.05 884.24h5M586.55 881.74v5M601.12 884.24h5M603.62 881.74v5M618.19 884.24h5M620.69 881.74v5M635.26 884.24h5M637.76 881.74v5M652.33 884.24h5M654.83 881.74v5M669.40 884.24h5M671.90 881.74v5M686.47 884.24h5M688.97 881.74v5M703.54 884.24h5M706.04 881.74v5M720.61 884.24h5M723.11 881.74v5M737.68 884.24h5M740.18 881.74v5M754.75 884.24h5M757.25 881.74v5M771.82 884.24h5M774.32 881.74v5M788.89 884.24h5M791.39 881.74v5M805.96 884.24h5M808.46 881.74v5M823.03 884.24h5M825.53 881.74v5M840.10 884.24h5M842.60 881.74v5M857.17 884.24h5M859.67 881.74v5M874.24 884.24h5M876.74 881.74v5M891.31 884.24h5M893.81 881.74v5M908.38 884.24h5M910.88 881.74v5M925.45 884.24h5M927.95 881.74v5M942.52 884.24h5M945.02 881.74v5M959.59 884.24h5M962.09 881.74v5M976.66 884.24h5M979.16 881.74v5M993.73 884.24h5M996.23 881.74v5M1010.80 884.24h5M1013.30 881.74v5M1027.87 884.24h5M1030.37 881.74v5M1044.94 884.24h5M1047.44 881.74v5M1062.01 884.24h5M1064.51 881.74v5M1079.08 884.24h5M1081.58 881.74v5M1096.15 884.24h5M1098.65 881.74v5M1113.22 884.24h5M1115.72 881.74v5M1130.29 884.24h5M1132.79 881.74v5M1147.36 884.24h5M1149.86 881.74v5M1164.43 884.24h5M1166.93 881.74v5M1181.50 884.24h5M1184.00 881.74v5M1198.57 884.24h5M1201.07 881.74v5M1215.64 884.24h5M1218.14 881.74v5M1232.71 884.24h5M1235.21 881.74v5M1249.78 884.24h5M1252.28 881.74v5M1266.85 884.24h5M1269.35 881.74v5M1283.92 884.24h5M1286.42 881.74v5M1300.99 884.24h5M1303.49 881.74v5M1318.06 884.24h5M1320.56 881.74v5M1335.13 884.24h5M1337.63 881.74v5M1352.20 884.24h5M1354.70 881.74v5M1369.27 884.24h5M1371.77 881.74v5M1386.34 884.24h5M1388.84 881.74v5M1403.41 884.24h5M1405.91 881.74v5M1420.48 884.24h5M1422.98 881.74v5M1437.55 884.24h5M1440.05 881.74v5M1454.62 884.24h5M1457.12 881.74v5M1471.69 884.24h5M1474.19 881.74v5M1488.76 884.24h5M1491.26 881.74v5M1505.83 884.24h5M1508.33 881.74v5M1522.90 884.24h5M1525.40 881.74v5M1539.97 884.24h5M1542.47 881.74v5M1557.04 884.24h5M1559.54 881.74v5M1574.11 884.24h5M1576.61 881.74v5M1591.18 884.24h5M1593.68 881.74v5M1608.25 884.24h5M1610.75 881.74v5M1625.32 884.24h5M1627.82 881.74v5M1642.39 884.24h5M1644.89 881.74v5M1659.46 884.24h5M1661.96 881.74v5M1676.53 884.24h5M1679.03 881.74v5M1693.60 884.24h5M1696.10 881.74v5M1710.67 884.24h5M1713.17 881.74v5M1727.74 884.24h5M1730.24 881.74v5M1744.81 884.24h5M1747.31 881.74v5M1761.88 884.24h5M1764.38 881.74v5M1778.95 884.24h5M1781.45 881.74v5M1796.02 884.24h5M1798.52 881.74v5M1813.09 884.24h5M1815.59 881.74v5M1830.16 884.24h5M1832.66 881.74v5M1847.23 884.24h5M1849.73 881.74v5M1864.30 884.24h5M1866.80 881.74v5M1881.37 884.24h5M1883.87 881.74v5M1898.44 884.24h5M1900.94 881.74v5M1915.51 884.24h5M1918.01 881.74v5M379.21 901.32h5M381.71 898.82v5M396.28 901.32h5M398.78 898.82v5M413.35 901.32h5M415.85 898.82v5M430.42 901.32h5M432.92 898.82v5M447.49 901.32h5M449.99 898.82v5M464.56 901.32h5M467.06 898.82v5M481.63 901.32h5M484.13 898.82v5M498.70 901.32h5M501.20 898.82v5M515.77 901.32h5M518.27 898.82v5M532.84 901.32h5M535.34 898.82v5M549.91 901.32h5M552.41 898.82v5M566.98 901.32h5M569.48 898.82v5M584.05 901.32h5M586.55 898.82v5M601.12 901.32h5M603.62 898.82v5M618.19 901.32h5M620.69 898.82v5M635.26 901.32h5M637.76 898.82v5M652.33 901.32h5M654.83 898.82v5M669.40 901.32h5M671.90 898.82v5M686.47 901.32h5M688.97 898.82v5M703.54 901.32h5M706.04 898.82v5M720.61 901.32h5M723.11 898.82v5M737.68 901.32h5M740.18 898.82v5M754.75 901.32h5M757.25 898.82v5M771.82 901.32h5M774.32 898.82v5M788.89 901.32h5M791.39 898.82v5M805.96 901.32h5M808.46 898.82v5M823.03 901.32h5M825.53 898.82v5M840.10 901.32h5M842.60 898.82v5M857.17 901.32h5M859.67 898.82v5M874.24 901.32h5M876.74 898.82v5M891.31 901.32h5M893.81 898.82v5M908.38 901.32h5M910.88 898.82v5M925.45 901.32h5M927.95 898.82v5M942.52 901.32h5M945.02 898.82v5M959.59 901.32h5M962.09 898.82v5M976.66 901.32h5M979.16 898.82v5M993.73 901.32h5M996.23 898.82v5M1010.80 901.32h5M1013.30 898.82v5M1027.87 901.32h5M1030.37 898.82v5M1044.94 901.32h5M1047.44 898.82v5M1062.01 901.32h5M1064.51 898.82v5M1079.08 901.32h5M1081.58 898.82v5M1096.15 901.32h5M1098.65 898.82v5M1113.22 901.32h5M1115.72 898.82v5M1130.29 901.32h5M1132.79 898.82v5M1147.36 901.32h5M1149.86 898.82v5M1164.43 901.32h5M1166.93 898.82v5M1181.50 901.32h5M1184.00 898.82v5M1198.57 901.32h5M1201.07 898.82v5M1215.64 901.32h5M1218.14 898.82v5M1232.71 901.32h5M1235.21 898.82v5M1249.78 901.32h5M1252.28 898.82v5M1266.85 901.32h5M1269.35 898.82v5M1283.92 901.32h5M1286.42 898.82v5M1300.99 901.32h5M1303.49 898.82v5M1318.06 901.32h5M1320.56 898.82v5M1335.13 901.32h5M1337.63 898.82v5M1352.20 901.32h5M1354.70 898.82v5M1369.27 901.32h5M1371.77 898.82v5M1386.34 901.32h5M1388.84 898.82v5M1403.41 901.32h5M1405.91 898.82v5M1420.48 901.32h5M1422.98 898.82v5M1437.55 901.32h5M1440.05 898.82v5M1454.62 901.32h5M1457.12 898.82v5M1471.69 901.32h5M1474.19 898.82v5M1488.76 901.32h5M1491.26 898.82v5M1505.83 901.32h5M1508.33 898.82v5M1522.90 901.32h5M1525.40 898.82v5M1539.97 901.32h5M1542.47 898.82v5M1557.04 901.32h5M1559.54 898.82v5M1574.11 901.32h5M1576.61 898.82v5M1591.18 901.32h5M1593.68 898.82v5M1608.25 901.32h5M1610.75 898.82v5M1625.32 901.32h5M1627.82 898.82v5M1642.39 901.32h5M1644.89 898.82v5M1659.46 901.32h5M1661.96 898.82v5M1676.53 901.32h5M1679.03 898.82v5M1693.60 901.32h5M1696.10 898.82v5M1710.67 901.32h5M1713.17 898.82v5M1727.74 901.32h5M1730.24 898.82v5M1744.81 901.32h5M1747.31 898.82v5M1761.88 901.32h5M1764.38 898.82v5M1778.95 901.32h5M1781.45 898.82v5M1796.02 901.32h5M1798.52 898.82v5M1813.09 901.32h5M1815.59 898.82v5M1830.16 901.32h5M1832.66 898.82v5M1847.23 901.32h5M1849.73 898.82v5M1864.30 901.32h5M1866.80 898.82v5M1881.37 901.32h5M1883.87 898.82v5M1898.44 901.32h5M1900.94 898.82v5M1915.51 901.32h5M1918.01 898.82v5M379.21 918.40h5M381.71 915.90v5M396.28 918.40h5M398.78 915.90v5M413.35 918.40h5M415.85 915.90v5M430.42 918.40h5M432.92 915.90v5M447.49 918.40h5M449.99 915.90v5M464.56 918.40h5M467.06 915.90v5M481.63 918.40h5M484.13 915.90v5M498.70 918.40h5M501.20 915.90v5M515.77 918.40h5M518.27 915.90v5M532.84 918.40h5M535.34 915.90v5M549.91 918.40h5M552.41 915.90v5M566.98 918.40h5M569.48 915.90v5M584.05 918.40h5M586.55 915.90v5M601.12 918.40h5M603.62 915.90v5M618.19 918.40h5M620.69 915.90v5M635.26 918.40h5M637.76 915.90v5M652.33 918.40h5M654.83 915.90v5M669.40 918.40h5M671.90 915.90v5M686.47 918.40h5M688.97 915.90v5M703.54 918.40h5M706.04 915.90v5M720.61 918.40h5M723.11 915.90v5M737.68 918.40h5M740.18 915.90v5M754.75 918.40h5M757.25 915.90v5M771.82 918.40h5M774.32 915.90v5M788.89 918.40h5M791.39 915.90v5M805.96 918.40h5M808.46 915.90v5M823.03 918.40h5M825.53 915.90v5M840.10 918.40h5M842.60 915.90v5M857.17 918.40h5M859.67 915.90v5M874.24 918.40h5M876.74 915.90v5M891.31 918.40h5M893.81 915.90v5M908.38 918.40h5M910.88 915.90v5M925.45 918.40h5M927.95 915.90v5M942.52 918.40h5M945.02 915.90v5M959.59 918.40h5M962.09 915.90v5M976.66 918.40h5M979.16 915.90v5M993.73 918.40h5M996.23 915.90v5M1010.80 918.40h5M1013.30 915.90v5M1027.87 918.40h5M1030.37 915.90v5M1044.94 918.40h5M1047.44 915.90v5M1062.01 918.40h5M1064.51 915.90v5M1079.08 918.40h5M1081.58 915.90v5M1096.15 918.40h5M1098.65 915.90v5M1113.22 918.40h5M1115.72 915.90v5M1130.29 918.40h5M1132.79 915.90v5M1147.36 918.40h5M1149.86 915.90v5M1164.43 918.40h5M1166.93 915.90v5M1181.50 918.40h5M1184.00 915.90v5M1198.57 918.40h5M1201.07 915.90v5M1215.64 918.40h5M1218.14 915.90v5M1232.71 918.40h5M1235.21 915.90v5M1249.78 918.40h5M1252.28 915.90v5M1266.85 918.40h5M1269.35 915.90v5M1283.92 918.40h5M1286.42 915.90v5M1300.99 918.40h5M1303.49 915.90v5M1318.06 918.40h5M1320.56 915.90v5M1335.13 918.40h5M1337.63 915.90v5M1352.20 918.40h5M1354.70 915.90v5M1369.27 918.40h5M1371.77 915.90v5M1386.34 918.40h5M1388.84 915.90v5M1403.41 918.40h5M1405.91 915.90v5M1420.48 918.40h5M1422.98 915.90v5M1437.55 918.40h5M1440.05 915.90v5M1454.62 918.40h5M1457.12 915.90v5M1471.69 918.40h5M1474.19 915.90v5M1488.76 918.40h5M1491.26 915.90v5M1505.83 918.40h5M1508.33 915.90v5M1522.90 918.40h5M1525.40 915.90v5M1539.97 918.40h5M1542.47 915.90v5M1557.04 918.40h5M1559.54 915.90v5M1574.11 918.40h5M1576.61 915.90v5M1591.18 918.40h5M1593.68 915.90v5M1608.25 918.40h5M1610.75 915.90v5M1625.32 918.40h5M1627.82 915.90v5M1642.39 918.40h5M1644.89 915.90v5M1659.46 918.40h5M1661.96 915.90v5M1676.53 918.40h5M1679.03 915.90v5M1693.60 918.40h5M1696.10 915.90v5M1710.67 918.40h5M1713.17 915.90v5M1727.74 918.40h5M1730.24 915.90v5M1744.81 918.40h5M1747.31 915.90v5M1761.88 918.40h5M1764.38 915.90v5M1778.95 918.40h5M1781.45 915.90v5M1796.02 918.40h5M1798.52 915.90v5M1813.09 918.40h5M1815.59 915.90v5M1830.16 918.40h5M1832.66 915.90v5M1847.23 918.40h5M1849.73 915.90v5M1864.30 918.40h5M1866.80 915.90v5M1881.37 918.40h5M1883.87 915.90v5M1898.44 918.40h5M1900.94 915.90v5M1915.51 918.40h5M1918.01 915.90v5M379.21 935.49h5M381.71 932.99v5M396.28 935.49h5M398.78 932.99v5M413.35 935.49h5M415.85 932.99v5M430.42 935.49h5M432.92 932.99v5M447.49 935.49h5M449.99 932.99v5M464.56 935.49h5M467.06 932.99v5M481.63 935.49h5M484.13 932.99v5M498.70 935.49h5M501.20 932.99v5M515.77 935.49h5M518.27 932.99v5M532.84 935.49h5M535.34 932.99v5M549.91 935.49h5M552.41 932.99v5M566.98 935.49h5M569.48 932.99v5M584.05 935.49h5M586.55 932.99v5M601.12 935.49h5M603.62 932.99v5M618.19 935.49h5M620.69 932.99v5M635.26 935.49h5M637.76 932.99v5M652.33 935.49h5M654.83 932.99v5M669.40 935.49h5M671.90 932.99v5M686.47 935.49h5M688.97 932.99v5M703.54 935.49h5M706.04 932.99v5M720.61 935.49h5M723.11 932.99v5M737.68 935.49h5M740.18 932.99v5M754.75 935.49h5M757.25 932.99v5M771.82 935.49h5M774.32 932.99v5M788.89 935.49h5M791.39 932.99v5M805.96 935.49h5M808.46 932.99v5M823.03 935.49h5M825.53 932.99v5M840.10 935.49h5M842.60 932.99v5M857.17 935.49h5M859.67 932.99v5M874.24 935.49h5M876.74 932.99v5M891.31 935.49h5M893.81 932.99v5M908.38 935.49h5M910.88 932.99v5M925.45 935.49h5M927.95 932.99v5M942.52 935.49h5M945.02 932.99v5M959.59 935.49h5M962.09 932.99v5M976.66 935.49h5M979.16 932.99v5M993.73 935.49h5M996.23 932.99v5M1010.80 935.49h5M1013.30 932.99v5M1027.87 935.49h5M1030.37 932.99v5M1044.94 935.49h5M1047.44 932.99v5M1062.01 935.49h5M1064.51 932.99v5M1079.08 935.49h5M1081.58 932.99v5M1096.15 935.49h5M1098.65 932.99v5M1113.22 935.49h5M1115.72 932.99v5M1130.29 935.49h5M1132.79 932.99v5M1147.36 935.49h5M1149.86 932.99v5M1164.43 935.49h5M1166.93 932.99v5M1181.50 935.49h5M1184.00 932.99v5M1198.57 935.49h5M1201.07 932.99v5M1215.64 935.49h5M1218.14 932.99v5M1232.71 935.49h5M1235.21 932.99v5M1249.78 935.49h5M1252.28 932.99v5M1266.85 935.49h5M1269.35 932.99v5M1283.92 935.49h5M1286.42 932.99v5M1300.99 935.49h5M1303.49 932.99v5M1318.06 935.49h5M1320.56 932.99v5M1335.13 935.49h5M1337.63 932.99v5M1352.20 935.49h5M1354.70 932.99v5M1369.27 935.49h5M1371.77 932.99v5M1386.34 935.49h5M1388.84 932.99v5M1403.41 935.49h5M1405.91 932.99v5M1420.48 935.49h5M1422.98 932.99v5M1437.55 935.49h5M1440.05 932.99v5M1454.62 935.49h5M1457.12 932.99v5M1471.69 935.49h5M1474.19 932.99v5M1488.76 935.49h5M1491.26 932.99v5M1505.83 935.49h5M1508.33 932.99v5M1522.90 935.49h5M1525.40 932.99v5M1539.97 935.49h5M1542.47 932.99v5M1557.04 935.49h5M1559.54 932.99v5M1574.11 935.49h5M1576.61 932.99v5M1591.18 935.49h5M1593.68 932.99v5M1608.25 935.49h5M1610.75 932.99v5M1625.32 935.49h5M1627.82 932.99v5M1642.39 935.49h5M1644.89 932.99v5M1659.46 935.49h5M1661.96 932.99v5M1676.53 935.49h5M1679.03 932.99v5M1693.60 935.49h5M1696.10 932.99v5M1710.67 935.49h5M1713.17 932.99v5M1727.74 935.49h5M1730.24 932.99v5M1744.81 935.49h5M1747.31 932.99v5M1761.88 935.49h5M1764.38 932.99v5M1778.95 935.49h5M1781.45 932.99v5M1796.02 935.49h5M1798.52 932.99v5M1813.09 935.49h5M1815.59 932.99v5M1830.16 935.49h5M1832.66 932.99v5M1847.23 935.49h5M1849.73 932.99v5M1864.30 935.49h5M1866.80 932.99v5M1881.37 935.49h5M1883.87 932.99v5M1898.44 935.49h5M1900.94 932.99v5M1915.51 935.49h5M1918.01 932.99v5M379.21 952.58h5M381.71 950.08v5M396.28 952.58h5M398.78 950.08v5M413.35 952.58h5M415.85 950.08v5M430.42 952.58h5M432.92 950.08v5M447.49 952.58h5M449.99 950.08v5M464.56 952.58h5M467.06 950.08v5M481.63 952.58h5M484.13 950.08v5M498.70 952.58h5M501.20 950.08v5M515.77 952.58h5M518.27 950.08v5M532.84 952.58h5M535.34 950.08v5M549.91 952.58h5M552.41 950.08v5M566.98 952.58h5M569.48 950.08v5M584.05 952.58h5M586.55 950.08v5M601.12 952.58h5M603.62 950.08v5M618.19 952.58h5M620.69 950.08v5M635.26 952.58h5M637.76 950.08v5M652.33 952.58h5M654.83 950.08v5M669.40 952.58h5M671.90 950.08v5M686.47 952.58h5M688.97 950.08v5M703.54 952.58h5M706.04 950.08v5M720.61 952.58h5M723.11 950.08v5M737.68 952.58h5M740.18 950.08v5M754.75 952.58h5M757.25 950.08v5M771.82 952.58h5M774.32 950.08v5M788.89 952.58h5M791.39 950.08v5M805.96 952.58h5M808.46 950.08v5M823.03 952.58h5M825.53 950.08v5M840.10 952.58h5M842.60 950.08v5M857.17 952.58h5M859.67 950.08v5M874.24 952.58h5M876.74 950.08v5M891.31 952.58h5M893.81 950.08v5M908.38 952.58h5M910.88 950.08v5M925.45 952.58h5M927.95 950.08v5M942.52 952.58h5M945.02 950.08v5M959.59 952.58h5M962.09 950.08v5M976.66 952.58h5M979.16 950.08v5M993.73 952.58h5M996.23 950.08v5M1010.80 952.58h5M1013.30 950.08v5M1027.87 952.58h5M1030.37 950.08v5M1044.94 952.58h5M1047.44 950.08v5M1062.01 952.58h5M1064.51 950.08v5M1079.08 952.58h5M1081.58 950.08v5M1096.15 952.58h5M1098.65 950.08v5M1113.22 952.58h5M1115.72 950.08v5M1130.29 952.58h5M1132.79 950.08v5M1147.36 952.58h5M1149.86 950.08v5M1164.43 952.58h5M1166.93 950.08v5M1181.50 952.58h5M1184.00 950.08v5M1198.57 952.58h5M1201.07 950.08v5M1215.64 952.58h5M1218.14 950.08v5M1232.71 952.58h5M1235.21 950.08v5M1249.78 952.58h5M1252.28 950.08v5M1266.85 952.58h5M1269.35 950.08v5M1283.92 952.58h5M1286.42 950.08v5M1300.99 952.58h5M1303.49 950.08v5M1318.06 952.58h5M1320.56 950.08v5M1335.13 952.58h5M1337.63 950.08v5M1352.20 952.58h5M1354.70 950.08v5M1369.27 952.58h5M1371.77 950.08v5M1386.34 952.58h5M1388.84 950.08v5M1403.41 952.58h5M1405.91 950.08v5M1420.48 952.58h5M1422.98 950.08v5M1437.55 952.58h5M1440.05 950.08v5M1454.62 952.58h5M1457.12 950.08v5M1471.69 952.58h5M1474.19 950.08v5M1488.76 952.58h5M1491.26 950.08v5M1505.83 952.58h5M1508.33 950.08v5M1522.90 952.58h5M1525.40 950.08v5M1539.97 952.58h5M1542.47 950.08v5M1557.04 952.58h5M1559.54 950.08v5M1574.11 952.58h5M1576.61 950.08v5M1591.18 952.58h5M1593.68 950.08v5M1608.25 952.58h5M1610.75 950.08v5M1625.32 952.58h5M1627.82 950.08v5M1642.39 952.58h5M1644.89 950.08v5M1659.46 952.58h5M1661.96 950.08v5M1676.53 952.58h5M1679.03 950.08v5M1693.60 952.58h5M1696.10 950.08v5M1710.67 952.58h5M1713.17 950.08v5M1727.74 952.58h5M1730.24 950.08v5M1744.81 952.58h5M1747.31 950.08v5M1761.88 952.58h5M1764.38 950.08v5M1778.95 952.58h5M1781.45 950.08v5M1796.02 952.58h5M1798.52 950.08v5M1813.09 952.58h5M1815.59 950.08v5M1830.16 952.58h5M1832.66 950.08v5M1847.23 952.58h5M1849.73 950.08v5M1864.30 952.58h5M1866.80 950.08v5M1881.37 952.58h5M1883.87 950.08v5M1898.44 952.58h5M1900.94 950.08v5M1915.51 952.58h5M1918.01 950.08v5M379.21 969.66h5M381.71 967.16v5M396.28 969.66h5M398.78 967.16v5M413.35 969.66h5M415.85 967.16v5M430.42 969.66h5M432.92 967.16v5M447.49 969.66h5M449.99 967.16v5M464.56 969.66h5M467.06 967.16v5M481.63 969.66h5M484.13 967.16v5M498.70 969.66h5M501.20 967.16v5M515.77 969.66h5M518.27 967.16v5M532.84 969.66h5M535.34 967.16v5M549.91 969.66h5M552.41 967.16v5M566.98 969.66h5M569.48 967.16v5M584.05 969.66h5M586.55 967.16v5M601.12 969.66h5M603.62 967.16v5M618.19 969.66h5M620.69 967.16v5M635.26 969.66h5M637.76 967.16v5M652.33 969.66h5M654.83 967.16v5M669.40 969.66h5M671.90 967.16v5M686.47 969.66h5M688.97 967.16v5M703.54 969.66h5M706.04 967.16v5M720.61 969.66h5M723.11 967.16v5M737.68 969.66h5M740.18 967.16v5M754.75 969.66h5M757.25 967.16v5M771.82 969.66h5M774.32 967.16v5M788.89 969.66h5M791.39 967.16v5M805.96 969.66h5M808.46 967.16v5M823.03 969.66h5M825.53 967.16v5M840.10 969.66h5M842.60 967.16v5M857.17 969.66h5M859.67 967.16v5M874.24 969.66h5M876.74 967.16v5M891.31 969.66h5M893.81 967.16v5M908.38 969.66h5M910.88 967.16v5M925.45 969.66h5M927.95 967.16v5M942.52 969.66h5M945.02 967.16v5M959.59 969.66h5M962.09 967.16v5M976.66 969.66h5M979.16 967.16v5M993.73 969.66h5M996.23 967.16v5M1010.80 969.66h5M1013.30 967.16v5M1027.87 969.66h5M1030.37 967.16v5M1044.94 969.66h5M1047.44 967.16v5M1062.01 969.66h5M1064.51 967.16v5M1079.08 969.66h5M1081.58 967.16v5M1096.15 969.66h5M1098.65 967.16v5M1113.22 969.66h5M1115.72 967.16v5M1130.29 969.66h5M1132.79 967.16v5M1147.36 969.66h5M1149.86 967.16v5M1164.43 969.66h5M1166.93 967.16v5M1181.50 969.66h5M1184.00 967.16v5M1198.57 969.66h5M1201.07 967.16v5M1215.64 969.66h5M1218.14 967.16v5M1232.71 969.66h5M1235.21 967.16v5M1249.78 969.66h5M1252.28 967.16v5M1266.85 969.66h5M1269.35 967.16v5M1283.92 969.66h5M1286.42 967.16v5M1300.99 969.66h5M1303.49 967.16v5M1318.06 969.66h5M1320.56 967.16v5M1335.13 969.66h5M1337.63 967.16v5M1352.20 969.66h5M1354.70 967.16v5M1369.27 969.66h5M1371.77 967.16v5M1386.34 969.66h5M1388.84 967.16v5M1403.41 969.66h5M1405.91 967.16v5M1420.48 969.66h5M1422.98 967.16v5M1437.55 969.66h5M1440.05 967.16v5M1454.62 969.66h5M1457.12 967.16v5M1471.69 969.66h5M1474.19 967.16v5M1488.76 969.66h5M1491.26 967.16v5M1505.83 969.66h5M1508.33 967.16v5M1522.90 969.66h5M1525.40 967.16v5M1539.97 969.66h5M1542.47 967.16v5M1557.04 969.66h5M1559.54 967.16v5M1574.11 969.66h5M1576.61 967.16v5M1591.18 969.66h5M1593.68 967.16v5M1608.25 969.66h5M1610.75 967.16v5M1625.32 969.66h5M1627.82 967.16v5M1642.39 969.66h5M1644.89 967.16v5M1659.46 969.66h5M1661.96 967.16v5M1676.53 969.66h5M1679.03 967.16v5M1693.60 969.66h5M1696.10 967.16v5M1710.67 969.66h5M1713.17 967.16v5M1727.74 969.66h5M1730.24 967.16v5M1744.81 969.66h5M1747.31 967.16v5M1761.88 969.66h5M1764.38 967.16v5M1778.95 969.66h5M1781.45 967.16v5M1796.02 969.66h5M1798.52 967.16v5M1813.09 969.66h5M1815.59 967.16v5M1830.16 969.66h5M1832.66 967.16v5M1847.23 969.66h5M1849.73 967.16v5M1864.30 969.66h5M1866.80 967.16v5M1881.37 969.66h5M1883.87 967.16v5M1898.44 969.66h5M1900.94 967.16v5M1915.51 969.66h5M1918.01 967.16v5M379.21 986.75h5M381.71 984.25v5M396.28 986.75h5M398.78 984.25v5M413.35 986.75h5M415.85 984.25v5M430.42 986.75h5M432.92 984.25v5M447.49 986.75h5M449.99 984.25v5M464.56 986.75h5M467.06 984.25v5M481.63 986.75h5M484.13 984.25v5M498.70 986.75h5M501.20 984.25v5M515.77 986.75h5M518.27 984.25v5M532.84 986.75h5M535.34 984.25v5M549.91 986.75h5M552.41 984.25v5M566.98 986.75h5M569.48 984.25v5M584.05 986.75h5M586.55 984.25v5M601.12 986.75h5M603.62 984.25v5M618.19 986.75h5M620.69 984.25v5M635.26 986.75h5M637.76 984.25v5M652.33 986.75h5M654.83 984.25v5M669.40 986.75h5M671.90 984.25v5M686.47 986.75h5M688.97 984.25v5M703.54 986.75h5M706.04 984.25v5M720.61 986.75h5M723.11 984.25v5M737.68 986.75h5M740.18 984.25v5M754.75 986.75h5M757.25 984.25v5M771.82 986.75h5M774.32 984.25v5M788.89 986.75h5M791.39 984.25v5M805.96 986.75h5M808.46 984.25v5M823.03 986.75h5M825.53 984.25v5M840.10 986.75h5M842.60 984.25v5M857.17 986.75h5M859.67 984.25v5M874.24 986.75h5M876.74 984.25v5M891.31 986.75h5M893.81 984.25v5M908.38 986.75h5M910.88 984.25v5M925.45 986.75h5M927.95 984.25v5M942.52 986.75h5M945.02 984.25v5M959.59 986.75h5M962.09 984.25v5M976.66 986.75h5M979.16 984.25v5M993.73 986.75h5M996.23 984.25v5M1010.80 986.75h5M1013.30 984.25v5M1027.87 986.75h5M1030.37 984.25v5M1044.94 986.75h5M1047.44 984.25v5M1062.01 986.75h5M1064.51 984.25v5M1079.08 986.75h5M1081.58 984.25v5M1096.15 986.75h5M1098.65 984.25v5M1113.22 986.75h5M1115.72 984.25v5M1130.29 986.75h5M1132.79 984.25v5M1147.36 986.75h5M1149.86 984.25v5M1164.43 986.75h5M1166.93 984.25v5M1181.50 986.75h5M1184.00 984.25v5M1198.57 986.75h5M1201.07 984.25v5M1215.64 986.75h5M1218.14 984.25v5M1232.71 986.75h5M1235.21 984.25v5M1249.78 986.75h5M1252.28 984.25v5M1266.85 986.75h5M1269.35 984.25v5M1283.92 986.75h5M1286.42 984.25v5M1300.99 986.75h5M1303.49 984.25v5M1318.06 986.75h5M1320.56 984.25v5M1335.13 986.75h5M1337.63 984.25v5M1352.20 986.75h5M1354.70 984.25v5M1369.27 986.75h5M1371.77 984.25v5M1386.34 986.75h5M1388.84 984.25v5M1403.41 986.75h5M1405.91 984.25v5M1420.48 986.75h5M1422.98 984.25v5M1437.55 986.75h5M1440.05 984.25v5M1454.62 986.75h5M1457.12 984.25v5M1471.69 986.75h5M1474.19 984.25v5M1488.76 986.75h5M1491.26 984.25v5M1505.83 986.75h5M1508.33 984.25v5M1522.90 986.75h5M1525.40 984.25v5M1539.97 986.75h5M1542.47 984.25v5M1557.04 986.75h5M1559.54 984.25v5M1574.11 986.75h5M1576.61 984.25v5M1591.18 986.75h5M1593.68 984.25v5M1608.25 986.75h5M1610.75 984.25v5M1625.32 986.75h5M1627.82 984.25v5M1642.39 986.75h5M1644.89 984.25v5M1659.46 986.75h5M1661.96 984.25v5M1676.53 986.75h5M1679.03 984.25v5M1693.60 986.75h5M1696.10 984.25v5M1710.67 986.75h5M1713.17 984.25v5M1727.74 986.75h5M1730.24 984.25v5M1744.81 986.75h5M1747.31 984.25v5M1761.88 986.75h5M1764.38 984.25v5M1778.95 986.75h5M1781.45 984.25v5M1796.02 986.75h5M1798.52 984.25v5M1813.09 986.75h5M1815.59 984.25v5M1830.16 986.75h5M1832.66 984.25v5M1847.23 986.75h5M1849.73 984.25v5M1864.30 986.75h5M1866.80 984.25v5M1881.37 986.75h5M1883.87 984.25v5M1898.44 986.75h5M1900.94 984.25v5M1915.51 986.75h5M1918.01 984.25v5M379.21 1003.83h5M381.71 1001.33v5M396.28 1003.83h5M398.78 1001.33v5M413.35 1003.83h5M415.85 1001.33v5M430.42 1003.83h5M432.92 1001.33v5M447.49 1003.83h5M449.99 1001.33v5M464.56 1003.83h5M467.06 1001.33v5M481.63 1003.83h5M484.13 1001.33v5M498.70 1003.83h5M501.20 1001.33v5M515.77 1003.83h5M518.27 1001.33v5M532.84 1003.83h5M535.34 1001.33v5M549.91 1003.83h5M552.41 1001.33v5M566.98 1003.83h5M569.48 1001.33v5M584.05 1003.83h5M586.55 1001.33v5M601.12 1003.83h5M603.62 1001.33v5M618.19 1003.83h5M620.69 1001.33v5M635.26 1003.83h5M637.76 1001.33v5M652.33 1003.83h5M654.83 1001.33v5M669.40 1003.83h5M671.90 1001.33v5M686.47 1003.83h5M688.97 1001.33v5M703.54 1003.83h5M706.04 1001.33v5M720.61 1003.83h5M723.11 1001.33v5M737.68 1003.83h5M740.18 1001.33v5M754.75 1003.83h5M757.25 1001.33v5M771.82 1003.83h5M774.32 1001.33v5M788.89 1003.83h5M791.39 1001.33v5M805.96 1003.83h5M808.46 1001.33v5M823.03 1003.83h5M825.53 1001.33v5M840.10 1003.83h5M842.60 1001.33v5M857.17 1003.83h5M859.67 1001.33v5M874.24 1003.83h5M876.74 1001.33v5M891.31 1003.83h5M893.81 1001.33v5M908.38 1003.83h5M910.88 1001.33v5M925.45 1003.83h5M927.95 1001.33v5M942.52 1003.83h5M945.02 1001.33v5M959.59 1003.83h5M962.09 1001.33v5M976.66 1003.83h5M979.16 1001.33v5M993.73 1003.83h5M996.23 1001.33v5M1010.80 1003.83h5M1013.30 1001.33v5M1027.87 1003.83h5M1030.37 1001.33v5M1044.94 1003.83h5M1047.44 1001.33v5M1062.01 1003.83h5M1064.51 1001.33v5M1079.08 1003.83h5M1081.58 1001.33v5M1096.15 1003.83h5M1098.65 1001.33v5M1113.22 1003.83h5M1115.72 1001.33v5M1130.29 1003.83h5M1132.79 1001.33v5M1147.36 1003.83h5M1149.86 1001.33v5M1164.43 1003.83h5M1166.93 1001.33v5M1181.50 1003.83h5M1184.00 1001.33v5M1198.57 1003.83h5M1201.07 1001.33v5M1215.64 1003.83h5M1218.14 1001.33v5M1232.71 1003.83h5M1235.21 1001.33v5M1249.78 1003.83h5M1252.28 1001.33v5M1266.85 1003.83h5M1269.35 1001.33v5M1283.92 1003.83h5M1286.42 1001.33v5M1300.99 1003.83h5M1303.49 1001.33v5M1318.06 1003.83h5M1320.56 1001.33v5M1335.13 1003.83h5M1337.63 1001.33v5M1352.20 1003.83h5M1354.70 1001.33v5M1369.27 1003.83h5M1371.77 1001.33v5M1386.34 1003.83h5M1388.84 1001.33v5M1403.41 1003.83h5M1405.91 1001.33v5M1420.48 1003.83h5M1422.98 1001.33v5M1437.55 1003.83h5M1440.05 1001.33v5M1454.62 1003.83h5M1457.12 1001.33v5M1471.69 1003.83h5M1474.19 1001.33v5M1488.76 1003.83h5M1491.26 1001.33v5M1505.83 1003.83h5M1508.33 1001.33v5M1522.90 1003.83h5M1525.40 1001.33v5M1539.97 1003.83h5M1542.47 1001.33v5M1557.04 1003.83h5M1559.54 1001.33v5M1574.11 1003.83h5M1576.61 1001.33v5M1591.18 1003.83h5M1593.68 1001.33v5M1608.25 1003.83h5M1610.75 1001.33v5M1625.32 1003.83h5M1627.82 1001.33v5M1642.39 1003.83h5M1644.89 1001.33v5M1659.46 1003.83h5M1661.96 1001.33v5M1676.53 1003.83h5M1679.03 1001.33v5M1693.60 1003.83h5M1696.10 1001.33v5M1710.67 1003.83h5M1713.17 1001.33v5M1727.74 1003.83h5M1730.24 1001.33v5M1744.81 1003.83h5M1747.31 1001.33v5M1761.88 1003.83h5M1764.38 1001.33v5M1778.95 1003.83h5M1781.45 1001.33v5M1796.02 1003.83h5M1798.52 1001.33v5M1813.09 1003.83h5M1815.59 1001.33v5M1830.16 1003.83h5M1832.66 1001.33v5M1847.23 1003.83h5M1849.73 1001.33v5M1864.30 1003.83h5M1866.80 1001.33v5M1881.37 1003.83h5M1883.87 1001.33v5M1898.44 1003.83h5M1900.94 1001.33v5M1915.51 1003.83h5M1918.01 1001.33v5M379.21 1020.92h5M381.71 1018.42v5M396.28 1020.92h5M398.78 1018.42v5M413.35 1020.92h5M415.85 1018.42v5M430.42 1020.92h5M432.92 1018.42v5M447.49 1020.92h5M449.99 1018.42v5M464.56 1020.92h5M467.06 1018.42v5M481.63 1020.92h5M484.13 1018.42v5M498.70 1020.92h5M501.20 1018.42v5M515.77 1020.92h5M518.27 1018.42v5M532.84 1020.92h5M535.34 1018.42v5M549.91 1020.92h5M552.41 1018.42v5M566.98 1020.92h5M569.48 1018.42v5M584.05 1020.92h5M586.55 1018.42v5M601.12 1020.92h5M603.62 1018.42v5M618.19 1020.92h5M620.69 1018.42v5M635.26 1020.92h5M637.76 1018.42v5M652.33 1020.92h5M654.83 1018.42v5M669.40 1020.92h5M671.90 1018.42v5M686.47 1020.92h5M688.97 1018.42v5M703.54 1020.92h5M706.04 1018.42v5M720.61 1020.92h5M723.11 1018.42v5M737.68 1020.92h5M740.18 1018.42v5M754.75 1020.92h5M757.25 1018.42v5M771.82 1020.92h5M774.32 1018.42v5M788.89 1020.92h5M791.39 1018.42v5M805.96 1020.92h5M808.46 1018.42v5M823.03 1020.92h5M825.53 1018.42v5M840.10 1020.92h5M842.60 1018.42v5M857.17 1020.92h5M859.67 1018.42v5M874.24 1020.92h5M876.74 1018.42v5M891.31 1020.92h5M893.81 1018.42v5M908.38 1020.92h5M910.88 1018.42v5M925.45 1020.92h5M927.95 1018.42v5M942.52 1020.92h5M945.02 1018.42v5M959.59 1020.92h5M962.09 1018.42v5M976.66 1020.92h5M979.16 1018.42v5M993.73 1020.92h5M996.23 1018.42v5M1010.80 1020.92h5M1013.30 1018.42v5M1027.87 1020.92h5M1030.37 1018.42v5M1044.94 1020.92h5M1047.44 1018.42v5M1062.01 1020.92h5M1064.51 1018.42v5M1079.08 1020.92h5M1081.58 1018.42v5M1096.15 1020.92h5M1098.65 1018.42v5M1113.22 1020.92h5M1115.72 1018.42v5M1130.29 1020.92h5M1132.79 1018.42v5M1147.36 1020.92h5M1149.86 1018.42v5M1164.43 1020.92h5M1166.93 1018.42v5M1181.50 1020.92h5M1184.00 1018.42v5M1198.57 1020.92h5M1201.07 1018.42v5M1215.64 1020.92h5M1218.14 1018.42v5M1232.71 1020.92h5M1235.21 1018.42v5M1249.78 1020.92h5M1252.28 1018.42v5M1266.85 1020.92h5M1269.35 1018.42v5M1283.92 1020.92h5M1286.42 1018.42v5M1300.99 1020.92h5M1303.49 1018.42v5M1318.06 1020.92h5M1320.56 1018.42v5M1335.13 1020.92h5M1337.63 1018.42v5M1352.20 1020.92h5M1354.70 1018.42v5M1369.27 1020.92h5M1371.77 1018.42v5M1386.34 1020.92h5M1388.84 1018.42v5M1403.41 1020.92h5M1405.91 1018.42v5M1420.48 1020.92h5M1422.98 1018.42v5M1437.55 1020.92h5M1440.05 1018.42v5M1454.62 1020.92h5M1457.12 1018.42v5M1471.69 1020.92h5M1474.19 1018.42v5M1488.76 1020.92h5M1491.26 1018.42v5M1505.83 1020.92h5M1508.33 1018.42v5M1522.90 1020.92h5M1525.40 1018.42v5M1539.97 1020.92h5M1542.47 1018.42v5M1557.04 1020.92h5M1559.54 1018.42v5M1574.11 1020.92h5M1576.61 1018.42v5M1591.18 1020.92h5M1593.68 1018.42v5M1608.25 1020.92h5M1610.75 1018.42v5M1625.32 1020.92h5M1627.82 1018.42v5M1642.39 1020.92h5M1644.89 1018.42v5M1659.46 1020.92h5M1661.96 1018.42v5M1676.53 1020.92h5M1679.03 1018.42v5M1693.60 1020.92h5M1696.10 1018.42v5M1710.67 1020.92h5M1713.17 1018.42v5M1727.74 1020.92h5M1730.24 1018.42v5M1744.81 1020.92h5M1747.31 1018.42v5M1761.88 1020.92h5M1764.38 1018.42v5M1778.95 1020.92h5M1781.45 1018.42v5M1796.02 1020.92h5M1798.52 1018.42v5M1813.09 1020.92h5M1815.59 1018.42v5M1830.16 1020.92h5M1832.66 1018.42v5M1847.23 1020.92h5M1849.73 1018.42v5M1864.30 1020.92h5M1866.80 1018.42v5M1881.37 1020.92h5M1883.87 1018.42v5M1898.44 1020.92h5M1900.94 1018.42v5M1915.51 1020.92h5M1918.01 1018.42v5" stroke="#cfcfcf" stroke-width="1" fill="none"/>
<rect x="379.0" y="274.0" width="2.2" height="22.0" fill="#43A047" rx="0" />
<rect x="379.0" y="318.3" width="128.6" height="53.1" fill="#049BE5" rx="0" />
<text x="390.9" y="332.5" fill="#fff" font-size="12.5" text-anchor="start" >select list item&#160; list</text>
<text x="491.7" y="355.2" fill="#fff" font-size="12.5" text-anchor="end" >index</text>
<rect x="507.6" y="318.2" width="170.4" height="21.8" fill="#F4511E" rx="0" />
<path d="M508.2,322.2 l -0.6,0 c 0,8.5 -6.8,-6.8 -6.8,6.4 s 6.8,-2.1 6.8,6.4 l 0.6,0 Z" fill="#F4511E" />
<text x="516.9" y="333.6" fill="#fff" font-size="12.5" text-anchor="start" >get</text>
<rect x="538.0" y="322.7" width="135.0" height="12.8" fill="#FAB8A3" rx="4" />
<text x="542.0" y="333.5" fill="#000" font-size="12.5" text-anchor="start" >global DataPesanan</text>
<path d="M662.0,327.6 l 5,0 l -2.5,3.5 Z" fill="#F4511E" />
<rect x="508.0" y="340.6" width="203.0" height="31.3" fill="#3B4AAC" rx="0" />
<path d="M508.6,345.0 l -0.6,0 c 0,8.5 -6.8,-6.8 -6.8,6.4 s 6.8,-2.1 6.8,6.4 l 0.6,0 Z" fill="#3B4AAC" />
<rect x="516.0" y="344.7" width="14.0" height="14.0" fill="#1a10dc" rx="3" stroke="#a99be0" stroke-width="0.9"/>
<path d="M523.00,347.36 L523.98,348.05 L524.47,349.15 L525.67,349.03 L526.76,349.53 L526.65,350.72 L525.94,351.70 L526.65,352.68 L526.76,353.87 L525.67,354.37 L524.47,354.25 L523.98,355.35 L523.00,356.04 L522.02,355.35 L521.53,354.25 L520.33,354.37 L519.24,353.87 L519.35,352.68 L520.06,351.70 L519.35,350.72 L519.24,349.53 L520.33,349.03 L521.53,349.15 L522.02,348.05 Z" fill="#d4d0f4" />
<circle cx="523.0" cy="351.7" r="1.54" fill="#1a10dc"/>
<rect x="545.0" y="345.6" width="101.5" height="22.4" fill="#F4511E" rx="0" />
<path d="M545.6,349.6 l -0.6,0 c 0,8.5 -6.8,-6.8 -6.8,6.4 s 6.8,-2.1 6.8,6.4 l 0.6,0 Z" fill="#F4511E" />
<text x="553.7" y="361.3" fill="#fff" font-size="12.5" text-anchor="start" >get</text>
<rect x="575.6" y="350.1" width="65.4" height="13.4" fill="#FAB8A3" rx="4" />
<text x="579.6" y="361.2" fill="#000" font-size="12.5" text-anchor="start" >position</text>
<path d="M630.0,355.3 l 5,0 l -2.5,3.5 Z" fill="#F4511E" />
<text x="655.0" y="359.8" fill="#fff" font-size="12.5" text-anchor="start" >+</text>
<path d="M702.5,345.6 L677.0,345.6 L677.0,349.9 c 0,8.5 -6.8,-6.8 -6.8,6.4 s 6.8,-2.1 6.8,6.4 L677.0,368.5 L702.5,368.5 Z" fill="none" stroke="#8890d2" stroke-width="0.9"/>
<rect x="681.0" y="350.0" width="16.0" height="13.8" fill="#B2B8DF" rx="4" />
<text x="684.5" y="361.3" fill="#000" font-size="12.5" text-anchor="start" >1</text>
<rect x="383.0" y="372.7" width="23.7" height="20.8" fill="#3B4AAC" rx="0" />
<path d="M383.6,376.7 l -0.6,0 c 0,8.5 -6.8,-6.8 -6.8,6.4 s 6.8,-2.1 6.8,6.4 l 0.6,0 Z" fill="#3B4AAC" />
<rect x="387.0" y="377.0" width="15.2" height="12.5" fill="#B2B8DF" rx="4" />
<text x="390.5" y="387.6" fill="#000" font-size="12.5" text-anchor="start" >4</text>
<rect x="379.0" y="394.4" width="26.3" height="75.6" fill="#049BE5" rx="0" />
<text x="389.0" y="408.5" fill="#fff" font-size="12.5" text-anchor="end" >st</text>
<text x="389.0" y="462.6" fill="#fff" font-size="12.5" text-anchor="end" >ex</text>
<rect x="405.3" y="394.4" width="125.5" height="53.4" fill="#049BE5" rx="0" />
<text x="413.8" y="408.5" fill="#fff" font-size="12.5" text-anchor="start" >select list item&#160; list</text>
<text x="515.0" y="431.5" fill="#fff" font-size="12.5" text-anchor="end" >index</text>
<rect x="530.7" y="394.2" width="170.3" height="21.6" fill="#F4511E" rx="0" />
<path d="M531.3,398.2 l -0.6,0 c 0,8.5 -6.8,-6.8 -6.8,6.4 s 6.8,-2.1 6.8,6.4 l 0.6,0 Z" fill="#F4511E" />
<text x="539.5" y="409.5" fill="#fff" font-size="12.5" text-anchor="start" >get</text>
<rect x="561.5" y="398.7" width="134.5" height="12.6" fill="#FAB8A3" rx="4" />
<text x="565.5" y="409.4" fill="#000" font-size="12.5" text-anchor="start" >global DataPesanan</text>
<path d="M685.0,403.5 l 5,0 l -2.5,3.5 Z" fill="#F4511E" />
<rect x="531.0" y="416.4" width="202.8" height="31.6" fill="#3B4AAC" rx="0" />
<path d="M531.6,421.0 l -0.6,0 c 0,8.5 -6.8,-6.8 -6.8,6.4 s 6.8,-2.1 6.8,6.4 l 0.6,0 Z" fill="#3B4AAC" />
<rect x="539.5" y="420.5" width="14.0" height="14.0" fill="#1a10dc" rx="3" stroke="#a99be0" stroke-width="0.9"/>
<path d="M546.50,423.16 L547.48,423.85 L547.97,424.95 L549.17,424.83 L550.26,425.33 L550.15,426.52 L549.44,427.50 L550.15,428.48 L550.26,429.67 L549.17,430.17 L547.97,430.05 L547.48,431.15 L546.50,431.84 L545.52,431.15 L545.03,430.05 L543.83,430.17 L542.74,429.67 L542.85,428.48 L543.56,427.50 L542.85,426.52 L542.74,425.33 L543.83,424.83 L545.03,424.95 L545.52,423.85 Z" fill="#d4d0f4" />
<circle cx="546.5" cy="427.5" r="1.54" fill="#1a10dc"/>
<rect x="568.0" y="421.3" width="101.3" height="22.7" fill="#F4511E" rx="0" />
<path d="M568.6,425.3 l -0.6,0 c 0,8.5 -6.8,-6.8 -6.8,6.4 s 6.8,-2.1 6.8,6.4 l 0.6,0 Z" fill="#F4511E" />
<text x="577.0" y="437.1" fill="#fff" font-size="12.5" text-anchor="start" >get</text>
<rect x="598.7" y="425.8" width="65.3" height="13.7" fill="#FAB8A3" rx="4" />
<text x="602.7" y="437.0" fill="#000" font-size="12.5" text-anchor="start" >position</text>
<path d="M653.0,431.1 l 5,0 l -2.5,3.5 Z" fill="#F4511E" />
<text x="678.0" y="435.5" fill="#fff" font-size="12.5" text-anchor="start" >+</text>
<path d="M725.5,421.5 L699.8,421.5 L699.8,425.8 c 0,8.5 -6.8,-6.8 -6.8,6.4 s 6.8,-2.1 6.8,6.4 L699.8,444.5 L725.5,444.5 Z" fill="none" stroke="#8890d2" stroke-width="0.9"/>
<rect x="704.0" y="425.8" width="16.0" height="13.7" fill="#B2B8DF" rx="4" />
<text x="707.5" y="437.0" fill="#000" font-size="12.5" text-anchor="start" >1</text>
<rect x="405.6" y="448.5" width="24.0" height="20.8" fill="#3B4AAC" rx="0" />
<path d="M406.2,452.5 l -0.6,0 c 0,8.5 -6.8,-6.8 -6.8,6.4 s 6.8,-2.1 6.8,6.4 l 0.6,0 Z" fill="#3B4AAC" />
<rect x="409.6" y="452.8" width="15.5" height="12.5" fill="#B2B8DF" rx="4" />
<text x="413.1" y="463.4" fill="#000" font-size="12.5" text-anchor="start" >1</text>
<rect x="379.0" y="470.7" width="22.2" height="74.9" fill="#049BE5" rx="0" />
<text x="386.0" y="484.8" fill="#fff" font-size="12.5" text-anchor="end" >st</text>
<text x="386.0" y="539.0" fill="#fff" font-size="12.5" text-anchor="end" >ex</text>
<rect x="401.2" y="470.7" width="126.2" height="53.3" fill="#049BE5" rx="0" />
<text x="410.8" y="484.8" fill="#fff" font-size="12.5" text-anchor="start" >select list item&#160; list</text>
<text x="512.0" y="507.8" fill="#fff" font-size="12.5" text-anchor="end" >index</text>
<rect x="527.0" y="470.2" width="170.8" height="21.8" fill="#F4511E" rx="0" />
<path d="M527.6,474.2 l -0.6,0 c 0,8.5 -6.8,-6.8 -6.8,6.4 s 6.8,-2.1 6.8,6.4 l 0.6,0 Z" fill="#F4511E" />
<text x="536.0" y="485.6" fill="#fff" font-size="12.5" text-anchor="start" >get</text>
<rect x="558.0" y="474.7" width="134.5" height="12.8" fill="#FAB8A3" rx="4" />
<text x="562.0" y="485.5" fill="#000" font-size="12.5" text-anchor="start" >global DataPesanan</text>
<path d="M681.5,479.6 l 5,0 l -2.5,3.5 Z" fill="#F4511E" />
<rect x="527.4" y="492.9" width="203.0" height="31.1" fill="#3B4AAC" rx="0" />
<path d="M528.0,497.5 l -0.6,0 c 0,8.5 -6.8,-6.8 -6.8,6.4 s 6.8,-2.1 6.8,6.4 l 0.6,0 Z" fill="#3B4AAC" />
<rect x="535.5" y="497.0" width="14.0" height="14.0" fill="#1a10dc" rx="3" stroke="#a99be0" stroke-width="0.9"/>
<path d="M542.50,499.66 L543.48,500.35 L543.97,501.45 L545.17,501.33 L546.26,501.83 L546.15,503.02 L545.44,504.00 L546.15,504.98 L546.26,506.17 L545.17,506.67 L543.97,506.55 L543.48,507.65 L542.50,508.34 L541.52,507.65 L541.03,506.55 L539.83,506.67 L538.74,506.17 L538.85,504.98 L539.56,504.00 L538.85,503.02 L538.74,501.83 L539.83,501.33 L541.03,501.45 L541.52,500.35 Z" fill="#d4d0f4" />
<circle cx="542.5" cy="504.0" r="1.54" fill="#1a10dc"/>
<rect x="564.4" y="497.6" width="101.6" height="22.2" fill="#F4511E" rx="0" />
<path d="M565.0,501.6 l -0.6,0 c 0,8.5 -6.8,-6.8 -6.8,6.4 s 6.8,-2.1 6.8,6.4 l 0.6,0 Z" fill="#F4511E" />
<text x="573.5" y="513.2" fill="#fff" font-size="12.5" text-anchor="start" >get</text>
<rect x="595.3" y="502.1" width="65.4" height="13.2" fill="#FAB8A3" rx="4" />
<text x="599.3" y="513.1" fill="#000" font-size="12.5" text-anchor="start" >position</text>
<path d="M649.7,507.2 l 5,0 l -2.5,3.5 Z" fill="#F4511E" />
<text x="674.5" y="511.5" fill="#fff" font-size="12.5" text-anchor="start" >+</text>
<path d="M721.5,497.6 L696.3,497.6 L696.3,501.9 c 0,8.5 -6.8,-6.8 -6.8,6.4 s 6.8,-2.1 6.8,6.4 L696.3,520.3 L721.5,520.3 Z" fill="none" stroke="#8890d2" stroke-width="0.9"/>
<rect x="700.5" y="502.0" width="16.0" height="13.5" fill="#B2B8DF" rx="4" />
<text x="704.0" y="513.1" fill="#000" font-size="12.5" text-anchor="start" >1</text>
<rect x="401.5" y="524.8" width="24.9" height="20.8" fill="#3B4AAC" rx="0" />
<path d="M402.1,528.8 l -0.6,0 c 0,8.5 -6.8,-6.8 -6.8,6.4 s 6.8,-2.1 6.8,6.4 l 0.6,0 Z" fill="#3B4AAC" />
<rect x="405.5" y="529.1" width="16.4" height="12.5" fill="#B2B8DF" rx="4" />
<text x="409.0" y="539.7" fill="#000" font-size="12.5" text-anchor="start" >5</text>
<rect x="379.0" y="632.4" width="256.6" height="22.2" fill="#D81B60" rx="0" />
<rect x="372.0" y="636.5" width="245.4" height="13.4" fill="#EFA6C1" rx="4" />
<text x="612.5" y="647.6" fill="#000" font-size="12.5" text-anchor="end" >u.000webhostapp.com/update_pesanan....</text>
<text x="621.5" y="645.0" fill="#fff" font-size="11" text-anchor="start" >”</text>
<rect x="379.0" y="676.0" width="72.5" height="21.3" fill="#D81B60" rx="0" />
<rect x="370.0" y="680.5" width="63.6" height="13.1" fill="#EFA6C1" rx="4" />
<text x="430.0" y="691.4" fill="#000" font-size="12.5" text-anchor="end" >pesanan=</text>
<text x="438.5" y="689.0" fill="#fff" font-size="11" text-anchor="start" >”</text>
<rect x="379.0" y="698.3" width="142.0" height="21.7" fill="#7CB342" rx="0" />
<rect x="370.0" y="702.4" width="88.4" height="13.6" fill="#D2E6BE" rx="4" />
<text x="440.2" y="713.6" fill="#000" font-size="12.5" text-anchor="end" >_idpesanan</text>
<path d="M447.4,707.7 l 5,0 l -2.5,3.5 Z" fill="#7CB342" />
<text x="463.0" y="715.0" fill="#fff" font-size="11" text-anchor="start" >.</text>
<rect x="470.8" y="702.4" width="44.9" height="13.6" fill="#D2E6BE" rx="4" />
<text x="476.0" y="713.6" fill="#000" font-size="12.5" text-anchor="start" >Text</text>
<path d="M504.7,707.7 l 5,0 l -2.5,3.5 Z" fill="#7CB342" />
<rect x="379.0" y="720.6" width="52.9" height="21.2" fill="#D81B60" rx="0" />
<rect x="370.0" y="724.8" width="44.2" height="13.2" fill="#EFA6C1" rx="4" />
<text x="410.3" y="735.8" fill="#000" font-size="12.5" text-anchor="end" >mlah=</text>
<text x="418.5" y="733.0" fill="#fff" font-size="11" text-anchor="start" >”</text>
<rect x="379.0" y="742.8" width="138.8" height="21.7" fill="#7CB342" rx="0" />
<rect x="370.0" y="746.8" width="84.7" height="13.8" fill="#D2E6BE" rx="4" />
<text x="436.5" y="758.1" fill="#000" font-size="12.5" text-anchor="end" >BoxJumlah</text>
<path d="M443.7,752.2 l 5,0 l -2.5,3.5 Z" fill="#7CB342" />
<text x="459.5" y="759.5" fill="#fff" font-size="11" text-anchor="start" >.</text>
<rect x="467.1" y="746.8" width="45.3" height="13.8" fill="#D2E6BE" rx="4" />
<text x="472.5" y="758.1" fill="#000" font-size="12.5" text-anchor="start" >Text</text>
<path d="M501.4,752.2 l 5,0 l -2.5,3.5 Z" fill="#7CB342" />
<rect x="379.0" y="765.0" width="48.3" height="21.7" fill="#D81B60" rx="0" />
<rect x="370.0" y="769.2" width="39.5" height="13.3" fill="#EFA6C1" rx="4" />
<text x="405.2" y="780.2" fill="#000" font-size="12.5" text-anchor="end" >rga=</text>
<text x="413.5" y="777.5" fill="#fff" font-size="11" text-anchor="start" >”</text>
<rect x="379.0" y="787.4" width="119.2" height="21.1" fill="#7CB342" rx="0" />
<rect x="370.0" y="791.5" width="65.0" height="13.5" fill="#D2E6BE" rx="4" />
<text x="416.5" y="802.6" fill="#000" font-size="12.5" text-anchor="end" >_Harga</text>
<path d="M424.0,796.8 l 5,0 l -2.5,3.5 Z" fill="#7CB342" />
<text x="440.0" y="804.0" fill="#fff" font-size="11" text-anchor="start" >.</text>
<rect x="447.2" y="791.5" width="45.8" height="13.5" fill="#D2E6BE" rx="4" />
<text x="452.5" y="802.6" fill="#000" font-size="12.5" text-anchor="start" >Text</text>
<path d="M482.0,796.8 l 5,0 l -2.5,3.5 Z" fill="#7CB342" />
<rect x="379.0" y="830.4" width="13.8" height="22.2" fill="#D81B60" rx="0" />
<text x="380.0" y="840.0" fill="#fff" font-size="11" text-anchor="start" >”</text>
<rect x="379.0" y="919.0" width="9.3" height="41.8" fill="#FFA726" rx="0" />
<rect x="379.0" y="993.4" width="43.3" height="31.2" fill="#43A047" rx="0" />
<rect x="379.0" y="998.5" width="34.2" height="22.5" fill="#D81B60" rx="0" />
<rect x="370.0" y="1002.6" width="25.5" height="13.2" fill="#EFA6C1" rx="4" />
<text x="383.0" y="1013.6" fill="#000" font-size="12.5" text-anchor="start" >1</text>
<text x="400.5" y="1011.0" fill="#fff" font-size="11" text-anchor="start" >”</text>
<path d="M756.3,273.3 q0,-5 5,-5 L1139.6,268.3 L1139.6,311.7 L788.5,311.7 L788.5,565 L1062,565 L1062,575.6 L761.3,575.6 q-5,0 -5,-5 Z" fill="#F9A72B" />
<rect x="788.0" y="311.0" width="68.0" height="10.0" fill="#F9A72B" rx="0" />
<rect x="1100.0" y="311.0" width="39.6" height="1.6" fill="#F9A72B" rx="0" />
<text x="764.6" y="284.0" fill="#fff" font-size="12.5" text-anchor="start" >when</text>
<rect x="803.0" y="273.0" width="145.0" height="13.7" fill="#FDDCAA" rx="4" />
<text x="807.0" y="284.2" fill="#000" font-size="12.5" text-anchor="start" >Web3_Hapuspesanan</text>
<path d="M937.0,278.4 l 5,0 l -2.5,3.5 Z" fill="#F9A72B" />
<text x="953.0" y="284.0" fill="#fff" font-size="12.5" text-anchor="start" >.Got Text</text>
<rect x="771.9" y="294.4" width="23.9" height="13.6" fill="#DA976F" rx="4" />
<text x="776.1" y="305.6" fill="#000" font-size="12.5" text-anchor="start" >url</text>
<rect x="806.7" y="294.4" width="93.7" height="13.6" fill="#DA976F" rx="4" />
<text x="810.9" y="305.6" fill="#000" font-size="12.5" text-anchor="start" >response Code</text>
<rect x="912.0" y="294.4" width="91.0" height="13.6" fill="#DA976F" rx="4" />
<text x="916.2" y="305.6" fill="#000" font-size="12.5" text-anchor="start" >response Type</text>
<rect x="1014.6" y="294.4" width="108.4" height="13.6" fill="#DA976F" rx="4" />
<text x="1018.8" y="305.6" fill="#000" font-size="12.5" text-anchor="start" >response Content</text>
<text x="765.0" y="325.6" fill="#fff" font-size="12.5" text-anchor="start" >do</text>
<path d="M788.5,319.5 q0,-6.5 6.5,-6.5 L856,313 L856,344.4 L830.8,344.4 L830.8,431.9 L856,431.9 L856,444.4 L830.8,444.4 L830.8,531 L856,531 L856,543.5 L788.5,543.5 Z" fill="#FFAB00" />
<rect x="796.0" y="315.8" width="14.0" height="14.0" fill="#6A4AAA" rx="3" stroke="#c9a86a" stroke-width="0.9"/>
<path d="M803.00,318.46 L803.98,319.15 L804.47,320.25 L805.67,320.13 L806.76,320.63 L806.65,321.82 L805.94,322.80 L806.65,323.78 L806.76,324.97 L805.67,325.47 L804.47,325.35 L803.98,326.45 L803.00,327.14 L802.02,326.45 L801.53,325.35 L800.33,325.47 L799.24,324.97 L799.35,323.78 L800.06,322.80 L799.35,321.82 L799.24,320.63 L800.33,320.13 L801.53,320.25 L802.02,319.15 Z" fill="#FFE3A0" />
<circle cx="803.0" cy="322.8" r="1.54" fill="#6A4AAA"/>
<text x="819.4" y="326.0" fill="#fff" font-size="12.5" text-anchor="start" >if</text>
<text x="796.9" y="358.0" fill="#fff" font-size="12.5" text-anchor="start" >then</text>
<text x="796.7" y="457.5" fill="#fff" font-size="12.5" text-anchor="start" >else</text>
<rect x="856.0" y="313.0" width="249.8" height="30.3" fill="#3B4AAC" rx="0" />
<path d="M856.6,318.0 l -0.6,0 c 0,8.5 -6.8,-6.8 -6.8,6.4 s 6.8,-2.1 6.8,6.4 l 0.6,0 Z" fill="#3B4AAC" />
<rect x="869.8" y="318.0" width="143.7" height="21.6" fill="#F4511E" rx="0" />
<path d="M870.4,322.0 l -0.6,0 c 0,8.5 -6.8,-6.8 -6.8,6.4 s 6.8,-2.1 6.8,6.4 l 0.6,0 Z" fill="#F4511E" />
<text x="878.5" y="333.3" fill="#fff" font-size="12.5" text-anchor="start" >get</text>
<rect x="900.5" y="322.5" width="108.0" height="12.6" fill="#FAB8A3" rx="4" />
<text x="904.5" y="333.2" fill="#000" font-size="12.5" text-anchor="start" >response Code</text>
<path d="M997.5,327.3 l 5,0 l -2.5,3.5 Z" fill="#F4511E" />
<rect x="1017.7" y="321.5" width="29.2" height="12.5" fill="#A9B0DE" rx="4" />
<text x="1021.5" y="332.0" fill="#fff" font-size="12.5" text-anchor="start" >=</text>
<path d="M1036.5,326.5 l5,0 l-2.5,3.5 Z" fill="#fff" />
<path d="M1097.5,318.3 L1058.0,318.3 L1058.0,322.6 c 0,8.5 -6.8,-6.8 -6.8,6.4 s 6.8,-2.1 6.8,6.4 L1058.0,340.5 L1097.5,340.5 Z" fill="none" stroke="#8890d2" stroke-width="0.9"/>
<rect x="1062.5" y="321.5" width="29.2" height="13.1" fill="#B2B8DF" rx="4" />
<text x="1066.0" y="332.4" fill="#000" font-size="12.5" text-anchor="start" >200</text>
<path d="M830.8,350.9 q0,-6.5 6.5,-6.5 L1083.0,344.4 L1083.0,431.9 L837.3,431.9 q-6.5,0 -6.5,-6.5 Z" fill="#5E35B1" />
<text x="839.0" y="359.0" fill="#fff" font-size="12.5" text-anchor="start" >call</text>
<rect x="865.6" y="348.5" width="68.8" height="13.2" fill="#BCA9DF" rx="4" />
<text x="869.5" y="359.5" fill="#000" font-size="12.5" text-anchor="start" >Notifier1</text>
<path d="M923.4,353.6 l 5,0 l -2.5,3.5 Z" fill="#5E35B1" />
<text x="939.6" y="359.0" fill="#fff" font-size="12.5" text-anchor="start" >.Show Message Dialog</text>
<text x="1067.0" y="379.5" fill="#fff" font-size="12.5" text-anchor="end" >message</text>
<text x="1067.0" y="402.5" fill="#fff" font-size="12.5" text-anchor="end" >title</text>
<text x="1067.0" y="424.8" fill="#fff" font-size="12.5" text-anchor="end" >button Text</text>
<rect x="1083.0" y="365.4" width="157.0" height="21.6" fill="#F4511E" rx="0" />
<path d="M1083.6,369.4 l -0.6,0 c 0,8.5 -6.8,-6.8 -6.8,6.4 s 6.8,-2.1 6.8,6.4 l 0.6,0 Z" fill="#F4511E" />
<text x="1092.0" y="380.7" fill="#fff" font-size="12.5" text-anchor="start" >get</text>
<rect x="1114.0" y="369.9" width="120.8" height="12.6" fill="#FAB8A3" rx="4" />
<text x="1118.0" y="380.6" fill="#000" font-size="12.5" text-anchor="start" >response Content</text>
<path d="M1223.8,374.7 l 5,0 l -2.5,3.5 Z" fill="#F4511E" />
<rect x="1083.0" y="387.9" width="46.6" height="20.9" fill="#D81B60" rx="0" />
<path d="M1083.6,392.0 l -0.6,0 c 0,8.5 -6.8,-6.8 -6.8,6.4 s 6.8,-2.1 6.8,6.4 l 0.6,0 Z" fill="#D81B60" />
<text x="1092.0" y="399.5" fill="#fff" font-size="11" text-anchor="start" >“</text>
<rect x="1100.0" y="392.0" width="12.2" height="13.3" fill="#EFA6C1" rx="4" />
<text x="1116.8" y="399.5" fill="#fff" font-size="11" text-anchor="start" >”</text>
<rect x="1083.0" y="409.7" width="61.5" height="22.0" fill="#D81B60" rx="0" />
<path d="M1083.6,414.0 l -0.6,0 c 0,8.5 -6.8,-6.8 -6.8,6.4 s 6.8,-2.1 6.8,6.4 l 0.6,0 Z" fill="#D81B60" />
<text x="1092.0" y="421.0" fill="#fff" font-size="11" text-anchor="start" >“</text>
<rect x="1100.0" y="414.0" width="26.9" height="13.7" fill="#EFA6C1" rx="4" />
<text x="1104.5" y="425.2" fill="#000" font-size="12.5" text-anchor="start" >OK</text>
<text x="1131.7" y="421.0" fill="#fff" font-size="11" text-anchor="start" >”</text>
<path d="M831.0,450.9 q0,-6.5 6.5,-6.5 L1083.0,444.4 L1083.0,531.0 L837.5,531.0 q-6.5,0 -6.5,-6.5 Z" fill="#5E35B1" />
<text x="839.0" y="459.0" fill="#fff" font-size="12.5" text-anchor="start" >call</text>
<rect x="865.8" y="448.7" width="68.5" height="12.6" fill="#BCA9DF" rx="4" />
<text x="869.5" y="459.4" fill="#000" font-size="12.5" text-anchor="start" >Notifier1</text>
<path d="M923.3,453.5 l 5,0 l -2.5,3.5 Z" fill="#5E35B1" />
<text x="939.6" y="459.0" fill="#fff" font-size="12.5" text-anchor="start" >.Show Message Dialog</text>
<text x="1067.0" y="480.0" fill="#fff" font-size="12.5" text-anchor="end" >message</text>
<text x="1067.0" y="501.8" fill="#fff" font-size="12.5" text-anchor="end" >title</text>
<text x="1067.0" y="524.6" fill="#fff" font-size="12.5" text-anchor="end" >button Text</text>
<rect x="1083.0" y="465.7" width="220.0" height="20.9" fill="#D81B60" rx="0" />
<path d="M1083.6,470.0 l -0.6,0 c 0,8.5 -6.8,-6.8 -6.8,6.4 s 6.8,-2.1 6.8,6.4 l 0.6,0 Z" fill="#D81B60" />
<text x="1091.0" y="477.0" fill="#fff" font-size="11" text-anchor="start" >“</text>
<rect x="1100.0" y="469.0" width="185.0" height="13.9" fill="#EFA6C1" rx="4" />
<text x="1105.0" y="480.3" fill="#000" font-size="12.5" text-anchor="start" >Barang tidak Berhasil dihapus...</text>
<text x="1289.5" y="477.0" fill="#fff" font-size="11" text-anchor="start" >”</text>
<rect x="1083.0" y="488.0" width="46.0" height="20.5" fill="#D81B60" rx="0" />
<path d="M1083.6,492.0 l -0.6,0 c 0,8.5 -6.8,-6.8 -6.8,6.4 s 6.8,-2.1 6.8,6.4 l 0.6,0 Z" fill="#D81B60" />
<text x="1092.0" y="499.5" fill="#fff" font-size="11" text-anchor="start" >“</text>
<rect x="1100.0" y="491.6" width="12.0" height="13.1" fill="#EFA6C1" rx="4" />
<text x="1116.5" y="499.5" fill="#fff" font-size="11" text-anchor="start" >”</text>
<rect x="1083.0" y="510.0" width="61.3" height="21.0" fill="#D81B60" rx="0" />
<path d="M1083.6,514.5 l -0.6,0 c 0,8.5 -6.8,-6.8 -6.8,6.4 s 6.8,-2.1 6.8,6.4 l 0.6,0 Z" fill="#D81B60" />
<text x="1092.0" y="521.5" fill="#fff" font-size="11" text-anchor="start" >“</text>
<rect x="1100.0" y="513.8" width="26.7" height="13.4" fill="#EFA6C1" rx="4" />
<text x="1104.5" y="524.9" fill="#000" font-size="12.5" text-anchor="start" >OK</text>
<text x="1131.5" y="521.5" fill="#fff" font-size="11" text-anchor="start" >”</text>
<path d="M788.5,550.0 q0,-6.5 6.5,-6.5 L1045.0,543.5 L1045.0,564.8 L795.0,564.8 q-6.5,0 -6.5,-6.5 Z" fill="#5E35B1" />
<text x="796.7" y="558.0" fill="#fff" font-size="12.5" text-anchor="start" >call</text>
<rect x="823.5" y="547.3" width="68.5" height="12.7" fill="#BCA9DF" rx="4" />
<text x="827.5" y="558.0" fill="#000" font-size="12.5" text-anchor="start" >Notifier1</text>
<path d="M881.0,552.1 l 5,0 l -2.5,3.5 Z" fill="#5E35B1" />
<text x="897.0" y="558.0" fill="#fff" font-size="12.5" text-anchor="start" >.Dismiss Progress Dialog</text>
<path d="M756.4,598 q0,-5 5,-5 L968,593 L968,636.8 L761.4,636.8 q-5,0 -5,-5 Z" fill="#F4511E" />
<circle cx="771.9" cy="603.9" r="6.8" fill="#E8321E" stroke="#5a1a10" stroke-width="0.8"/>
<path d="M768.84,600.84 L774.9599999999999,606.9599999999999 M774.9599999999999,600.84 L768.84,606.9599999999999" stroke="#fff" stroke-width="1.8"/>
<text x="788.0" y="608.5" fill="#fff" font-size="12.5" text-anchor="start" >initialize global</text>
<rect x="873.3" y="597.0" width="64.2" height="14.5" fill="#E9977C" rx="4" />
<text x="877.0" y="608.6" fill="#000" font-size="12.5" text-anchor="start" >ListAngka</text>
<text x="941.0" y="608.5" fill="#fff" font-size="12.5" text-anchor="start" >to</text>
<rect x="968.0" y="593.0" width="126.0" height="44.4" fill="#049BE5" rx="0" />
<path d="M968.6,597.5 l -0.6,0 c 0,8.5 -6.8,-6.8 -6.8,6.4 s 6.8,-2.1 6.8,6.4 l 0.6,0 Z" fill="#049BE5" />
<text x="976.8" y="608.5" fill="#fff" font-size="12.5" text-anchor="start" >select list item&#160; list</text>
<text x="1078.0" y="630.0" fill="#fff" font-size="12.5" text-anchor="end" >index</text>
<rect x="1094.0" y="593.5" width="193.8" height="21.0" fill="#F4511E" rx="0" />
<path d="M1094.6,597.5 l -0.6,0 c 0,8.5 -6.8,-6.8 -6.8,6.4 s 6.8,-2.1 6.8,6.4 l 0.6,0 Z" fill="#F4511E" />
<text x="1125.6" y="608.5" fill="#fff" font-size="12.5" text-anchor="start" >get</text>
<rect x="1147.0" y="598.0" width="135.7" height="12.0" fill="#FAB8A3" rx="4" />
<text x="1151.0" y="608.4" fill="#000" font-size="12.5" text-anchor="start" >global DataPesanan</text>
<path d="M1271.7,602.5 l 5,0 l -2.5,3.5 Z" fill="#F4511E" />
<circle cx="1109" cy="604" r="6.8" fill="#E8321E" stroke="#5a1a10" stroke-width="0.8"/>
<path d="M1105.94,600.94 L1112.06,607.06 M1112.06,600.94 L1105.94,607.06" stroke="#fff" stroke-width="1.8"/>
<rect x="1094.2" y="615.8" width="24.3" height="21.0" fill="#3B4AAC" rx="0" />
<path d="M1094.8,619.8 l -0.6,0 c 0,8.5 -6.8,-6.8 -6.8,6.4 s 6.8,-2.1 6.8,6.4 l 0.6,0 Z" fill="#3B4AAC" />
<rect x="1098.2" y="620.1" width="15.8" height="12.7" fill="#B2B8DF" rx="4" />
<text x="1101.7" y="630.8" fill="#000" font-size="12.5" text-anchor="start" >1</text>
<path d="M756.4,666.6 q0,-5 5,-5 L916.8,661.6 L916.8,683 L761.4,683 q-5,0 -5,-5 Z" fill="#F4511E" />
<text x="764.6" y="676.0" fill="#fff" font-size="12.5" text-anchor="start" >initialize global</text>
<rect x="849.7" y="665.4" width="35.9" height="13.6" fill="#E9977C" rx="4" />
<text x="853.5" y="676.6" fill="#000" font-size="12.5" text-anchor="start" >Total</text>
<text x="889.0" y="676.0" fill="#fff" font-size="12.5" text-anchor="start" >to</text>
<rect x="916.8" y="661.6" width="23.6" height="21.4" fill="#3B4AAC" rx="0" />
<path d="M917.4,665.6 l -0.6,0 c 0,8.5 -6.8,-6.8 -6.8,6.4 s 6.8,-2.1 6.8,6.4 l 0.6,0 Z" fill="#3B4AAC" />
<rect x="920.8" y="665.9" width="15.1" height="13.1" fill="#B2B8DF" rx="4" />
<text x="924.3" y="676.9" fill="#000" font-size="12.5" text-anchor="start" >0</text>
<path d="M756.3,718.5 q0,-5 5,-5 L910,713.5 L910,735 L788.5,735 L788.5,890 L910,890 L910,900.4 L761.3,900.4 q-5,0 -5,-5 Z" fill="#5E35B1" />
<rect x="764.7" y="717.4" width="14.2" height="14.2" fill="#1a10dc" rx="3" stroke="#a99be0" stroke-width="0.9"/>
<path d="M771.80,720.10 L772.79,720.80 L773.29,721.92 L774.51,721.79 L775.61,722.30 L775.50,723.51 L774.78,724.50 L775.50,725.49 L775.61,726.70 L774.51,727.21 L773.29,727.08 L772.79,728.20 L771.80,728.90 L770.81,728.20 L770.31,727.08 L769.09,727.21 L767.99,726.70 L768.10,725.49 L768.82,724.50 L768.10,723.51 L767.99,722.30 L769.09,721.79 L770.31,721.92 L770.81,720.80 Z" fill="#c8b6e8" />
<circle cx="771.8" cy="724.5" r="1.56" fill="#1a10dc"/>
<text x="788.0" y="727.8" fill="#fff" font-size="12.5" text-anchor="start" >to</text>
<rect x="803.0" y="717.7" width="101.0" height="13.5" fill="#BCA9DF" rx="4" />
<text x="807.0" y="728.0" fill="#000" font-size="12.5" text-anchor="start" >PENJUMLAHAN</text>
<text x="765.0" y="750.0" fill="#fff" font-size="12.5" text-anchor="start" >do</text>
<rect x="788.0" y="734.5" width="42.0" height="7.5" fill="#5E35B1" rx="0" />
<path d="M788.5,740.4 q0,-5 5,-5 L942.7,735.4 L942.7,802.7 L820.8,802.7 L820.8,880 L942.7,880 L942.7,888.5 L793.5,888.5 q-5,0 -5,-5 Z" fill="#FFAB00" />
<text x="797.0" y="751.0" fill="#fff" font-size="12.5" text-anchor="start" >for each</text>
<rect x="846.0" y="739.6" width="51.5" height="14.1" fill="#DE9878" rx="4" />
<text x="850.5" y="751.1" fill="#000" font-size="12.5" text-anchor="start" >number</text>
<text x="901.7" y="751.0" fill="#fff" font-size="12.5" text-anchor="start" >from</text>
<text x="926.7" y="773.3" fill="#fff" font-size="12.5" text-anchor="end" >to</text>
<text x="926.7" y="795.8" fill="#fff" font-size="12.5" text-anchor="end" >by</text>
<text x="797.0" y="815.6" fill="#fff" font-size="12.5" text-anchor="start" >do</text>
<rect x="943.0" y="735.8" width="24.5" height="20.9" fill="#3B4AAC" rx="0" />
<path d="M943.6,739.8 l -0.6,0 c 0,8.5 -6.8,-6.8 -6.8,6.4 s 6.8,-2.1 6.8,6.4 l 0.6,0 Z" fill="#3B4AAC" />
<rect x="947.0" y="740.1" width="16.0" height="12.6" fill="#B2B8DF" rx="4" />
<text x="950.5" y="750.8" fill="#000" font-size="12.5" text-anchor="start" >1</text>
<rect x="943.0" y="758.0" width="115.0" height="21.7" fill="#049BE5" rx="0" />
<path d="M943.6,762.5 l -0.6,0 c 0,8.5 -6.8,-6.8 -6.8,6.4 s 6.8,-2.1 6.8,6.4 l 0.6,0 Z" fill="#049BE5" />
<text x="951.7" y="773.0" fill="#fff" font-size="12.5" text-anchor="start" >length of list&#160; list</text>
<rect x="1058.0" y="758.0" width="170.7" height="21.7" fill="#F4511E" rx="0" />
<path d="M1058.6,762.0 l -0.6,0 c 0,8.5 -6.8,-6.8 -6.8,6.4 s 6.8,-2.1 6.8,6.4 l 0.6,0 Z" fill="#F4511E" />
<text x="1067.5" y="773.4" fill="#fff" font-size="12.5" text-anchor="start" >get</text>
<rect x="1089.0" y="762.5" width="134.3" height="12.7" fill="#FAB8A3" rx="4" />
<text x="1093.0" y="773.2" fill="#000" font-size="12.5" text-anchor="start" >global DataPesanan</text>
<path d="M1212.3,767.4 l 5,0 l -2.5,3.5 Z" fill="#F4511E" />
<rect x="943.0" y="780.8" width="24.5" height="20.9" fill="#3B4AAC" rx="0" />
<path d="M943.6,784.8 l -0.6,0 c 0,8.5 -6.8,-6.8 -6.8,6.4 s 6.8,-2.1 6.8,6.4 l 0.6,0 Z" fill="#3B4AAC" />
<rect x="947.0" y="785.1" width="16.0" height="12.6" fill="#B2B8DF" rx="4" />
<text x="950.5" y="795.8" fill="#000" font-size="12.5" text-anchor="start" >1</text>
<rect x="820.0" y="802.0" width="10.0" height="8.0" fill="#FFAB00" rx="0" />
<path d="M820.8,809.2 q0,-6.5 6.5,-6.5 L967.0,802.7 L967.0,855.7 L820.8,855.7 Z" fill="#F4511E" />
<text x="828.8" y="816.7" fill="#fff" font-size="12.5" text-anchor="start" >set</text>
<rect x="850.0" y="806.7" width="85.4" height="13.1" fill="#FAB8A3" rx="4" />
<text x="854.0" y="817.6" fill="#000" font-size="12.5" text-anchor="start" >global Total</text>
<path d="M924.4,811.8 l 5,0 l -2.5,3.5 Z" fill="#F4511E" />
<text x="940.0" y="816.7" fill="#fff" font-size="12.5" text-anchor="start" >to</text>
<path d="M967,802.3 H1461.2 V855.8 H967 Z M1306.2,830 H1452.3 V851.8 H1306.2 Z" fill="#3B4AAC" fill-rule="evenodd"/>
<path d="M967.6,807.0 l -0.6,0 c 0,8.5 -6.8,-6.8 -6.8,6.4 s 6.8,-2.1 6.8,6.4 l 0.6,0 Z" fill="#3B4AAC" />
<rect x="975.0" y="806.7" width="14.0" height="14.0" fill="#1a10dc" rx="3" stroke="#a99be0" stroke-width="0.9"/>
<path d="M982.00,809.36 L982.98,810.05 L983.47,811.15 L984.67,811.03 L985.76,811.53 L985.65,812.72 L984.94,813.70 L985.65,814.68 L985.76,815.87 L984.67,816.37 L983.47,816.25 L982.98,817.35 L982.00,818.04 L981.02,817.35 L980.53,816.25 L979.33,816.37 L978.24,815.87 L978.35,814.68 L979.06,813.70 L978.35,812.72 L978.24,811.53 L979.33,811.03 L980.53,811.15 L981.02,810.05 Z" fill="#d4d0f4" />
<circle cx="982.0" cy="813.7" r="1.54" fill="#1a10dc"/>
<rect x="1004.0" y="807.5" width="121.8" height="22.5" fill="#F4511E" rx="0" />
<path d="M1004.6,811.5 l -0.6,0 c 0,8.5 -6.8,-6.8 -6.8,6.4 s 6.8,-2.1 6.8,6.4 l 0.6,0 Z" fill="#F4511E" />
<text x="1013.3" y="823.2" fill="#fff" font-size="12.5" text-anchor="start" >get</text>
<rect x="1035.0" y="812.0" width="85.0" height="13.5" fill="#FAB8A3" rx="4" />
<text x="1039.0" y="823.1" fill="#000" font-size="12.5" text-anchor="start" >global Total</text>
<path d="M1109.0,817.2 l 5,0 l -2.5,3.5 Z" fill="#F4511E" />
<text x="1134.5" y="822.0" fill="#fff" font-size="12.5" text-anchor="start" >+</text>
<rect x="1155.8" y="807.3" width="125.9" height="44.5" fill="#049BE5" rx="0" />
<path d="M1156.4,812.0 l -0.6,0 c 0,8.5 -6.8,-6.8 -6.8,6.4 s 6.8,-2.1 6.8,6.4 l 0.6,0 Z" fill="#049BE5" />
<text x="1165.0" y="821.0" fill="#fff" font-size="12.5" text-anchor="start" >select list item&#160; list</text>
<text x="1265.8" y="844.5" fill="#fff" font-size="12.5" text-anchor="end" >index</text>
<rect x="1281.7" y="807.3" width="170.6" height="21.7" fill="#F4511E" rx="0" />
<path d="M1282.3,811.3 l -0.6,0 c 0,8.5 -6.8,-6.8 -6.8,6.4 s 6.8,-2.1 6.8,6.4 l 0.6,0 Z" fill="#F4511E" />
<text x="1290.5" y="822.6" fill="#fff" font-size="12.5" text-anchor="start" >get</text>
<rect x="1312.5" y="811.8" width="134.5" height="12.7" fill="#FAB8A3" rx="4" />
<text x="1316.5" y="822.5" fill="#000" font-size="12.5" text-anchor="start" >global DataPesanan</text>
<path d="M1436.0,816.6 l 5,0 l -2.5,3.5 Z" fill="#F4511E" />
<rect x="1281.7" y="830.0" width="24.5" height="21.8" fill="#3B4AAC" rx="0" />
<path d="M1282.3,834.0 l -0.6,0 c 0,8.5 -6.8,-6.8 -6.8,6.4 s 6.8,-2.1 6.8,6.4 l 0.6,0 Z" fill="#3B4AAC" />
<rect x="1285.7" y="834.3" width="16.0" height="13.5" fill="#B2B8DF" rx="4" />
<text x="1289.2" y="845.4" fill="#000" font-size="12.5" text-anchor="start" >6</text>
<path d="M820.8,855.2 L1005.8,855.2 L1005.8,877.5 L827.3,877.5 q-6.5,0 -6.5,-6.5 Z" fill="#388E3C" />
<text x="828.8" y="871.0" fill="#fff" font-size="12.5" text-anchor="start" >set</text>
<rect x="853.0" y="860.4" width="60.0" height="13.1" fill="#A9D0AA" rx="4" />
<text x="857.5" y="871.4" fill="#000" font-size="12.5" text-anchor="start" >Label2</text>
<path d="M902.0,865.5 l 5,0 l -2.5,3.5 Z" fill="#388E3C" />
<text x="917.5" y="871.0" fill="#fff" font-size="11" text-anchor="start" >.</text>
<rect x="926.0" y="860.4" width="44.8" height="13.1" fill="#A9D0AA" rx="4" />
<text x="930.5" y="871.4" fill="#000" font-size="12.5" text-anchor="start" >Text</text>
<path d="M959.8,865.5 l 5,0 l -2.5,3.5 Z" fill="#388E3C" />
<text x="979.0" y="871.0" fill="#fff" font-size="12.5" text-anchor="start" >to</text>
<rect x="1005.8" y="856.2" width="120.9" height="21.3" fill="#F4511E" rx="0" />
<path d="M1006.4,860.2 l -0.6,0 c 0,8.5 -6.8,-6.8 -6.8,6.4 s 6.8,-2.1 6.8,6.4 l 0.6,0 Z" fill="#F4511E" />
<text x="1014.7" y="871.4" fill="#fff" font-size="12.5" text-anchor="start" >get</text>
<rect x="1035.8" y="860.7" width="85.5" height="12.3" fill="#FAB8A3" rx="4" />
<text x="1039.8" y="871.2" fill="#000" font-size="12.5" text-anchor="start" >global Total</text>
<path d="M1110.3,865.4 l 5,0 l -2.5,3.5 Z" fill="#F4511E" />
<path d="M801.0,311.4 l5.1,3.6 l2.6,0 l5.1,-3.6 Z" fill="#F9A72B" />
<path d="M843.3,344.1 l5.1,3.6 l2.6,0 l5.1,-3.6 Z" fill="#FFAB00" />
<path d="M843.3,431.6 l5.1,3.6 l2.6,0 l5.1,-3.6 Z" fill="#5E35B1" />
<path d="M843.3,444.1 l5.1,3.6 l2.6,0 l5.1,-3.6 Z" fill="#FFAB00" />
<path d="M843.3,530.7 l5.1,3.6 l2.6,0 l5.1,-3.6 Z" fill="#5E35B1" />
<path d="M801.0,543.2 l5.1,3.6 l2.6,0 l5.1,-3.6 Z" fill="#FFAB00" />
<path d="M801.0,564.5 l5.1,3.6 l2.6,0 l5.1,-3.6 Z" fill="#5E35B1" />
<path d="M801.0,734.8 l5.1,3.6 l2.6,0 l5.1,-3.6 Z" fill="#5E35B1" />
<path d="M833.3,802.4 l5.1,3.6 l2.6,0 l5.1,-3.6 Z" fill="#FFAB00" />
<path d="M833.3,854.9 l5.1,3.6 l2.6,0 l5.1,-3.6 Z" fill="#F4511E" />
<path d="M833.3,877.2 l5.1,3.6 l2.6,0 l5.1,-3.6 Z" fill="#388E3C" />
<path d="M801.0,888.2 l5.1,3.6 l2.6,0 l5.1,-3.6 Z" fill="#FFAB00" />
<path d="M1130,582.7 L1115.8,599.6 L1145.6,582.7 Z" fill="#FBB6A4" stroke="#F06F50" stroke-width="1"/>
<rect x="1059.4" y="556.2" width="201.7" height="26.5" fill="#FBB6A4" rx="5" stroke="#F06F50" stroke-width="1"/>
<path d="M1131,581.5 L1117,598 L1144.5,581.5 Z" fill="#FBB6A4" />
<text x="1065.0" y="573.2" fill="#000" font-size="12.5" text-anchor="start" >This block cannot be in a definition</text>
  </g>
</svg>

<!-- canvas extras -->
<svg class="a" style="left:0;top:0" width="1920" height="1080">
  <!-- warnings -->
  <g fill="#eee" stroke="#222" stroke-width="1.3">
    <path d="M422.5,907 l13,-13 l13,13 Z"/><path d="M422.5,941.5 l13,13 l13,-13 Z"/>
    <path d="M506,907 l13,-13 l13,13 Z"/><path d="M506,941.5 l13,13 l13,-13 Z"/>
  </g>
  <path d="M432.8,915 l10,18 l-20,0 Z" fill="#fafa9a" stroke="#aaa" stroke-width="1" stroke-linejoin="round"/>
  <path d="M432.8,920 l0,6 M432.8,929 l0,1.5" stroke="#555" stroke-width="1.2"/>
  <circle cx="514" cy="924.2" r="9.8" fill="#ee5a5a" stroke="#666" stroke-width="1"/>
  <path d="M509.5,919.7 l9,9 M518.5,919.7 l-9,9" stroke="#fff" stroke-width="2.4"/>
  <text x="448.3" y="931.5" font-size="16" fill="#222" font-family="Liberation Sans">0</text>
  <text x="529.5" y="931.5" font-size="16" fill="#222" font-family="Liberation Sans">2</text>
  <rect x="404.3" y="958.5" width="149.7" height="24.2" fill="#efefef" stroke="#333" stroke-width="1.6"/>
  <text x="421.5" y="977" font-size="16.4" fill="#111" font-family="Liberation Sans">Show Warnings</text>
  <!-- backpack -->
  <g stroke="#0c211d" stroke-width="2.2" stroke-linejoin="round" stroke-linecap="round">
    <path d="M1883,303 q9,3 11,22 q3,20 2,37 q-1,3 -6,3.5 l-6,0.5 l1,-6 q3,-1 3,-6 q0,-22 -5,-40 Z" fill="#0c211d"/>
    <path d="M1832.5,287 q0,-10.5 9.5,-10.5 q9.5,0 9.5,10.5" fill="none" stroke-width="4"/>
    <path d="M1789,306 l10,-3 l-4,-3 l1,-4 l11,-4.5 l5,1.5 l-1,3 l8.5,-2 l1.5,39.5 l-21.5,0 Z" fill="#d2622a"/>
    <path d="M1821.5,292.5 l8,0 l2,-4 q6,-5 13,0 l1.5,4 l6,0 l0.5,41 l-31,0 Z" fill="#48a6d6"/>
    <path d="M1854,292.5 l9.5,-1.5 l9,5 l6,0.7 l12.5,3.7 l-17,37 l-20,-3.7 Z" fill="#7b4f8a"/>
    <path d="M1797,334 q40,-1 77,3 q9,4 10,20 l-1,14 q-10,4 -50,4.5 q-30,0 -40,-6 q-10,-7 -6,-20 q3,-10 10,-15.5 Z" fill="#4db6ac"/>
    <path d="M1805,337 q-13,16 -5,26 q14,10 38,2 q18,-8 34,-24" fill="none" stroke-width="2"/>
    <path d="M1811,368 q30,4 50,-14 l10,-11" fill="none" stroke-width="2"/>
    <path d="M1861,352 l0,9 q0,3 -3,3 l-11,0" fill="none" stroke-width="2"/>
    <path d="M1876,338 l-3,32" fill="none" stroke-width="2"/>
  </g>
  <!-- target / zoom -->
  <circle cx="1861.6" cy="764.4" r="15.3" fill="none" stroke="#222" stroke-width="1.8"/>
  <circle cx="1861.6" cy="764.4" r="5.3" fill="#222"/>
  <path d="M1861.6,745 l0,4 M1861.6,780 l0,4 M1842,764.4 l4,0 M1877.3,764.4 l4,0" stroke="#222" stroke-width="1.8"/>
  <circle cx="1860.1" cy="818.7" r="18.7" fill="#fff" stroke="#222" stroke-width="1.9"/>
  <path d="M1850.5,818.7 l19.2,0 M1860.1,809.1 l0,19.2" stroke="#222" stroke-width="2.2"/>
  <circle cx="1860.1" cy="861.6" r="18.7" fill="#fff" stroke="#222" stroke-width="1.9"/>
  <path d="M1850.5,861.6 l19.2,0" stroke="#222" stroke-width="2.2"/>
  <!-- trash -->
  <path d="M1823.7,919 l16,0 l2,-3.5 l19,0 l2,3.5 l14,0 l0,7.5 l-53,0 Z" fill="#1c1c1c"/>
  <path d="M1827.6,930.4 l45,0 l0,48.6 q0,4 -4,4 l-37,0 q-4,0 -4,-4 Z" fill="#1c1c1c"/>
  <!-- canvas scrollbars -->
  <rect x="1908" y="470" width="14" height="279.6" rx="7" fill="#cccccc"/>
  <rect x="1237" y="1010.4" width="558" height="12.4" rx="6.2" fill="#cccccc"/>
</svg>

<!-- ============ TASKBAR ============ -->
<div class="a" style="left:0;top:1030px;width:1920px;height:50px;background:linear-gradient(90deg,#dcd4e6 0%,#ddd3e5 50%,#e2d4e1 100%)"></div>
<div class="a" style="left:61px;top:1030px;width:428px;height:50px;background:#fff;border:1px solid #d8d8d8;border-bottom:none"></div>
<div class="a" style="left:864px;top:1030px;width:61px;height:50px;background:#efe6ee"></div>
<div class="a" style="left:621px;top:1077px;width:50px;height:3px;background:#0a64c8"></div>
<div class="a" style="left:864px;top:1077px;width:61px;height:3px;background:#0a64c8"></div>
<svg class="a" style="left:0;top:1030px" width="1920" height="50">
  <g fill="#111"><path d="M20,16.5 l9,-1.2 l0,9.2 l-9,0 Z"/><path d="M30.5,15.1 l10,-1.3 l0,10.7 l-10,0 Z"/><path d="M20,26 l9,0 l0,9.2 l-9,-1.2 Z"/><path d="M30.5,26 l10,0 l0,10.7 l-10,-1.3 Z"/></g>
  <circle cx="86.5" cy="20.5" r="7" fill="none" stroke="#222" stroke-width="1.5"/>
  <path d="M81.5,25.5 l-7,7" stroke="#222" stroke-width="1.6"/>
  <g fill="none" stroke="#222" stroke-width="1.3">
    <path d="M510,16 l10,0 M510,35 l10,0 M512,19 l0,13 l7,0 l0,-13 Z"/>
    <path d="M528,15 l0,5 M528,30 l0,6"/>
  </g>
  <rect x="526.5" y="23" width="3" height="3" fill="#222"/>
  <!-- edge -->
  <circle cx="583.5" cy="25" r="15" fill="#1479d2"/>
  <path d="M569,24 q1,-14 15,-14.5 q14,0.5 15,13 q-1,5 -8,5 q-6,0 -7,-4 q4,-1 3,-4 q-5,-5 -11,-3 q-6,2 -7,7.5 Z" fill="#37c27e"/>
  <path d="M569,25 q0,-8 8,-10 q-5,5 -3,12 q3,9 14,9 q7,0 10,-5 q-3,8 -12,9 q-15,1 -17,-15 Z" fill="#0b4fa8"/>
  <!-- explorer -->
  <path d="M632,14 l10,0 l3,3 l15,0 l0,18 l-28,0 Z" fill="#f6c445"/>
  <rect x="632" y="19" width="28" height="16" fill="#fbd86b"/>
  <path d="M639,35 l0,-8 l14,0 l0,8 l-3.5,0 l0,-4.5 l-7,0 l0,4.5 Z" fill="#2b7bd6"/>
  <!-- mail -->
  <g transform="translate(0,3)">
  <path d="M692.5,17 l15,-10 l15,10 l0,19 l-30,0 Z" fill="#0f6bcb"/>
  <path d="M692.5,17 l30,0 l0,19 l-30,0 Z" fill="#2ea6ee"/>
  <path d="M692.5,17 l15,10 l15,-10" fill="#e9f2fb"/>
  <path d="M692.5,36 l15,-10 l15,10 Z" fill="#3ec0f7"/>
  </g>
  <!-- kodular-ish app -->
  <rect x="755" y="10" width="30" height="30" fill="#2e6ff2"/>
  <path d="M758,36 l7,-19 l4,0 l-7,19 Z M765,36 l7,-19 l4,0 l-7,19 Z M775,36 l4,-19 l2,0 l0,19 Z" fill="#fff" opacity=".85"/>
  <!-- xbox -->
  <rect x="817" y="10" width="30" height="30" rx="2" fill="#107c10"/>
  <circle cx="832" cy="25" r="10" fill="none" stroke="#fff" stroke-width="2.4"/>
  <path d="M825,19 q7,4 14,12 M839,19 q-7,4 -14,12" stroke="#fff" stroke-width="3" fill="none"/>
  <!-- chrome -->
  <path d="M894,24 L881.44,16.75 A14.5,14.5 0 0 1 906.56,16.75 Z" fill="#db4437"/>
  <path d="M894,24 L906.56,16.75 A14.5,14.5 0 0 1 894,38.5 Z" fill="#fcc934"/>
  <path d="M894,24 L894,38.5 A14.5,14.5 0 0 1 881.44,16.75 Z" fill="#1e9e55"/>
  <circle cx="894" cy="24" r="6.6" fill="#fff"/><circle cx="894" cy="24" r="5" fill="#4285f4"/>
  <circle cx="901.5" cy="31.5" r="8.5" fill="#4b3732"/>
  <text x="898" y="36" font-size="10" fill="#eee" font-family="Liberation Sans">E</text>
  <!-- weather -->
  <circle cx="1405" cy="18" r="8" fill="#f8b818"/>
  <path d="M1391,34 q-1,-8 7,-8 q2,-7 10,-5 q7,0 8,7 q4,1 3,6 Z" fill="#d8eefa" stroke="#b7d6ec" stroke-width="1"/>
  <!-- tray -->
  <path d="M1619.5,29.5 l7.5,-7.5 l7.5,7.5" stroke="#111" stroke-width="1.3" fill="none"/>
  <rect x="1651" y="22" width="9" height="9" rx="1.5" fill="none" stroke="#222" stroke-width="1.2"/>
  <path d="M1660,25 l4,-2 l0,7 l-4,-2" fill="none" stroke="#222" stroke-width="1.2"/>
  <path d="M1650,20 q5,-6 10,0 M1650,33 q5,6 10,0" fill="none" stroke="#222" stroke-width="1"/>
  <rect x="1681" y="22.5" width="14" height="8" fill="#222"/>
  <rect x="1695.5" y="25" width="1.5" height="3" fill="#222"/>
  <path d="M1677,23 l4,0 M1678,21 l0,4" stroke="#222" stroke-width="1.2"/>
  <path d="M1711,33 q0,-12 12,-12 M1714,33 q0,-9 9,-9 M1717,33 q0,-6 6,-6" fill="none" stroke="#333" stroke-width="1.3"/>
  <circle cx="1721.5" cy="31.5" r="1.6" fill="#222"/>
  <path d="M1737,24 l3.5,0 l4.5,-4.5 l0,14.5 l-4.5,-4.5 l-3.5,0 Z" fill="none" stroke="#222" stroke-width="1.2"/>
  <path d="M1748,23 q2,4 0,8 M1751,21 q4,6 0,12 M1754,19 q5.5,8 0,16" fill="none" stroke="#666" stroke-width="1"/>
  <rect x="1914" y="0" width="1" height="50" fill="#b9b0bd"/>
  <!-- notifications -->
  <path d="M1869,15 l20,0 l0,14 l-15,0 l-5,4 Z" fill="#111"/>
  <g fill="#fff"><rect x="1872" y="18.5" width="14" height="1.3"/><rect x="1872" y="21.5" width="14" height="1.3"/><rect x="1872" y="24.5" width="10" height="1.3"/></g>
  <circle cx="1888" cy="34" r="8" fill="#dcdcdc" stroke="#888" stroke-width="1"/>
  <text x="1884.5" y="38.5" font-size="12" fill="#222" font-family="Liberation Sans">1</text>
</svg>
<div class="t" style="left:111px;top:1046px;font-size:18.4px;color:#222">Type here to search</div>
<div class="t" style="left:1429px;top:1047px;font-size:17.2px;color:#222">33°C&nbsp; Sebagian cerah</div>
<div class="t" style="left:1790.5px;top:1037px;font-size:14px;color:#222">16:34</div>
<div class="t" style="left:1769.5px;top:1059.5px;font-size:15px;color:#222">07/05/2022</div>
</body></html>
